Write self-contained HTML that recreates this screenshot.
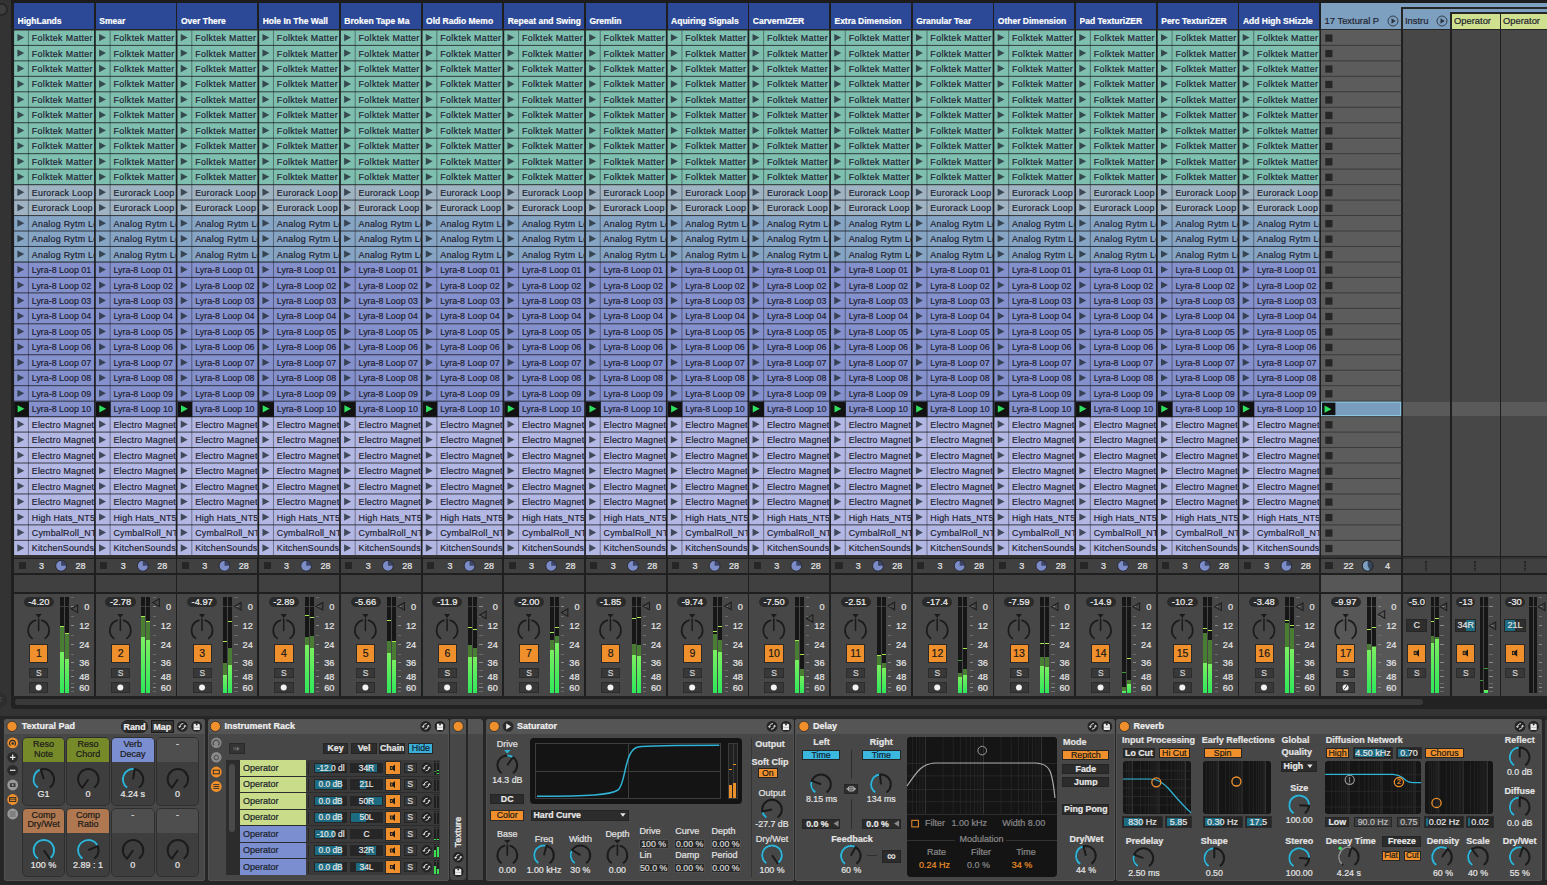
<!DOCTYPE html>
<html><head><meta charset="utf-8"><style>
html,body{margin:0;padding:0;}
body{width:1547px;height:885px;overflow:hidden;position:relative;background:#2f2f2f;font-family:"Liberation Sans", sans-serif;}
.a{position:absolute;}
.t{white-space:nowrap;-webkit-text-stroke:0.2px currentColor;}
.clip{overflow:hidden;}
svg{position:absolute;left:0;top:0;}
</style></head><body>
<div class="a" style="left:0px;top:0px;width:11px;height:709px;background:#333333;"></div>
<div class="a" style="left:11px;top:0px;width:1536px;height:709px;background:#1f1f1f;border-bottom-left-radius:7px;"></div>
<div class="a" style="left:11px;top:0px;width:1536px;height:3.3px;background:#1c1c1c;"></div>
<div class="a" style="left:14.1px;top:3.3px;width:79.95px;height:25.3px;background:#2b4997;"></div>
<div class="a" style="left:95.79px;top:3.3px;width:79.95px;height:25.3px;background:#2b4997;"></div>
<div class="a" style="left:177.47px;top:3.3px;width:79.95px;height:25.3px;background:#2b4997;"></div>
<div class="a" style="left:259.16px;top:3.3px;width:79.95px;height:25.3px;background:#2b4997;"></div>
<div class="a" style="left:340.85px;top:3.3px;width:79.95px;height:25.3px;background:#2b4997;"></div>
<div class="a" style="left:422.54px;top:3.3px;width:79.95px;height:25.3px;background:#2b4997;"></div>
<div class="a" style="left:504.22px;top:3.3px;width:79.95px;height:25.3px;background:#2b4997;"></div>
<div class="a" style="left:585.91px;top:3.3px;width:79.95px;height:25.3px;background:#2b4997;"></div>
<div class="a" style="left:667.6px;top:3.3px;width:79.95px;height:25.3px;background:#2b4997;"></div>
<div class="a" style="left:749.28px;top:3.3px;width:79.95px;height:25.3px;background:#2b4997;"></div>
<div class="a" style="left:830.97px;top:3.3px;width:79.95px;height:25.3px;background:#2b4997;"></div>
<div class="a" style="left:912.66px;top:3.3px;width:79.95px;height:25.3px;background:#2b4997;"></div>
<div class="a" style="left:994.34px;top:3.3px;width:79.95px;height:25.3px;background:#2b4997;"></div>
<div class="a" style="left:1076.03px;top:3.3px;width:79.95px;height:25.3px;background:#2b4997;"></div>
<div class="a" style="left:1157.72px;top:3.3px;width:79.95px;height:25.3px;background:#2b4997;"></div>
<div class="a" style="left:1239.4px;top:3.3px;width:79.95px;height:25.3px;background:#2b4997;"></div>
<svg class="a" style="left:0;top:0" width="1547" height="885"><defs><path id="p" d="M0 0L6.9 3.65L0 7.3Z"/><clipPath id="k0"><rect x="29.1" y="29" width="64.95" height="530"/></clipPath><clipPath id="k1"><rect x="110.79" y="29" width="64.95" height="530"/></clipPath><clipPath id="k2"><rect x="192.47" y="29" width="64.95" height="530"/></clipPath><clipPath id="k3"><rect x="274.16" y="29" width="64.95" height="530"/></clipPath><clipPath id="k4"><rect x="355.85" y="29" width="64.95" height="530"/></clipPath><clipPath id="k5"><rect x="437.54" y="29" width="64.95" height="530"/></clipPath><clipPath id="k6"><rect x="519.22" y="29" width="64.95" height="530"/></clipPath><clipPath id="k7"><rect x="600.91" y="29" width="64.95" height="530"/></clipPath><clipPath id="k8"><rect x="682.6" y="29" width="64.95" height="530"/></clipPath><clipPath id="k9"><rect x="764.28" y="29" width="64.95" height="530"/></clipPath><clipPath id="k10"><rect x="845.97" y="29" width="64.95" height="530"/></clipPath><clipPath id="k11"><rect x="927.66" y="29" width="64.95" height="530"/></clipPath><clipPath id="k12"><rect x="1009.34" y="29" width="64.95" height="530"/></clipPath><clipPath id="k13"><rect x="1091.03" y="29" width="64.95" height="530"/></clipPath><clipPath id="k14"><rect x="1172.72" y="29" width="64.95" height="530"/></clipPath><clipPath id="k15"><rect x="1254.4" y="29" width="64.95" height="530"/></clipPath></defs><rect x="14.1" y="30.43" width="79.95" height="154.67" fill="#7fbfb0"/><rect x="14.1" y="185.1" width="79.95" height="30.93" fill="#9fb3c2"/><rect x="14.1" y="216.03" width="79.95" height="46.4" fill="#86a4c4"/><rect x="14.1" y="262.44" width="79.95" height="154.67" fill="#8591cd"/><rect x="14.1" y="417.11" width="79.95" height="139.2" fill="#b3b7e3"/><rect x="27.9" y="30.43" width="1.05" height="525.88" fill="rgba(0,0,0,0.36)"/><rect x="14.1" y="401.64" width="14.85" height="15.47" fill="#121212"/><rect x="95.79" y="30.43" width="79.95" height="154.67" fill="#7fbfb0"/><rect x="95.79" y="185.1" width="79.95" height="30.93" fill="#9fb3c2"/><rect x="95.79" y="216.03" width="79.95" height="46.4" fill="#86a4c4"/><rect x="95.79" y="262.44" width="79.95" height="154.67" fill="#8591cd"/><rect x="95.79" y="417.11" width="79.95" height="139.2" fill="#b3b7e3"/><rect x="109.59" y="30.43" width="1.05" height="525.88" fill="rgba(0,0,0,0.36)"/><rect x="95.79" y="401.64" width="14.85" height="15.47" fill="#121212"/><rect x="177.47" y="30.43" width="79.95" height="154.67" fill="#7fbfb0"/><rect x="177.47" y="185.1" width="79.95" height="30.93" fill="#9fb3c2"/><rect x="177.47" y="216.03" width="79.95" height="46.4" fill="#86a4c4"/><rect x="177.47" y="262.44" width="79.95" height="154.67" fill="#8591cd"/><rect x="177.47" y="417.11" width="79.95" height="139.2" fill="#b3b7e3"/><rect x="191.27" y="30.43" width="1.05" height="525.88" fill="rgba(0,0,0,0.36)"/><rect x="177.47" y="401.64" width="14.85" height="15.47" fill="#121212"/><rect x="259.16" y="30.43" width="79.95" height="154.67" fill="#7fbfb0"/><rect x="259.16" y="185.1" width="79.95" height="30.93" fill="#9fb3c2"/><rect x="259.16" y="216.03" width="79.95" height="46.4" fill="#86a4c4"/><rect x="259.16" y="262.44" width="79.95" height="154.67" fill="#8591cd"/><rect x="259.16" y="417.11" width="79.95" height="139.2" fill="#b3b7e3"/><rect x="272.96" y="30.43" width="1.05" height="525.88" fill="rgba(0,0,0,0.36)"/><rect x="259.16" y="401.64" width="14.85" height="15.47" fill="#121212"/><rect x="340.85" y="30.43" width="79.95" height="154.67" fill="#7fbfb0"/><rect x="340.85" y="185.1" width="79.95" height="30.93" fill="#9fb3c2"/><rect x="340.85" y="216.03" width="79.95" height="46.4" fill="#86a4c4"/><rect x="340.85" y="262.44" width="79.95" height="154.67" fill="#8591cd"/><rect x="340.85" y="417.11" width="79.95" height="139.2" fill="#b3b7e3"/><rect x="354.65" y="30.43" width="1.05" height="525.88" fill="rgba(0,0,0,0.36)"/><rect x="340.85" y="401.64" width="14.85" height="15.47" fill="#121212"/><rect x="422.54" y="30.43" width="79.95" height="154.67" fill="#7fbfb0"/><rect x="422.54" y="185.1" width="79.95" height="30.93" fill="#9fb3c2"/><rect x="422.54" y="216.03" width="79.95" height="46.4" fill="#86a4c4"/><rect x="422.54" y="262.44" width="79.95" height="154.67" fill="#8591cd"/><rect x="422.54" y="417.11" width="79.95" height="139.2" fill="#b3b7e3"/><rect x="436.34" y="30.43" width="1.05" height="525.88" fill="rgba(0,0,0,0.36)"/><rect x="422.54" y="401.64" width="14.85" height="15.47" fill="#121212"/><rect x="504.22" y="30.43" width="79.95" height="154.67" fill="#7fbfb0"/><rect x="504.22" y="185.1" width="79.95" height="30.93" fill="#9fb3c2"/><rect x="504.22" y="216.03" width="79.95" height="46.4" fill="#86a4c4"/><rect x="504.22" y="262.44" width="79.95" height="154.67" fill="#8591cd"/><rect x="504.22" y="417.11" width="79.95" height="139.2" fill="#b3b7e3"/><rect x="518.02" y="30.43" width="1.05" height="525.88" fill="rgba(0,0,0,0.36)"/><rect x="504.22" y="401.64" width="14.85" height="15.47" fill="#121212"/><rect x="585.91" y="30.43" width="79.95" height="154.67" fill="#7fbfb0"/><rect x="585.91" y="185.1" width="79.95" height="30.93" fill="#9fb3c2"/><rect x="585.91" y="216.03" width="79.95" height="46.4" fill="#86a4c4"/><rect x="585.91" y="262.44" width="79.95" height="154.67" fill="#8591cd"/><rect x="585.91" y="417.11" width="79.95" height="139.2" fill="#b3b7e3"/><rect x="599.71" y="30.43" width="1.05" height="525.88" fill="rgba(0,0,0,0.36)"/><rect x="585.91" y="401.64" width="14.85" height="15.47" fill="#121212"/><rect x="667.6" y="30.43" width="79.95" height="154.67" fill="#7fbfb0"/><rect x="667.6" y="185.1" width="79.95" height="30.93" fill="#9fb3c2"/><rect x="667.6" y="216.03" width="79.95" height="46.4" fill="#86a4c4"/><rect x="667.6" y="262.44" width="79.95" height="154.67" fill="#8591cd"/><rect x="667.6" y="417.11" width="79.95" height="139.2" fill="#b3b7e3"/><rect x="681.4" y="30.43" width="1.05" height="525.88" fill="rgba(0,0,0,0.36)"/><rect x="667.6" y="401.64" width="14.85" height="15.47" fill="#121212"/><rect x="749.28" y="30.43" width="79.95" height="154.67" fill="#7fbfb0"/><rect x="749.28" y="185.1" width="79.95" height="30.93" fill="#9fb3c2"/><rect x="749.28" y="216.03" width="79.95" height="46.4" fill="#86a4c4"/><rect x="749.28" y="262.44" width="79.95" height="154.67" fill="#8591cd"/><rect x="749.28" y="417.11" width="79.95" height="139.2" fill="#b3b7e3"/><rect x="763.08" y="30.43" width="1.05" height="525.88" fill="rgba(0,0,0,0.36)"/><rect x="749.28" y="401.64" width="14.85" height="15.47" fill="#121212"/><rect x="830.97" y="30.43" width="79.95" height="154.67" fill="#7fbfb0"/><rect x="830.97" y="185.1" width="79.95" height="30.93" fill="#9fb3c2"/><rect x="830.97" y="216.03" width="79.95" height="46.4" fill="#86a4c4"/><rect x="830.97" y="262.44" width="79.95" height="154.67" fill="#8591cd"/><rect x="830.97" y="417.11" width="79.95" height="139.2" fill="#b3b7e3"/><rect x="844.77" y="30.43" width="1.05" height="525.88" fill="rgba(0,0,0,0.36)"/><rect x="830.97" y="401.64" width="14.85" height="15.47" fill="#121212"/><rect x="912.66" y="30.43" width="79.95" height="154.67" fill="#7fbfb0"/><rect x="912.66" y="185.1" width="79.95" height="30.93" fill="#9fb3c2"/><rect x="912.66" y="216.03" width="79.95" height="46.4" fill="#86a4c4"/><rect x="912.66" y="262.44" width="79.95" height="154.67" fill="#8591cd"/><rect x="912.66" y="417.11" width="79.95" height="139.2" fill="#b3b7e3"/><rect x="926.46" y="30.43" width="1.05" height="525.88" fill="rgba(0,0,0,0.36)"/><rect x="912.66" y="401.64" width="14.85" height="15.47" fill="#121212"/><rect x="994.34" y="30.43" width="79.95" height="154.67" fill="#7fbfb0"/><rect x="994.34" y="185.1" width="79.95" height="30.93" fill="#9fb3c2"/><rect x="994.34" y="216.03" width="79.95" height="46.4" fill="#86a4c4"/><rect x="994.34" y="262.44" width="79.95" height="154.67" fill="#8591cd"/><rect x="994.34" y="417.11" width="79.95" height="139.2" fill="#b3b7e3"/><rect x="1008.14" y="30.43" width="1.05" height="525.88" fill="rgba(0,0,0,0.36)"/><rect x="994.34" y="401.64" width="14.85" height="15.47" fill="#121212"/><rect x="1076.03" y="30.43" width="79.95" height="154.67" fill="#7fbfb0"/><rect x="1076.03" y="185.1" width="79.95" height="30.93" fill="#9fb3c2"/><rect x="1076.03" y="216.03" width="79.95" height="46.4" fill="#86a4c4"/><rect x="1076.03" y="262.44" width="79.95" height="154.67" fill="#8591cd"/><rect x="1076.03" y="417.11" width="79.95" height="139.2" fill="#b3b7e3"/><rect x="1089.83" y="30.43" width="1.05" height="525.88" fill="rgba(0,0,0,0.36)"/><rect x="1076.03" y="401.64" width="14.85" height="15.47" fill="#121212"/><rect x="1157.72" y="30.43" width="79.95" height="154.67" fill="#7fbfb0"/><rect x="1157.72" y="185.1" width="79.95" height="30.93" fill="#9fb3c2"/><rect x="1157.72" y="216.03" width="79.95" height="46.4" fill="#86a4c4"/><rect x="1157.72" y="262.44" width="79.95" height="154.67" fill="#8591cd"/><rect x="1157.72" y="417.11" width="79.95" height="139.2" fill="#b3b7e3"/><rect x="1171.52" y="30.43" width="1.05" height="525.88" fill="rgba(0,0,0,0.36)"/><rect x="1157.72" y="401.64" width="14.85" height="15.47" fill="#121212"/><rect x="1239.4" y="30.43" width="79.95" height="154.67" fill="#7fbfb0"/><rect x="1239.4" y="185.1" width="79.95" height="30.93" fill="#9fb3c2"/><rect x="1239.4" y="216.03" width="79.95" height="46.4" fill="#86a4c4"/><rect x="1239.4" y="262.44" width="79.95" height="154.67" fill="#8591cd"/><rect x="1239.4" y="417.11" width="79.95" height="139.2" fill="#b3b7e3"/><rect x="1253.2" y="30.43" width="1.05" height="525.88" fill="rgba(0,0,0,0.36)"/><rect x="1239.4" y="401.64" width="14.85" height="15.47" fill="#121212"/><rect x="14" y="44.9" width="1306.7" height="1" fill="rgba(25,25,30,0.78)"/><rect x="14" y="60.36" width="1306.7" height="1" fill="rgba(25,25,30,0.78)"/><rect x="14" y="75.83" width="1306.7" height="1" fill="rgba(25,25,30,0.78)"/><rect x="14" y="91.3" width="1306.7" height="1" fill="rgba(25,25,30,0.78)"/><rect x="14" y="106.77" width="1306.7" height="1" fill="rgba(25,25,30,0.78)"/><rect x="14" y="122.23" width="1306.7" height="1" fill="rgba(25,25,30,0.78)"/><rect x="14" y="137.7" width="1306.7" height="1" fill="rgba(25,25,30,0.78)"/><rect x="14" y="153.17" width="1306.7" height="1" fill="rgba(25,25,30,0.78)"/><rect x="14" y="168.63" width="1306.7" height="1" fill="rgba(25,25,30,0.78)"/><rect x="14" y="184.1" width="1306.7" height="1" fill="rgba(25,25,30,0.78)"/><rect x="14" y="199.57" width="1306.7" height="1" fill="rgba(25,25,30,0.78)"/><rect x="14" y="215.03" width="1306.7" height="1" fill="rgba(25,25,30,0.78)"/><rect x="14" y="230.5" width="1306.7" height="1" fill="rgba(25,25,30,0.78)"/><rect x="14" y="245.97" width="1306.7" height="1" fill="rgba(25,25,30,0.78)"/><rect x="14" y="261.44" width="1306.7" height="1" fill="rgba(25,25,30,0.78)"/><rect x="14" y="276.9" width="1306.7" height="1" fill="rgba(25,25,30,0.78)"/><rect x="14" y="292.37" width="1306.7" height="1" fill="rgba(25,25,30,0.78)"/><rect x="14" y="307.84" width="1306.7" height="1" fill="rgba(25,25,30,0.78)"/><rect x="14" y="323.3" width="1306.7" height="1" fill="rgba(25,25,30,0.78)"/><rect x="14" y="338.77" width="1306.7" height="1" fill="rgba(25,25,30,0.78)"/><rect x="14" y="354.24" width="1306.7" height="1" fill="rgba(25,25,30,0.78)"/><rect x="14" y="369.7" width="1306.7" height="1" fill="rgba(25,25,30,0.78)"/><rect x="14" y="385.17" width="1306.7" height="1" fill="rgba(25,25,30,0.78)"/><rect x="14" y="400.64" width="1306.7" height="1" fill="rgba(25,25,30,0.78)"/><rect x="14" y="416.11" width="1306.7" height="1" fill="rgba(25,25,30,0.78)"/><rect x="14" y="431.57" width="1306.7" height="1" fill="rgba(25,25,30,0.78)"/><rect x="14" y="447.04" width="1306.7" height="1" fill="rgba(25,25,30,0.78)"/><rect x="14" y="462.51" width="1306.7" height="1" fill="rgba(25,25,30,0.78)"/><rect x="14" y="477.97" width="1306.7" height="1" fill="rgba(25,25,30,0.78)"/><rect x="14" y="493.44" width="1306.7" height="1" fill="rgba(25,25,30,0.78)"/><rect x="14" y="508.91" width="1306.7" height="1" fill="rgba(25,25,30,0.78)"/><rect x="14" y="524.37" width="1306.7" height="1" fill="rgba(25,25,30,0.78)"/><rect x="14" y="539.84" width="1306.7" height="1" fill="rgba(25,25,30,0.78)"/><rect x="14" y="555.31" width="1306.7" height="1" fill="rgba(25,25,30,0.78)"/><g fill="rgba(35,45,55,0.8)"><use href="#p" x="17.4" y="33.93"/><use href="#p" x="17.4" y="49.4"/><use href="#p" x="17.4" y="64.86"/><use href="#p" x="17.4" y="80.33"/><use href="#p" x="17.4" y="95.8"/><use href="#p" x="17.4" y="111.27"/><use href="#p" x="17.4" y="126.73"/><use href="#p" x="17.4" y="142.2"/><use href="#p" x="17.4" y="157.67"/><use href="#p" x="17.4" y="173.13"/><use href="#p" x="17.4" y="188.6"/><use href="#p" x="17.4" y="204.07"/><use href="#p" x="17.4" y="219.53"/><use href="#p" x="17.4" y="235"/><use href="#p" x="17.4" y="250.47"/><use href="#p" x="17.4" y="265.94"/><use href="#p" x="17.4" y="281.4"/><use href="#p" x="17.4" y="296.87"/><use href="#p" x="17.4" y="312.34"/><use href="#p" x="17.4" y="327.8"/><use href="#p" x="17.4" y="343.27"/><use href="#p" x="17.4" y="358.74"/><use href="#p" x="17.4" y="374.2"/><use href="#p" x="17.4" y="389.67"/><use href="#p" x="17.4" y="420.61"/><use href="#p" x="17.4" y="436.07"/><use href="#p" x="17.4" y="451.54"/><use href="#p" x="17.4" y="467.01"/><use href="#p" x="17.4" y="482.47"/><use href="#p" x="17.4" y="497.94"/><use href="#p" x="17.4" y="513.41"/><use href="#p" x="17.4" y="528.87"/><use href="#p" x="17.4" y="544.34"/><use href="#p" x="99.09" y="33.93"/><use href="#p" x="99.09" y="49.4"/><use href="#p" x="99.09" y="64.86"/><use href="#p" x="99.09" y="80.33"/><use href="#p" x="99.09" y="95.8"/><use href="#p" x="99.09" y="111.27"/><use href="#p" x="99.09" y="126.73"/><use href="#p" x="99.09" y="142.2"/><use href="#p" x="99.09" y="157.67"/><use href="#p" x="99.09" y="173.13"/><use href="#p" x="99.09" y="188.6"/><use href="#p" x="99.09" y="204.07"/><use href="#p" x="99.09" y="219.53"/><use href="#p" x="99.09" y="235"/><use href="#p" x="99.09" y="250.47"/><use href="#p" x="99.09" y="265.94"/><use href="#p" x="99.09" y="281.4"/><use href="#p" x="99.09" y="296.87"/><use href="#p" x="99.09" y="312.34"/><use href="#p" x="99.09" y="327.8"/><use href="#p" x="99.09" y="343.27"/><use href="#p" x="99.09" y="358.74"/><use href="#p" x="99.09" y="374.2"/><use href="#p" x="99.09" y="389.67"/><use href="#p" x="99.09" y="420.61"/><use href="#p" x="99.09" y="436.07"/><use href="#p" x="99.09" y="451.54"/><use href="#p" x="99.09" y="467.01"/><use href="#p" x="99.09" y="482.47"/><use href="#p" x="99.09" y="497.94"/><use href="#p" x="99.09" y="513.41"/><use href="#p" x="99.09" y="528.87"/><use href="#p" x="99.09" y="544.34"/><use href="#p" x="180.77" y="33.93"/><use href="#p" x="180.77" y="49.4"/><use href="#p" x="180.77" y="64.86"/><use href="#p" x="180.77" y="80.33"/><use href="#p" x="180.77" y="95.8"/><use href="#p" x="180.77" y="111.27"/><use href="#p" x="180.77" y="126.73"/><use href="#p" x="180.77" y="142.2"/><use href="#p" x="180.77" y="157.67"/><use href="#p" x="180.77" y="173.13"/><use href="#p" x="180.77" y="188.6"/><use href="#p" x="180.77" y="204.07"/><use href="#p" x="180.77" y="219.53"/><use href="#p" x="180.77" y="235"/><use href="#p" x="180.77" y="250.47"/><use href="#p" x="180.77" y="265.94"/><use href="#p" x="180.77" y="281.4"/><use href="#p" x="180.77" y="296.87"/><use href="#p" x="180.77" y="312.34"/><use href="#p" x="180.77" y="327.8"/><use href="#p" x="180.77" y="343.27"/><use href="#p" x="180.77" y="358.74"/><use href="#p" x="180.77" y="374.2"/><use href="#p" x="180.77" y="389.67"/><use href="#p" x="180.77" y="420.61"/><use href="#p" x="180.77" y="436.07"/><use href="#p" x="180.77" y="451.54"/><use href="#p" x="180.77" y="467.01"/><use href="#p" x="180.77" y="482.47"/><use href="#p" x="180.77" y="497.94"/><use href="#p" x="180.77" y="513.41"/><use href="#p" x="180.77" y="528.87"/><use href="#p" x="180.77" y="544.34"/><use href="#p" x="262.46" y="33.93"/><use href="#p" x="262.46" y="49.4"/><use href="#p" x="262.46" y="64.86"/><use href="#p" x="262.46" y="80.33"/><use href="#p" x="262.46" y="95.8"/><use href="#p" x="262.46" y="111.27"/><use href="#p" x="262.46" y="126.73"/><use href="#p" x="262.46" y="142.2"/><use href="#p" x="262.46" y="157.67"/><use href="#p" x="262.46" y="173.13"/><use href="#p" x="262.46" y="188.6"/><use href="#p" x="262.46" y="204.07"/><use href="#p" x="262.46" y="219.53"/><use href="#p" x="262.46" y="235"/><use href="#p" x="262.46" y="250.47"/><use href="#p" x="262.46" y="265.94"/><use href="#p" x="262.46" y="281.4"/><use href="#p" x="262.46" y="296.87"/><use href="#p" x="262.46" y="312.34"/><use href="#p" x="262.46" y="327.8"/><use href="#p" x="262.46" y="343.27"/><use href="#p" x="262.46" y="358.74"/><use href="#p" x="262.46" y="374.2"/><use href="#p" x="262.46" y="389.67"/><use href="#p" x="262.46" y="420.61"/><use href="#p" x="262.46" y="436.07"/><use href="#p" x="262.46" y="451.54"/><use href="#p" x="262.46" y="467.01"/><use href="#p" x="262.46" y="482.47"/><use href="#p" x="262.46" y="497.94"/><use href="#p" x="262.46" y="513.41"/><use href="#p" x="262.46" y="528.87"/><use href="#p" x="262.46" y="544.34"/><use href="#p" x="344.15" y="33.93"/><use href="#p" x="344.15" y="49.4"/><use href="#p" x="344.15" y="64.86"/><use href="#p" x="344.15" y="80.33"/><use href="#p" x="344.15" y="95.8"/><use href="#p" x="344.15" y="111.27"/><use href="#p" x="344.15" y="126.73"/><use href="#p" x="344.15" y="142.2"/><use href="#p" x="344.15" y="157.67"/><use href="#p" x="344.15" y="173.13"/><use href="#p" x="344.15" y="188.6"/><use href="#p" x="344.15" y="204.07"/><use href="#p" x="344.15" y="219.53"/><use href="#p" x="344.15" y="235"/><use href="#p" x="344.15" y="250.47"/><use href="#p" x="344.15" y="265.94"/><use href="#p" x="344.15" y="281.4"/><use href="#p" x="344.15" y="296.87"/><use href="#p" x="344.15" y="312.34"/><use href="#p" x="344.15" y="327.8"/><use href="#p" x="344.15" y="343.27"/><use href="#p" x="344.15" y="358.74"/><use href="#p" x="344.15" y="374.2"/><use href="#p" x="344.15" y="389.67"/><use href="#p" x="344.15" y="420.61"/><use href="#p" x="344.15" y="436.07"/><use href="#p" x="344.15" y="451.54"/><use href="#p" x="344.15" y="467.01"/><use href="#p" x="344.15" y="482.47"/><use href="#p" x="344.15" y="497.94"/><use href="#p" x="344.15" y="513.41"/><use href="#p" x="344.15" y="528.87"/><use href="#p" x="344.15" y="544.34"/><use href="#p" x="425.84" y="33.93"/><use href="#p" x="425.84" y="49.4"/><use href="#p" x="425.84" y="64.86"/><use href="#p" x="425.84" y="80.33"/><use href="#p" x="425.84" y="95.8"/><use href="#p" x="425.84" y="111.27"/><use href="#p" x="425.84" y="126.73"/><use href="#p" x="425.84" y="142.2"/><use href="#p" x="425.84" y="157.67"/><use href="#p" x="425.84" y="173.13"/><use href="#p" x="425.84" y="188.6"/><use href="#p" x="425.84" y="204.07"/><use href="#p" x="425.84" y="219.53"/><use href="#p" x="425.84" y="235"/><use href="#p" x="425.84" y="250.47"/><use href="#p" x="425.84" y="265.94"/><use href="#p" x="425.84" y="281.4"/><use href="#p" x="425.84" y="296.87"/><use href="#p" x="425.84" y="312.34"/><use href="#p" x="425.84" y="327.8"/><use href="#p" x="425.84" y="343.27"/><use href="#p" x="425.84" y="358.74"/><use href="#p" x="425.84" y="374.2"/><use href="#p" x="425.84" y="389.67"/><use href="#p" x="425.84" y="420.61"/><use href="#p" x="425.84" y="436.07"/><use href="#p" x="425.84" y="451.54"/><use href="#p" x="425.84" y="467.01"/><use href="#p" x="425.84" y="482.47"/><use href="#p" x="425.84" y="497.94"/><use href="#p" x="425.84" y="513.41"/><use href="#p" x="425.84" y="528.87"/><use href="#p" x="425.84" y="544.34"/><use href="#p" x="507.52" y="33.93"/><use href="#p" x="507.52" y="49.4"/><use href="#p" x="507.52" y="64.86"/><use href="#p" x="507.52" y="80.33"/><use href="#p" x="507.52" y="95.8"/><use href="#p" x="507.52" y="111.27"/><use href="#p" x="507.52" y="126.73"/><use href="#p" x="507.52" y="142.2"/><use href="#p" x="507.52" y="157.67"/><use href="#p" x="507.52" y="173.13"/><use href="#p" x="507.52" y="188.6"/><use href="#p" x="507.52" y="204.07"/><use href="#p" x="507.52" y="219.53"/><use href="#p" x="507.52" y="235"/><use href="#p" x="507.52" y="250.47"/><use href="#p" x="507.52" y="265.94"/><use href="#p" x="507.52" y="281.4"/><use href="#p" x="507.52" y="296.87"/><use href="#p" x="507.52" y="312.34"/><use href="#p" x="507.52" y="327.8"/><use href="#p" x="507.52" y="343.27"/><use href="#p" x="507.52" y="358.74"/><use href="#p" x="507.52" y="374.2"/><use href="#p" x="507.52" y="389.67"/><use href="#p" x="507.52" y="420.61"/><use href="#p" x="507.52" y="436.07"/><use href="#p" x="507.52" y="451.54"/><use href="#p" x="507.52" y="467.01"/><use href="#p" x="507.52" y="482.47"/><use href="#p" x="507.52" y="497.94"/><use href="#p" x="507.52" y="513.41"/><use href="#p" x="507.52" y="528.87"/><use href="#p" x="507.52" y="544.34"/><use href="#p" x="589.21" y="33.93"/><use href="#p" x="589.21" y="49.4"/><use href="#p" x="589.21" y="64.86"/><use href="#p" x="589.21" y="80.33"/><use href="#p" x="589.21" y="95.8"/><use href="#p" x="589.21" y="111.27"/><use href="#p" x="589.21" y="126.73"/><use href="#p" x="589.21" y="142.2"/><use href="#p" x="589.21" y="157.67"/><use href="#p" x="589.21" y="173.13"/><use href="#p" x="589.21" y="188.6"/><use href="#p" x="589.21" y="204.07"/><use href="#p" x="589.21" y="219.53"/><use href="#p" x="589.21" y="235"/><use href="#p" x="589.21" y="250.47"/><use href="#p" x="589.21" y="265.94"/><use href="#p" x="589.21" y="281.4"/><use href="#p" x="589.21" y="296.87"/><use href="#p" x="589.21" y="312.34"/><use href="#p" x="589.21" y="327.8"/><use href="#p" x="589.21" y="343.27"/><use href="#p" x="589.21" y="358.74"/><use href="#p" x="589.21" y="374.2"/><use href="#p" x="589.21" y="389.67"/><use href="#p" x="589.21" y="420.61"/><use href="#p" x="589.21" y="436.07"/><use href="#p" x="589.21" y="451.54"/><use href="#p" x="589.21" y="467.01"/><use href="#p" x="589.21" y="482.47"/><use href="#p" x="589.21" y="497.94"/><use href="#p" x="589.21" y="513.41"/><use href="#p" x="589.21" y="528.87"/><use href="#p" x="589.21" y="544.34"/><use href="#p" x="670.9" y="33.93"/><use href="#p" x="670.9" y="49.4"/><use href="#p" x="670.9" y="64.86"/><use href="#p" x="670.9" y="80.33"/><use href="#p" x="670.9" y="95.8"/><use href="#p" x="670.9" y="111.27"/><use href="#p" x="670.9" y="126.73"/><use href="#p" x="670.9" y="142.2"/><use href="#p" x="670.9" y="157.67"/><use href="#p" x="670.9" y="173.13"/><use href="#p" x="670.9" y="188.6"/><use href="#p" x="670.9" y="204.07"/><use href="#p" x="670.9" y="219.53"/><use href="#p" x="670.9" y="235"/><use href="#p" x="670.9" y="250.47"/><use href="#p" x="670.9" y="265.94"/><use href="#p" x="670.9" y="281.4"/><use href="#p" x="670.9" y="296.87"/><use href="#p" x="670.9" y="312.34"/><use href="#p" x="670.9" y="327.8"/><use href="#p" x="670.9" y="343.27"/><use href="#p" x="670.9" y="358.74"/><use href="#p" x="670.9" y="374.2"/><use href="#p" x="670.9" y="389.67"/><use href="#p" x="670.9" y="420.61"/><use href="#p" x="670.9" y="436.07"/><use href="#p" x="670.9" y="451.54"/><use href="#p" x="670.9" y="467.01"/><use href="#p" x="670.9" y="482.47"/><use href="#p" x="670.9" y="497.94"/><use href="#p" x="670.9" y="513.41"/><use href="#p" x="670.9" y="528.87"/><use href="#p" x="670.9" y="544.34"/><use href="#p" x="752.58" y="33.93"/><use href="#p" x="752.58" y="49.4"/><use href="#p" x="752.58" y="64.86"/><use href="#p" x="752.58" y="80.33"/><use href="#p" x="752.58" y="95.8"/><use href="#p" x="752.58" y="111.27"/><use href="#p" x="752.58" y="126.73"/><use href="#p" x="752.58" y="142.2"/><use href="#p" x="752.58" y="157.67"/><use href="#p" x="752.58" y="173.13"/><use href="#p" x="752.58" y="188.6"/><use href="#p" x="752.58" y="204.07"/><use href="#p" x="752.58" y="219.53"/><use href="#p" x="752.58" y="235"/><use href="#p" x="752.58" y="250.47"/><use href="#p" x="752.58" y="265.94"/><use href="#p" x="752.58" y="281.4"/><use href="#p" x="752.58" y="296.87"/><use href="#p" x="752.58" y="312.34"/><use href="#p" x="752.58" y="327.8"/><use href="#p" x="752.58" y="343.27"/><use href="#p" x="752.58" y="358.74"/><use href="#p" x="752.58" y="374.2"/><use href="#p" x="752.58" y="389.67"/><use href="#p" x="752.58" y="420.61"/><use href="#p" x="752.58" y="436.07"/><use href="#p" x="752.58" y="451.54"/><use href="#p" x="752.58" y="467.01"/><use href="#p" x="752.58" y="482.47"/><use href="#p" x="752.58" y="497.94"/><use href="#p" x="752.58" y="513.41"/><use href="#p" x="752.58" y="528.87"/><use href="#p" x="752.58" y="544.34"/><use href="#p" x="834.27" y="33.93"/><use href="#p" x="834.27" y="49.4"/><use href="#p" x="834.27" y="64.86"/><use href="#p" x="834.27" y="80.33"/><use href="#p" x="834.27" y="95.8"/><use href="#p" x="834.27" y="111.27"/><use href="#p" x="834.27" y="126.73"/><use href="#p" x="834.27" y="142.2"/><use href="#p" x="834.27" y="157.67"/><use href="#p" x="834.27" y="173.13"/><use href="#p" x="834.27" y="188.6"/><use href="#p" x="834.27" y="204.07"/><use href="#p" x="834.27" y="219.53"/><use href="#p" x="834.27" y="235"/><use href="#p" x="834.27" y="250.47"/><use href="#p" x="834.27" y="265.94"/><use href="#p" x="834.27" y="281.4"/><use href="#p" x="834.27" y="296.87"/><use href="#p" x="834.27" y="312.34"/><use href="#p" x="834.27" y="327.8"/><use href="#p" x="834.27" y="343.27"/><use href="#p" x="834.27" y="358.74"/><use href="#p" x="834.27" y="374.2"/><use href="#p" x="834.27" y="389.67"/><use href="#p" x="834.27" y="420.61"/><use href="#p" x="834.27" y="436.07"/><use href="#p" x="834.27" y="451.54"/><use href="#p" x="834.27" y="467.01"/><use href="#p" x="834.27" y="482.47"/><use href="#p" x="834.27" y="497.94"/><use href="#p" x="834.27" y="513.41"/><use href="#p" x="834.27" y="528.87"/><use href="#p" x="834.27" y="544.34"/><use href="#p" x="915.96" y="33.93"/><use href="#p" x="915.96" y="49.4"/><use href="#p" x="915.96" y="64.86"/><use href="#p" x="915.96" y="80.33"/><use href="#p" x="915.96" y="95.8"/><use href="#p" x="915.96" y="111.27"/><use href="#p" x="915.96" y="126.73"/><use href="#p" x="915.96" y="142.2"/><use href="#p" x="915.96" y="157.67"/><use href="#p" x="915.96" y="173.13"/><use href="#p" x="915.96" y="188.6"/><use href="#p" x="915.96" y="204.07"/><use href="#p" x="915.96" y="219.53"/><use href="#p" x="915.96" y="235"/><use href="#p" x="915.96" y="250.47"/><use href="#p" x="915.96" y="265.94"/><use href="#p" x="915.96" y="281.4"/><use href="#p" x="915.96" y="296.87"/><use href="#p" x="915.96" y="312.34"/><use href="#p" x="915.96" y="327.8"/><use href="#p" x="915.96" y="343.27"/><use href="#p" x="915.96" y="358.74"/><use href="#p" x="915.96" y="374.2"/><use href="#p" x="915.96" y="389.67"/><use href="#p" x="915.96" y="420.61"/><use href="#p" x="915.96" y="436.07"/><use href="#p" x="915.96" y="451.54"/><use href="#p" x="915.96" y="467.01"/><use href="#p" x="915.96" y="482.47"/><use href="#p" x="915.96" y="497.94"/><use href="#p" x="915.96" y="513.41"/><use href="#p" x="915.96" y="528.87"/><use href="#p" x="915.96" y="544.34"/><use href="#p" x="997.64" y="33.93"/><use href="#p" x="997.64" y="49.4"/><use href="#p" x="997.64" y="64.86"/><use href="#p" x="997.64" y="80.33"/><use href="#p" x="997.64" y="95.8"/><use href="#p" x="997.64" y="111.27"/><use href="#p" x="997.64" y="126.73"/><use href="#p" x="997.64" y="142.2"/><use href="#p" x="997.64" y="157.67"/><use href="#p" x="997.64" y="173.13"/><use href="#p" x="997.64" y="188.6"/><use href="#p" x="997.64" y="204.07"/><use href="#p" x="997.64" y="219.53"/><use href="#p" x="997.64" y="235"/><use href="#p" x="997.64" y="250.47"/><use href="#p" x="997.64" y="265.94"/><use href="#p" x="997.64" y="281.4"/><use href="#p" x="997.64" y="296.87"/><use href="#p" x="997.64" y="312.34"/><use href="#p" x="997.64" y="327.8"/><use href="#p" x="997.64" y="343.27"/><use href="#p" x="997.64" y="358.74"/><use href="#p" x="997.64" y="374.2"/><use href="#p" x="997.64" y="389.67"/><use href="#p" x="997.64" y="420.61"/><use href="#p" x="997.64" y="436.07"/><use href="#p" x="997.64" y="451.54"/><use href="#p" x="997.64" y="467.01"/><use href="#p" x="997.64" y="482.47"/><use href="#p" x="997.64" y="497.94"/><use href="#p" x="997.64" y="513.41"/><use href="#p" x="997.64" y="528.87"/><use href="#p" x="997.64" y="544.34"/><use href="#p" x="1079.33" y="33.93"/><use href="#p" x="1079.33" y="49.4"/><use href="#p" x="1079.33" y="64.86"/><use href="#p" x="1079.33" y="80.33"/><use href="#p" x="1079.33" y="95.8"/><use href="#p" x="1079.33" y="111.27"/><use href="#p" x="1079.33" y="126.73"/><use href="#p" x="1079.33" y="142.2"/><use href="#p" x="1079.33" y="157.67"/><use href="#p" x="1079.33" y="173.13"/><use href="#p" x="1079.33" y="188.6"/><use href="#p" x="1079.33" y="204.07"/><use href="#p" x="1079.33" y="219.53"/><use href="#p" x="1079.33" y="235"/><use href="#p" x="1079.33" y="250.47"/><use href="#p" x="1079.33" y="265.94"/><use href="#p" x="1079.33" y="281.4"/><use href="#p" x="1079.33" y="296.87"/><use href="#p" x="1079.33" y="312.34"/><use href="#p" x="1079.33" y="327.8"/><use href="#p" x="1079.33" y="343.27"/><use href="#p" x="1079.33" y="358.74"/><use href="#p" x="1079.33" y="374.2"/><use href="#p" x="1079.33" y="389.67"/><use href="#p" x="1079.33" y="420.61"/><use href="#p" x="1079.33" y="436.07"/><use href="#p" x="1079.33" y="451.54"/><use href="#p" x="1079.33" y="467.01"/><use href="#p" x="1079.33" y="482.47"/><use href="#p" x="1079.33" y="497.94"/><use href="#p" x="1079.33" y="513.41"/><use href="#p" x="1079.33" y="528.87"/><use href="#p" x="1079.33" y="544.34"/><use href="#p" x="1161.02" y="33.93"/><use href="#p" x="1161.02" y="49.4"/><use href="#p" x="1161.02" y="64.86"/><use href="#p" x="1161.02" y="80.33"/><use href="#p" x="1161.02" y="95.8"/><use href="#p" x="1161.02" y="111.27"/><use href="#p" x="1161.02" y="126.73"/><use href="#p" x="1161.02" y="142.2"/><use href="#p" x="1161.02" y="157.67"/><use href="#p" x="1161.02" y="173.13"/><use href="#p" x="1161.02" y="188.6"/><use href="#p" x="1161.02" y="204.07"/><use href="#p" x="1161.02" y="219.53"/><use href="#p" x="1161.02" y="235"/><use href="#p" x="1161.02" y="250.47"/><use href="#p" x="1161.02" y="265.94"/><use href="#p" x="1161.02" y="281.4"/><use href="#p" x="1161.02" y="296.87"/><use href="#p" x="1161.02" y="312.34"/><use href="#p" x="1161.02" y="327.8"/><use href="#p" x="1161.02" y="343.27"/><use href="#p" x="1161.02" y="358.74"/><use href="#p" x="1161.02" y="374.2"/><use href="#p" x="1161.02" y="389.67"/><use href="#p" x="1161.02" y="420.61"/><use href="#p" x="1161.02" y="436.07"/><use href="#p" x="1161.02" y="451.54"/><use href="#p" x="1161.02" y="467.01"/><use href="#p" x="1161.02" y="482.47"/><use href="#p" x="1161.02" y="497.94"/><use href="#p" x="1161.02" y="513.41"/><use href="#p" x="1161.02" y="528.87"/><use href="#p" x="1161.02" y="544.34"/><use href="#p" x="1242.7" y="33.93"/><use href="#p" x="1242.7" y="49.4"/><use href="#p" x="1242.7" y="64.86"/><use href="#p" x="1242.7" y="80.33"/><use href="#p" x="1242.7" y="95.8"/><use href="#p" x="1242.7" y="111.27"/><use href="#p" x="1242.7" y="126.73"/><use href="#p" x="1242.7" y="142.2"/><use href="#p" x="1242.7" y="157.67"/><use href="#p" x="1242.7" y="173.13"/><use href="#p" x="1242.7" y="188.6"/><use href="#p" x="1242.7" y="204.07"/><use href="#p" x="1242.7" y="219.53"/><use href="#p" x="1242.7" y="235"/><use href="#p" x="1242.7" y="250.47"/><use href="#p" x="1242.7" y="265.94"/><use href="#p" x="1242.7" y="281.4"/><use href="#p" x="1242.7" y="296.87"/><use href="#p" x="1242.7" y="312.34"/><use href="#p" x="1242.7" y="327.8"/><use href="#p" x="1242.7" y="343.27"/><use href="#p" x="1242.7" y="358.74"/><use href="#p" x="1242.7" y="374.2"/><use href="#p" x="1242.7" y="389.67"/><use href="#p" x="1242.7" y="420.61"/><use href="#p" x="1242.7" y="436.07"/><use href="#p" x="1242.7" y="451.54"/><use href="#p" x="1242.7" y="467.01"/><use href="#p" x="1242.7" y="482.47"/><use href="#p" x="1242.7" y="497.94"/><use href="#p" x="1242.7" y="513.41"/><use href="#p" x="1242.7" y="528.87"/><use href="#p" x="1242.7" y="544.34"/></g><g fill="#30e060"><use href="#p" x="17.6" y="405.14"/><use href="#p" x="99.29" y="405.14"/><use href="#p" x="180.97" y="405.14"/><use href="#p" x="262.66" y="405.14"/><use href="#p" x="344.35" y="405.14"/><use href="#p" x="426.04" y="405.14"/><use href="#p" x="507.72" y="405.14"/><use href="#p" x="589.41" y="405.14"/><use href="#p" x="671.1" y="405.14"/><use href="#p" x="752.78" y="405.14"/><use href="#p" x="834.47" y="405.14"/><use href="#p" x="916.16" y="405.14"/><use href="#p" x="997.84" y="405.14"/><use href="#p" x="1079.53" y="405.14"/><use href="#p" x="1161.22" y="405.14"/><use href="#p" x="1242.9" y="405.14"/></g><g font-family="Liberation Sans, sans-serif" font-size="8.9" fill="#1d1d30" stroke="#1d1d30" stroke-width="0.18"><g clip-path="url(#k0)"><text x="31.8" y="41.03" letter-spacing="0.35">Folktek Matter</text><text x="31.8" y="56.5" letter-spacing="0.35">Folktek Matter</text><text x="31.8" y="71.96" letter-spacing="0.35">Folktek Matter</text><text x="31.8" y="87.43" letter-spacing="0.35">Folktek Matter</text><text x="31.8" y="102.9" letter-spacing="0.35">Folktek Matter</text><text x="31.8" y="118.37" letter-spacing="0.35">Folktek Matter</text><text x="31.8" y="133.83" letter-spacing="0.35">Folktek Matter</text><text x="31.8" y="149.3" letter-spacing="0.35">Folktek Matter</text><text x="31.8" y="164.77" letter-spacing="0.35">Folktek Matter</text><text x="31.8" y="180.23" letter-spacing="0.35">Folktek Matter</text><text x="31.8" y="195.7" letter-spacing="0.25">Eurorack Loop 01</text><text x="31.8" y="211.17" letter-spacing="0.25">Eurorack Loop 01</text><text x="31.8" y="226.63" letter-spacing="0.25">Analog Rytm Loop</text><text x="31.8" y="242.1" letter-spacing="0.25">Analog Rytm Loop</text><text x="31.8" y="257.57" letter-spacing="0.25">Analog Rytm Loop</text><text x="31.8" y="273.04">Lyra-8 Loop 01</text><text x="31.8" y="288.5">Lyra-8 Loop 02</text><text x="31.8" y="303.97">Lyra-8 Loop 03</text><text x="31.8" y="319.44">Lyra-8 Loop 04</text><text x="31.8" y="334.9">Lyra-8 Loop 05</text><text x="31.8" y="350.37">Lyra-8 Loop 06</text><text x="31.8" y="365.84">Lyra-8 Loop 07</text><text x="31.8" y="381.3">Lyra-8 Loop 08</text><text x="31.8" y="396.77">Lyra-8 Loop 09</text><text x="31.8" y="412.24">Lyra-8 Loop 10</text><text x="31.8" y="427.71" letter-spacing="0.2">Electro Magnet</text><text x="31.8" y="443.17" letter-spacing="0.2">Electro Magnet</text><text x="31.8" y="458.64" letter-spacing="0.2">Electro Magnet</text><text x="31.8" y="474.11" letter-spacing="0.2">Electro Magnet</text><text x="31.8" y="489.57" letter-spacing="0.2">Electro Magnet</text><text x="31.8" y="505.04" letter-spacing="0.2">Electro Magnet</text><text x="31.8" y="520.51" letter-spacing="0.2">High Hats_NT5</text><text x="31.8" y="535.97" letter-spacing="0.2">CymbalRoll_NT5</text><text x="31.8" y="551.44" letter-spacing="0.2">KitchenSounds</text></g><g clip-path="url(#k1)"><text x="113.49" y="41.03" letter-spacing="0.35">Folktek Matter</text><text x="113.49" y="56.5" letter-spacing="0.35">Folktek Matter</text><text x="113.49" y="71.96" letter-spacing="0.35">Folktek Matter</text><text x="113.49" y="87.43" letter-spacing="0.35">Folktek Matter</text><text x="113.49" y="102.9" letter-spacing="0.35">Folktek Matter</text><text x="113.49" y="118.37" letter-spacing="0.35">Folktek Matter</text><text x="113.49" y="133.83" letter-spacing="0.35">Folktek Matter</text><text x="113.49" y="149.3" letter-spacing="0.35">Folktek Matter</text><text x="113.49" y="164.77" letter-spacing="0.35">Folktek Matter</text><text x="113.49" y="180.23" letter-spacing="0.35">Folktek Matter</text><text x="113.49" y="195.7" letter-spacing="0.25">Eurorack Loop 01</text><text x="113.49" y="211.17" letter-spacing="0.25">Eurorack Loop 01</text><text x="113.49" y="226.63" letter-spacing="0.25">Analog Rytm Loop</text><text x="113.49" y="242.1" letter-spacing="0.25">Analog Rytm Loop</text><text x="113.49" y="257.57" letter-spacing="0.25">Analog Rytm Loop</text><text x="113.49" y="273.04">Lyra-8 Loop 01</text><text x="113.49" y="288.5">Lyra-8 Loop 02</text><text x="113.49" y="303.97">Lyra-8 Loop 03</text><text x="113.49" y="319.44">Lyra-8 Loop 04</text><text x="113.49" y="334.9">Lyra-8 Loop 05</text><text x="113.49" y="350.37">Lyra-8 Loop 06</text><text x="113.49" y="365.84">Lyra-8 Loop 07</text><text x="113.49" y="381.3">Lyra-8 Loop 08</text><text x="113.49" y="396.77">Lyra-8 Loop 09</text><text x="113.49" y="412.24">Lyra-8 Loop 10</text><text x="113.49" y="427.71" letter-spacing="0.2">Electro Magnet</text><text x="113.49" y="443.17" letter-spacing="0.2">Electro Magnet</text><text x="113.49" y="458.64" letter-spacing="0.2">Electro Magnet</text><text x="113.49" y="474.11" letter-spacing="0.2">Electro Magnet</text><text x="113.49" y="489.57" letter-spacing="0.2">Electro Magnet</text><text x="113.49" y="505.04" letter-spacing="0.2">Electro Magnet</text><text x="113.49" y="520.51" letter-spacing="0.2">High Hats_NT5</text><text x="113.49" y="535.97" letter-spacing="0.2">CymbalRoll_NT5</text><text x="113.49" y="551.44" letter-spacing="0.2">KitchenSounds</text></g><g clip-path="url(#k2)"><text x="195.17" y="41.03" letter-spacing="0.35">Folktek Matter</text><text x="195.17" y="56.5" letter-spacing="0.35">Folktek Matter</text><text x="195.17" y="71.96" letter-spacing="0.35">Folktek Matter</text><text x="195.17" y="87.43" letter-spacing="0.35">Folktek Matter</text><text x="195.17" y="102.9" letter-spacing="0.35">Folktek Matter</text><text x="195.17" y="118.37" letter-spacing="0.35">Folktek Matter</text><text x="195.17" y="133.83" letter-spacing="0.35">Folktek Matter</text><text x="195.17" y="149.3" letter-spacing="0.35">Folktek Matter</text><text x="195.17" y="164.77" letter-spacing="0.35">Folktek Matter</text><text x="195.17" y="180.23" letter-spacing="0.35">Folktek Matter</text><text x="195.17" y="195.7" letter-spacing="0.25">Eurorack Loop 01</text><text x="195.17" y="211.17" letter-spacing="0.25">Eurorack Loop 01</text><text x="195.17" y="226.63" letter-spacing="0.25">Analog Rytm Loop</text><text x="195.17" y="242.1" letter-spacing="0.25">Analog Rytm Loop</text><text x="195.17" y="257.57" letter-spacing="0.25">Analog Rytm Loop</text><text x="195.17" y="273.04">Lyra-8 Loop 01</text><text x="195.17" y="288.5">Lyra-8 Loop 02</text><text x="195.17" y="303.97">Lyra-8 Loop 03</text><text x="195.17" y="319.44">Lyra-8 Loop 04</text><text x="195.17" y="334.9">Lyra-8 Loop 05</text><text x="195.17" y="350.37">Lyra-8 Loop 06</text><text x="195.17" y="365.84">Lyra-8 Loop 07</text><text x="195.17" y="381.3">Lyra-8 Loop 08</text><text x="195.17" y="396.77">Lyra-8 Loop 09</text><text x="195.17" y="412.24">Lyra-8 Loop 10</text><text x="195.17" y="427.71" letter-spacing="0.2">Electro Magnet</text><text x="195.17" y="443.17" letter-spacing="0.2">Electro Magnet</text><text x="195.17" y="458.64" letter-spacing="0.2">Electro Magnet</text><text x="195.17" y="474.11" letter-spacing="0.2">Electro Magnet</text><text x="195.17" y="489.57" letter-spacing="0.2">Electro Magnet</text><text x="195.17" y="505.04" letter-spacing="0.2">Electro Magnet</text><text x="195.17" y="520.51" letter-spacing="0.2">High Hats_NT5</text><text x="195.17" y="535.97" letter-spacing="0.2">CymbalRoll_NT5</text><text x="195.17" y="551.44" letter-spacing="0.2">KitchenSounds</text></g><g clip-path="url(#k3)"><text x="276.86" y="41.03" letter-spacing="0.35">Folktek Matter</text><text x="276.86" y="56.5" letter-spacing="0.35">Folktek Matter</text><text x="276.86" y="71.96" letter-spacing="0.35">Folktek Matter</text><text x="276.86" y="87.43" letter-spacing="0.35">Folktek Matter</text><text x="276.86" y="102.9" letter-spacing="0.35">Folktek Matter</text><text x="276.86" y="118.37" letter-spacing="0.35">Folktek Matter</text><text x="276.86" y="133.83" letter-spacing="0.35">Folktek Matter</text><text x="276.86" y="149.3" letter-spacing="0.35">Folktek Matter</text><text x="276.86" y="164.77" letter-spacing="0.35">Folktek Matter</text><text x="276.86" y="180.23" letter-spacing="0.35">Folktek Matter</text><text x="276.86" y="195.7" letter-spacing="0.25">Eurorack Loop 01</text><text x="276.86" y="211.17" letter-spacing="0.25">Eurorack Loop 01</text><text x="276.86" y="226.63" letter-spacing="0.25">Analog Rytm Loop</text><text x="276.86" y="242.1" letter-spacing="0.25">Analog Rytm Loop</text><text x="276.86" y="257.57" letter-spacing="0.25">Analog Rytm Loop</text><text x="276.86" y="273.04">Lyra-8 Loop 01</text><text x="276.86" y="288.5">Lyra-8 Loop 02</text><text x="276.86" y="303.97">Lyra-8 Loop 03</text><text x="276.86" y="319.44">Lyra-8 Loop 04</text><text x="276.86" y="334.9">Lyra-8 Loop 05</text><text x="276.86" y="350.37">Lyra-8 Loop 06</text><text x="276.86" y="365.84">Lyra-8 Loop 07</text><text x="276.86" y="381.3">Lyra-8 Loop 08</text><text x="276.86" y="396.77">Lyra-8 Loop 09</text><text x="276.86" y="412.24">Lyra-8 Loop 10</text><text x="276.86" y="427.71" letter-spacing="0.2">Electro Magnet</text><text x="276.86" y="443.17" letter-spacing="0.2">Electro Magnet</text><text x="276.86" y="458.64" letter-spacing="0.2">Electro Magnet</text><text x="276.86" y="474.11" letter-spacing="0.2">Electro Magnet</text><text x="276.86" y="489.57" letter-spacing="0.2">Electro Magnet</text><text x="276.86" y="505.04" letter-spacing="0.2">Electro Magnet</text><text x="276.86" y="520.51" letter-spacing="0.2">High Hats_NT5</text><text x="276.86" y="535.97" letter-spacing="0.2">CymbalRoll_NT5</text><text x="276.86" y="551.44" letter-spacing="0.2">KitchenSounds</text></g><g clip-path="url(#k4)"><text x="358.55" y="41.03" letter-spacing="0.35">Folktek Matter</text><text x="358.55" y="56.5" letter-spacing="0.35">Folktek Matter</text><text x="358.55" y="71.96" letter-spacing="0.35">Folktek Matter</text><text x="358.55" y="87.43" letter-spacing="0.35">Folktek Matter</text><text x="358.55" y="102.9" letter-spacing="0.35">Folktek Matter</text><text x="358.55" y="118.37" letter-spacing="0.35">Folktek Matter</text><text x="358.55" y="133.83" letter-spacing="0.35">Folktek Matter</text><text x="358.55" y="149.3" letter-spacing="0.35">Folktek Matter</text><text x="358.55" y="164.77" letter-spacing="0.35">Folktek Matter</text><text x="358.55" y="180.23" letter-spacing="0.35">Folktek Matter</text><text x="358.55" y="195.7" letter-spacing="0.25">Eurorack Loop 01</text><text x="358.55" y="211.17" letter-spacing="0.25">Eurorack Loop 01</text><text x="358.55" y="226.63" letter-spacing="0.25">Analog Rytm Loop</text><text x="358.55" y="242.1" letter-spacing="0.25">Analog Rytm Loop</text><text x="358.55" y="257.57" letter-spacing="0.25">Analog Rytm Loop</text><text x="358.55" y="273.04">Lyra-8 Loop 01</text><text x="358.55" y="288.5">Lyra-8 Loop 02</text><text x="358.55" y="303.97">Lyra-8 Loop 03</text><text x="358.55" y="319.44">Lyra-8 Loop 04</text><text x="358.55" y="334.9">Lyra-8 Loop 05</text><text x="358.55" y="350.37">Lyra-8 Loop 06</text><text x="358.55" y="365.84">Lyra-8 Loop 07</text><text x="358.55" y="381.3">Lyra-8 Loop 08</text><text x="358.55" y="396.77">Lyra-8 Loop 09</text><text x="358.55" y="412.24">Lyra-8 Loop 10</text><text x="358.55" y="427.71" letter-spacing="0.2">Electro Magnet</text><text x="358.55" y="443.17" letter-spacing="0.2">Electro Magnet</text><text x="358.55" y="458.64" letter-spacing="0.2">Electro Magnet</text><text x="358.55" y="474.11" letter-spacing="0.2">Electro Magnet</text><text x="358.55" y="489.57" letter-spacing="0.2">Electro Magnet</text><text x="358.55" y="505.04" letter-spacing="0.2">Electro Magnet</text><text x="358.55" y="520.51" letter-spacing="0.2">High Hats_NT5</text><text x="358.55" y="535.97" letter-spacing="0.2">CymbalRoll_NT5</text><text x="358.55" y="551.44" letter-spacing="0.2">KitchenSounds</text></g><g clip-path="url(#k5)"><text x="440.24" y="41.03" letter-spacing="0.35">Folktek Matter</text><text x="440.24" y="56.5" letter-spacing="0.35">Folktek Matter</text><text x="440.24" y="71.96" letter-spacing="0.35">Folktek Matter</text><text x="440.24" y="87.43" letter-spacing="0.35">Folktek Matter</text><text x="440.24" y="102.9" letter-spacing="0.35">Folktek Matter</text><text x="440.24" y="118.37" letter-spacing="0.35">Folktek Matter</text><text x="440.24" y="133.83" letter-spacing="0.35">Folktek Matter</text><text x="440.24" y="149.3" letter-spacing="0.35">Folktek Matter</text><text x="440.24" y="164.77" letter-spacing="0.35">Folktek Matter</text><text x="440.24" y="180.23" letter-spacing="0.35">Folktek Matter</text><text x="440.24" y="195.7" letter-spacing="0.25">Eurorack Loop 01</text><text x="440.24" y="211.17" letter-spacing="0.25">Eurorack Loop 01</text><text x="440.24" y="226.63" letter-spacing="0.25">Analog Rytm Loop</text><text x="440.24" y="242.1" letter-spacing="0.25">Analog Rytm Loop</text><text x="440.24" y="257.57" letter-spacing="0.25">Analog Rytm Loop</text><text x="440.24" y="273.04">Lyra-8 Loop 01</text><text x="440.24" y="288.5">Lyra-8 Loop 02</text><text x="440.24" y="303.97">Lyra-8 Loop 03</text><text x="440.24" y="319.44">Lyra-8 Loop 04</text><text x="440.24" y="334.9">Lyra-8 Loop 05</text><text x="440.24" y="350.37">Lyra-8 Loop 06</text><text x="440.24" y="365.84">Lyra-8 Loop 07</text><text x="440.24" y="381.3">Lyra-8 Loop 08</text><text x="440.24" y="396.77">Lyra-8 Loop 09</text><text x="440.24" y="412.24">Lyra-8 Loop 10</text><text x="440.24" y="427.71" letter-spacing="0.2">Electro Magnet</text><text x="440.24" y="443.17" letter-spacing="0.2">Electro Magnet</text><text x="440.24" y="458.64" letter-spacing="0.2">Electro Magnet</text><text x="440.24" y="474.11" letter-spacing="0.2">Electro Magnet</text><text x="440.24" y="489.57" letter-spacing="0.2">Electro Magnet</text><text x="440.24" y="505.04" letter-spacing="0.2">Electro Magnet</text><text x="440.24" y="520.51" letter-spacing="0.2">High Hats_NT5</text><text x="440.24" y="535.97" letter-spacing="0.2">CymbalRoll_NT5</text><text x="440.24" y="551.44" letter-spacing="0.2">KitchenSounds</text></g><g clip-path="url(#k6)"><text x="521.92" y="41.03" letter-spacing="0.35">Folktek Matter</text><text x="521.92" y="56.5" letter-spacing="0.35">Folktek Matter</text><text x="521.92" y="71.96" letter-spacing="0.35">Folktek Matter</text><text x="521.92" y="87.43" letter-spacing="0.35">Folktek Matter</text><text x="521.92" y="102.9" letter-spacing="0.35">Folktek Matter</text><text x="521.92" y="118.37" letter-spacing="0.35">Folktek Matter</text><text x="521.92" y="133.83" letter-spacing="0.35">Folktek Matter</text><text x="521.92" y="149.3" letter-spacing="0.35">Folktek Matter</text><text x="521.92" y="164.77" letter-spacing="0.35">Folktek Matter</text><text x="521.92" y="180.23" letter-spacing="0.35">Folktek Matter</text><text x="521.92" y="195.7" letter-spacing="0.25">Eurorack Loop 01</text><text x="521.92" y="211.17" letter-spacing="0.25">Eurorack Loop 01</text><text x="521.92" y="226.63" letter-spacing="0.25">Analog Rytm Loop</text><text x="521.92" y="242.1" letter-spacing="0.25">Analog Rytm Loop</text><text x="521.92" y="257.57" letter-spacing="0.25">Analog Rytm Loop</text><text x="521.92" y="273.04">Lyra-8 Loop 01</text><text x="521.92" y="288.5">Lyra-8 Loop 02</text><text x="521.92" y="303.97">Lyra-8 Loop 03</text><text x="521.92" y="319.44">Lyra-8 Loop 04</text><text x="521.92" y="334.9">Lyra-8 Loop 05</text><text x="521.92" y="350.37">Lyra-8 Loop 06</text><text x="521.92" y="365.84">Lyra-8 Loop 07</text><text x="521.92" y="381.3">Lyra-8 Loop 08</text><text x="521.92" y="396.77">Lyra-8 Loop 09</text><text x="521.92" y="412.24">Lyra-8 Loop 10</text><text x="521.92" y="427.71" letter-spacing="0.2">Electro Magnet</text><text x="521.92" y="443.17" letter-spacing="0.2">Electro Magnet</text><text x="521.92" y="458.64" letter-spacing="0.2">Electro Magnet</text><text x="521.92" y="474.11" letter-spacing="0.2">Electro Magnet</text><text x="521.92" y="489.57" letter-spacing="0.2">Electro Magnet</text><text x="521.92" y="505.04" letter-spacing="0.2">Electro Magnet</text><text x="521.92" y="520.51" letter-spacing="0.2">High Hats_NT5</text><text x="521.92" y="535.97" letter-spacing="0.2">CymbalRoll_NT5</text><text x="521.92" y="551.44" letter-spacing="0.2">KitchenSounds</text></g><g clip-path="url(#k7)"><text x="603.61" y="41.03" letter-spacing="0.35">Folktek Matter</text><text x="603.61" y="56.5" letter-spacing="0.35">Folktek Matter</text><text x="603.61" y="71.96" letter-spacing="0.35">Folktek Matter</text><text x="603.61" y="87.43" letter-spacing="0.35">Folktek Matter</text><text x="603.61" y="102.9" letter-spacing="0.35">Folktek Matter</text><text x="603.61" y="118.37" letter-spacing="0.35">Folktek Matter</text><text x="603.61" y="133.83" letter-spacing="0.35">Folktek Matter</text><text x="603.61" y="149.3" letter-spacing="0.35">Folktek Matter</text><text x="603.61" y="164.77" letter-spacing="0.35">Folktek Matter</text><text x="603.61" y="180.23" letter-spacing="0.35">Folktek Matter</text><text x="603.61" y="195.7" letter-spacing="0.25">Eurorack Loop 01</text><text x="603.61" y="211.17" letter-spacing="0.25">Eurorack Loop 01</text><text x="603.61" y="226.63" letter-spacing="0.25">Analog Rytm Loop</text><text x="603.61" y="242.1" letter-spacing="0.25">Analog Rytm Loop</text><text x="603.61" y="257.57" letter-spacing="0.25">Analog Rytm Loop</text><text x="603.61" y="273.04">Lyra-8 Loop 01</text><text x="603.61" y="288.5">Lyra-8 Loop 02</text><text x="603.61" y="303.97">Lyra-8 Loop 03</text><text x="603.61" y="319.44">Lyra-8 Loop 04</text><text x="603.61" y="334.9">Lyra-8 Loop 05</text><text x="603.61" y="350.37">Lyra-8 Loop 06</text><text x="603.61" y="365.84">Lyra-8 Loop 07</text><text x="603.61" y="381.3">Lyra-8 Loop 08</text><text x="603.61" y="396.77">Lyra-8 Loop 09</text><text x="603.61" y="412.24">Lyra-8 Loop 10</text><text x="603.61" y="427.71" letter-spacing="0.2">Electro Magnet</text><text x="603.61" y="443.17" letter-spacing="0.2">Electro Magnet</text><text x="603.61" y="458.64" letter-spacing="0.2">Electro Magnet</text><text x="603.61" y="474.11" letter-spacing="0.2">Electro Magnet</text><text x="603.61" y="489.57" letter-spacing="0.2">Electro Magnet</text><text x="603.61" y="505.04" letter-spacing="0.2">Electro Magnet</text><text x="603.61" y="520.51" letter-spacing="0.2">High Hats_NT5</text><text x="603.61" y="535.97" letter-spacing="0.2">CymbalRoll_NT5</text><text x="603.61" y="551.44" letter-spacing="0.2">KitchenSounds</text></g><g clip-path="url(#k8)"><text x="685.3" y="41.03" letter-spacing="0.35">Folktek Matter</text><text x="685.3" y="56.5" letter-spacing="0.35">Folktek Matter</text><text x="685.3" y="71.96" letter-spacing="0.35">Folktek Matter</text><text x="685.3" y="87.43" letter-spacing="0.35">Folktek Matter</text><text x="685.3" y="102.9" letter-spacing="0.35">Folktek Matter</text><text x="685.3" y="118.37" letter-spacing="0.35">Folktek Matter</text><text x="685.3" y="133.83" letter-spacing="0.35">Folktek Matter</text><text x="685.3" y="149.3" letter-spacing="0.35">Folktek Matter</text><text x="685.3" y="164.77" letter-spacing="0.35">Folktek Matter</text><text x="685.3" y="180.23" letter-spacing="0.35">Folktek Matter</text><text x="685.3" y="195.7" letter-spacing="0.25">Eurorack Loop 01</text><text x="685.3" y="211.17" letter-spacing="0.25">Eurorack Loop 01</text><text x="685.3" y="226.63" letter-spacing="0.25">Analog Rytm Loop</text><text x="685.3" y="242.1" letter-spacing="0.25">Analog Rytm Loop</text><text x="685.3" y="257.57" letter-spacing="0.25">Analog Rytm Loop</text><text x="685.3" y="273.04">Lyra-8 Loop 01</text><text x="685.3" y="288.5">Lyra-8 Loop 02</text><text x="685.3" y="303.97">Lyra-8 Loop 03</text><text x="685.3" y="319.44">Lyra-8 Loop 04</text><text x="685.3" y="334.9">Lyra-8 Loop 05</text><text x="685.3" y="350.37">Lyra-8 Loop 06</text><text x="685.3" y="365.84">Lyra-8 Loop 07</text><text x="685.3" y="381.3">Lyra-8 Loop 08</text><text x="685.3" y="396.77">Lyra-8 Loop 09</text><text x="685.3" y="412.24">Lyra-8 Loop 10</text><text x="685.3" y="427.71" letter-spacing="0.2">Electro Magnet</text><text x="685.3" y="443.17" letter-spacing="0.2">Electro Magnet</text><text x="685.3" y="458.64" letter-spacing="0.2">Electro Magnet</text><text x="685.3" y="474.11" letter-spacing="0.2">Electro Magnet</text><text x="685.3" y="489.57" letter-spacing="0.2">Electro Magnet</text><text x="685.3" y="505.04" letter-spacing="0.2">Electro Magnet</text><text x="685.3" y="520.51" letter-spacing="0.2">High Hats_NT5</text><text x="685.3" y="535.97" letter-spacing="0.2">CymbalRoll_NT5</text><text x="685.3" y="551.44" letter-spacing="0.2">KitchenSounds</text></g><g clip-path="url(#k9)"><text x="766.98" y="41.03" letter-spacing="0.35">Folktek Matter</text><text x="766.98" y="56.5" letter-spacing="0.35">Folktek Matter</text><text x="766.98" y="71.96" letter-spacing="0.35">Folktek Matter</text><text x="766.98" y="87.43" letter-spacing="0.35">Folktek Matter</text><text x="766.98" y="102.9" letter-spacing="0.35">Folktek Matter</text><text x="766.98" y="118.37" letter-spacing="0.35">Folktek Matter</text><text x="766.98" y="133.83" letter-spacing="0.35">Folktek Matter</text><text x="766.98" y="149.3" letter-spacing="0.35">Folktek Matter</text><text x="766.98" y="164.77" letter-spacing="0.35">Folktek Matter</text><text x="766.98" y="180.23" letter-spacing="0.35">Folktek Matter</text><text x="766.98" y="195.7" letter-spacing="0.25">Eurorack Loop 01</text><text x="766.98" y="211.17" letter-spacing="0.25">Eurorack Loop 01</text><text x="766.98" y="226.63" letter-spacing="0.25">Analog Rytm Loop</text><text x="766.98" y="242.1" letter-spacing="0.25">Analog Rytm Loop</text><text x="766.98" y="257.57" letter-spacing="0.25">Analog Rytm Loop</text><text x="766.98" y="273.04">Lyra-8 Loop 01</text><text x="766.98" y="288.5">Lyra-8 Loop 02</text><text x="766.98" y="303.97">Lyra-8 Loop 03</text><text x="766.98" y="319.44">Lyra-8 Loop 04</text><text x="766.98" y="334.9">Lyra-8 Loop 05</text><text x="766.98" y="350.37">Lyra-8 Loop 06</text><text x="766.98" y="365.84">Lyra-8 Loop 07</text><text x="766.98" y="381.3">Lyra-8 Loop 08</text><text x="766.98" y="396.77">Lyra-8 Loop 09</text><text x="766.98" y="412.24">Lyra-8 Loop 10</text><text x="766.98" y="427.71" letter-spacing="0.2">Electro Magnet</text><text x="766.98" y="443.17" letter-spacing="0.2">Electro Magnet</text><text x="766.98" y="458.64" letter-spacing="0.2">Electro Magnet</text><text x="766.98" y="474.11" letter-spacing="0.2">Electro Magnet</text><text x="766.98" y="489.57" letter-spacing="0.2">Electro Magnet</text><text x="766.98" y="505.04" letter-spacing="0.2">Electro Magnet</text><text x="766.98" y="520.51" letter-spacing="0.2">High Hats_NT5</text><text x="766.98" y="535.97" letter-spacing="0.2">CymbalRoll_NT5</text><text x="766.98" y="551.44" letter-spacing="0.2">KitchenSounds</text></g><g clip-path="url(#k10)"><text x="848.67" y="41.03" letter-spacing="0.35">Folktek Matter</text><text x="848.67" y="56.5" letter-spacing="0.35">Folktek Matter</text><text x="848.67" y="71.96" letter-spacing="0.35">Folktek Matter</text><text x="848.67" y="87.43" letter-spacing="0.35">Folktek Matter</text><text x="848.67" y="102.9" letter-spacing="0.35">Folktek Matter</text><text x="848.67" y="118.37" letter-spacing="0.35">Folktek Matter</text><text x="848.67" y="133.83" letter-spacing="0.35">Folktek Matter</text><text x="848.67" y="149.3" letter-spacing="0.35">Folktek Matter</text><text x="848.67" y="164.77" letter-spacing="0.35">Folktek Matter</text><text x="848.67" y="180.23" letter-spacing="0.35">Folktek Matter</text><text x="848.67" y="195.7" letter-spacing="0.25">Eurorack Loop 01</text><text x="848.67" y="211.17" letter-spacing="0.25">Eurorack Loop 01</text><text x="848.67" y="226.63" letter-spacing="0.25">Analog Rytm Loop</text><text x="848.67" y="242.1" letter-spacing="0.25">Analog Rytm Loop</text><text x="848.67" y="257.57" letter-spacing="0.25">Analog Rytm Loop</text><text x="848.67" y="273.04">Lyra-8 Loop 01</text><text x="848.67" y="288.5">Lyra-8 Loop 02</text><text x="848.67" y="303.97">Lyra-8 Loop 03</text><text x="848.67" y="319.44">Lyra-8 Loop 04</text><text x="848.67" y="334.9">Lyra-8 Loop 05</text><text x="848.67" y="350.37">Lyra-8 Loop 06</text><text x="848.67" y="365.84">Lyra-8 Loop 07</text><text x="848.67" y="381.3">Lyra-8 Loop 08</text><text x="848.67" y="396.77">Lyra-8 Loop 09</text><text x="848.67" y="412.24">Lyra-8 Loop 10</text><text x="848.67" y="427.71" letter-spacing="0.2">Electro Magnet</text><text x="848.67" y="443.17" letter-spacing="0.2">Electro Magnet</text><text x="848.67" y="458.64" letter-spacing="0.2">Electro Magnet</text><text x="848.67" y="474.11" letter-spacing="0.2">Electro Magnet</text><text x="848.67" y="489.57" letter-spacing="0.2">Electro Magnet</text><text x="848.67" y="505.04" letter-spacing="0.2">Electro Magnet</text><text x="848.67" y="520.51" letter-spacing="0.2">High Hats_NT5</text><text x="848.67" y="535.97" letter-spacing="0.2">CymbalRoll_NT5</text><text x="848.67" y="551.44" letter-spacing="0.2">KitchenSounds</text></g><g clip-path="url(#k11)"><text x="930.36" y="41.03" letter-spacing="0.35">Folktek Matter</text><text x="930.36" y="56.5" letter-spacing="0.35">Folktek Matter</text><text x="930.36" y="71.96" letter-spacing="0.35">Folktek Matter</text><text x="930.36" y="87.43" letter-spacing="0.35">Folktek Matter</text><text x="930.36" y="102.9" letter-spacing="0.35">Folktek Matter</text><text x="930.36" y="118.37" letter-spacing="0.35">Folktek Matter</text><text x="930.36" y="133.83" letter-spacing="0.35">Folktek Matter</text><text x="930.36" y="149.3" letter-spacing="0.35">Folktek Matter</text><text x="930.36" y="164.77" letter-spacing="0.35">Folktek Matter</text><text x="930.36" y="180.23" letter-spacing="0.35">Folktek Matter</text><text x="930.36" y="195.7" letter-spacing="0.25">Eurorack Loop 01</text><text x="930.36" y="211.17" letter-spacing="0.25">Eurorack Loop 01</text><text x="930.36" y="226.63" letter-spacing="0.25">Analog Rytm Loop</text><text x="930.36" y="242.1" letter-spacing="0.25">Analog Rytm Loop</text><text x="930.36" y="257.57" letter-spacing="0.25">Analog Rytm Loop</text><text x="930.36" y="273.04">Lyra-8 Loop 01</text><text x="930.36" y="288.5">Lyra-8 Loop 02</text><text x="930.36" y="303.97">Lyra-8 Loop 03</text><text x="930.36" y="319.44">Lyra-8 Loop 04</text><text x="930.36" y="334.9">Lyra-8 Loop 05</text><text x="930.36" y="350.37">Lyra-8 Loop 06</text><text x="930.36" y="365.84">Lyra-8 Loop 07</text><text x="930.36" y="381.3">Lyra-8 Loop 08</text><text x="930.36" y="396.77">Lyra-8 Loop 09</text><text x="930.36" y="412.24">Lyra-8 Loop 10</text><text x="930.36" y="427.71" letter-spacing="0.2">Electro Magnet</text><text x="930.36" y="443.17" letter-spacing="0.2">Electro Magnet</text><text x="930.36" y="458.64" letter-spacing="0.2">Electro Magnet</text><text x="930.36" y="474.11" letter-spacing="0.2">Electro Magnet</text><text x="930.36" y="489.57" letter-spacing="0.2">Electro Magnet</text><text x="930.36" y="505.04" letter-spacing="0.2">Electro Magnet</text><text x="930.36" y="520.51" letter-spacing="0.2">High Hats_NT5</text><text x="930.36" y="535.97" letter-spacing="0.2">CymbalRoll_NT5</text><text x="930.36" y="551.44" letter-spacing="0.2">KitchenSounds</text></g><g clip-path="url(#k12)"><text x="1012.04" y="41.03" letter-spacing="0.35">Folktek Matter</text><text x="1012.04" y="56.5" letter-spacing="0.35">Folktek Matter</text><text x="1012.04" y="71.96" letter-spacing="0.35">Folktek Matter</text><text x="1012.04" y="87.43" letter-spacing="0.35">Folktek Matter</text><text x="1012.04" y="102.9" letter-spacing="0.35">Folktek Matter</text><text x="1012.04" y="118.37" letter-spacing="0.35">Folktek Matter</text><text x="1012.04" y="133.83" letter-spacing="0.35">Folktek Matter</text><text x="1012.04" y="149.3" letter-spacing="0.35">Folktek Matter</text><text x="1012.04" y="164.77" letter-spacing="0.35">Folktek Matter</text><text x="1012.04" y="180.23" letter-spacing="0.35">Folktek Matter</text><text x="1012.04" y="195.7" letter-spacing="0.25">Eurorack Loop 01</text><text x="1012.04" y="211.17" letter-spacing="0.25">Eurorack Loop 01</text><text x="1012.04" y="226.63" letter-spacing="0.25">Analog Rytm Loop</text><text x="1012.04" y="242.1" letter-spacing="0.25">Analog Rytm Loop</text><text x="1012.04" y="257.57" letter-spacing="0.25">Analog Rytm Loop</text><text x="1012.04" y="273.04">Lyra-8 Loop 01</text><text x="1012.04" y="288.5">Lyra-8 Loop 02</text><text x="1012.04" y="303.97">Lyra-8 Loop 03</text><text x="1012.04" y="319.44">Lyra-8 Loop 04</text><text x="1012.04" y="334.9">Lyra-8 Loop 05</text><text x="1012.04" y="350.37">Lyra-8 Loop 06</text><text x="1012.04" y="365.84">Lyra-8 Loop 07</text><text x="1012.04" y="381.3">Lyra-8 Loop 08</text><text x="1012.04" y="396.77">Lyra-8 Loop 09</text><text x="1012.04" y="412.24">Lyra-8 Loop 10</text><text x="1012.04" y="427.71" letter-spacing="0.2">Electro Magnet</text><text x="1012.04" y="443.17" letter-spacing="0.2">Electro Magnet</text><text x="1012.04" y="458.64" letter-spacing="0.2">Electro Magnet</text><text x="1012.04" y="474.11" letter-spacing="0.2">Electro Magnet</text><text x="1012.04" y="489.57" letter-spacing="0.2">Electro Magnet</text><text x="1012.04" y="505.04" letter-spacing="0.2">Electro Magnet</text><text x="1012.04" y="520.51" letter-spacing="0.2">High Hats_NT5</text><text x="1012.04" y="535.97" letter-spacing="0.2">CymbalRoll_NT5</text><text x="1012.04" y="551.44" letter-spacing="0.2">KitchenSounds</text></g><g clip-path="url(#k13)"><text x="1093.73" y="41.03" letter-spacing="0.35">Folktek Matter</text><text x="1093.73" y="56.5" letter-spacing="0.35">Folktek Matter</text><text x="1093.73" y="71.96" letter-spacing="0.35">Folktek Matter</text><text x="1093.73" y="87.43" letter-spacing="0.35">Folktek Matter</text><text x="1093.73" y="102.9" letter-spacing="0.35">Folktek Matter</text><text x="1093.73" y="118.37" letter-spacing="0.35">Folktek Matter</text><text x="1093.73" y="133.83" letter-spacing="0.35">Folktek Matter</text><text x="1093.73" y="149.3" letter-spacing="0.35">Folktek Matter</text><text x="1093.73" y="164.77" letter-spacing="0.35">Folktek Matter</text><text x="1093.73" y="180.23" letter-spacing="0.35">Folktek Matter</text><text x="1093.73" y="195.7" letter-spacing="0.25">Eurorack Loop 01</text><text x="1093.73" y="211.17" letter-spacing="0.25">Eurorack Loop 01</text><text x="1093.73" y="226.63" letter-spacing="0.25">Analog Rytm Loop</text><text x="1093.73" y="242.1" letter-spacing="0.25">Analog Rytm Loop</text><text x="1093.73" y="257.57" letter-spacing="0.25">Analog Rytm Loop</text><text x="1093.73" y="273.04">Lyra-8 Loop 01</text><text x="1093.73" y="288.5">Lyra-8 Loop 02</text><text x="1093.73" y="303.97">Lyra-8 Loop 03</text><text x="1093.73" y="319.44">Lyra-8 Loop 04</text><text x="1093.73" y="334.9">Lyra-8 Loop 05</text><text x="1093.73" y="350.37">Lyra-8 Loop 06</text><text x="1093.73" y="365.84">Lyra-8 Loop 07</text><text x="1093.73" y="381.3">Lyra-8 Loop 08</text><text x="1093.73" y="396.77">Lyra-8 Loop 09</text><text x="1093.73" y="412.24">Lyra-8 Loop 10</text><text x="1093.73" y="427.71" letter-spacing="0.2">Electro Magnet</text><text x="1093.73" y="443.17" letter-spacing="0.2">Electro Magnet</text><text x="1093.73" y="458.64" letter-spacing="0.2">Electro Magnet</text><text x="1093.73" y="474.11" letter-spacing="0.2">Electro Magnet</text><text x="1093.73" y="489.57" letter-spacing="0.2">Electro Magnet</text><text x="1093.73" y="505.04" letter-spacing="0.2">Electro Magnet</text><text x="1093.73" y="520.51" letter-spacing="0.2">High Hats_NT5</text><text x="1093.73" y="535.97" letter-spacing="0.2">CymbalRoll_NT5</text><text x="1093.73" y="551.44" letter-spacing="0.2">KitchenSounds</text></g><g clip-path="url(#k14)"><text x="1175.42" y="41.03" letter-spacing="0.35">Folktek Matter</text><text x="1175.42" y="56.5" letter-spacing="0.35">Folktek Matter</text><text x="1175.42" y="71.96" letter-spacing="0.35">Folktek Matter</text><text x="1175.42" y="87.43" letter-spacing="0.35">Folktek Matter</text><text x="1175.42" y="102.9" letter-spacing="0.35">Folktek Matter</text><text x="1175.42" y="118.37" letter-spacing="0.35">Folktek Matter</text><text x="1175.42" y="133.83" letter-spacing="0.35">Folktek Matter</text><text x="1175.42" y="149.3" letter-spacing="0.35">Folktek Matter</text><text x="1175.42" y="164.77" letter-spacing="0.35">Folktek Matter</text><text x="1175.42" y="180.23" letter-spacing="0.35">Folktek Matter</text><text x="1175.42" y="195.7" letter-spacing="0.25">Eurorack Loop 01</text><text x="1175.42" y="211.17" letter-spacing="0.25">Eurorack Loop 01</text><text x="1175.42" y="226.63" letter-spacing="0.25">Analog Rytm Loop</text><text x="1175.42" y="242.1" letter-spacing="0.25">Analog Rytm Loop</text><text x="1175.42" y="257.57" letter-spacing="0.25">Analog Rytm Loop</text><text x="1175.42" y="273.04">Lyra-8 Loop 01</text><text x="1175.42" y="288.5">Lyra-8 Loop 02</text><text x="1175.42" y="303.97">Lyra-8 Loop 03</text><text x="1175.42" y="319.44">Lyra-8 Loop 04</text><text x="1175.42" y="334.9">Lyra-8 Loop 05</text><text x="1175.42" y="350.37">Lyra-8 Loop 06</text><text x="1175.42" y="365.84">Lyra-8 Loop 07</text><text x="1175.42" y="381.3">Lyra-8 Loop 08</text><text x="1175.42" y="396.77">Lyra-8 Loop 09</text><text x="1175.42" y="412.24">Lyra-8 Loop 10</text><text x="1175.42" y="427.71" letter-spacing="0.2">Electro Magnet</text><text x="1175.42" y="443.17" letter-spacing="0.2">Electro Magnet</text><text x="1175.42" y="458.64" letter-spacing="0.2">Electro Magnet</text><text x="1175.42" y="474.11" letter-spacing="0.2">Electro Magnet</text><text x="1175.42" y="489.57" letter-spacing="0.2">Electro Magnet</text><text x="1175.42" y="505.04" letter-spacing="0.2">Electro Magnet</text><text x="1175.42" y="520.51" letter-spacing="0.2">High Hats_NT5</text><text x="1175.42" y="535.97" letter-spacing="0.2">CymbalRoll_NT5</text><text x="1175.42" y="551.44" letter-spacing="0.2">KitchenSounds</text></g><g clip-path="url(#k15)"><text x="1257.11" y="41.03" letter-spacing="0.35">Folktek Matter</text><text x="1257.11" y="56.5" letter-spacing="0.35">Folktek Matter</text><text x="1257.11" y="71.96" letter-spacing="0.35">Folktek Matter</text><text x="1257.11" y="87.43" letter-spacing="0.35">Folktek Matter</text><text x="1257.11" y="102.9" letter-spacing="0.35">Folktek Matter</text><text x="1257.11" y="118.37" letter-spacing="0.35">Folktek Matter</text><text x="1257.11" y="133.83" letter-spacing="0.35">Folktek Matter</text><text x="1257.11" y="149.3" letter-spacing="0.35">Folktek Matter</text><text x="1257.11" y="164.77" letter-spacing="0.35">Folktek Matter</text><text x="1257.11" y="180.23" letter-spacing="0.35">Folktek Matter</text><text x="1257.11" y="195.7" letter-spacing="0.25">Eurorack Loop 01</text><text x="1257.11" y="211.17" letter-spacing="0.25">Eurorack Loop 01</text><text x="1257.11" y="226.63" letter-spacing="0.25">Analog Rytm Loop</text><text x="1257.11" y="242.1" letter-spacing="0.25">Analog Rytm Loop</text><text x="1257.11" y="257.57" letter-spacing="0.25">Analog Rytm Loop</text><text x="1257.11" y="273.04">Lyra-8 Loop 01</text><text x="1257.11" y="288.5">Lyra-8 Loop 02</text><text x="1257.11" y="303.97">Lyra-8 Loop 03</text><text x="1257.11" y="319.44">Lyra-8 Loop 04</text><text x="1257.11" y="334.9">Lyra-8 Loop 05</text><text x="1257.11" y="350.37">Lyra-8 Loop 06</text><text x="1257.11" y="365.84">Lyra-8 Loop 07</text><text x="1257.11" y="381.3">Lyra-8 Loop 08</text><text x="1257.11" y="396.77">Lyra-8 Loop 09</text><text x="1257.11" y="412.24">Lyra-8 Loop 10</text><text x="1257.11" y="427.71" letter-spacing="0.2">Electro Magnet</text><text x="1257.11" y="443.17" letter-spacing="0.2">Electro Magnet</text><text x="1257.11" y="458.64" letter-spacing="0.2">Electro Magnet</text><text x="1257.11" y="474.11" letter-spacing="0.2">Electro Magnet</text><text x="1257.11" y="489.57" letter-spacing="0.2">Electro Magnet</text><text x="1257.11" y="505.04" letter-spacing="0.2">Electro Magnet</text><text x="1257.11" y="520.51" letter-spacing="0.2">High Hats_NT5</text><text x="1257.11" y="535.97" letter-spacing="0.2">CymbalRoll_NT5</text><text x="1257.11" y="551.44" letter-spacing="0.2">KitchenSounds</text></g></g></svg>
<div class="a t clip" style="left:17.6px;top:15.4px;width:74.95px;height:12px;font-size:8.5px;line-height:12px;color:#fff;font-weight:bold;">HighLands</div>
<div class="a t clip" style="left:99.29px;top:15.4px;width:74.95px;height:12px;font-size:8.5px;line-height:12px;color:#fff;font-weight:bold;">Smear</div>
<div class="a t clip" style="left:180.97px;top:15.4px;width:74.95px;height:12px;font-size:8.5px;line-height:12px;color:#fff;font-weight:bold;">Over There</div>
<div class="a t clip" style="left:262.66px;top:15.4px;width:74.95px;height:12px;font-size:8.5px;line-height:12px;color:#fff;font-weight:bold;">Hole In The Wall</div>
<div class="a t clip" style="left:344.35px;top:15.4px;width:74.95px;height:12px;font-size:8.5px;line-height:12px;color:#fff;font-weight:bold;">Broken Tape Ma</div>
<div class="a t clip" style="left:426.04px;top:15.4px;width:74.95px;height:12px;font-size:8.5px;line-height:12px;color:#fff;font-weight:bold;">Old Radio Memo</div>
<div class="a t clip" style="left:507.72px;top:15.4px;width:74.95px;height:12px;font-size:8.5px;line-height:12px;color:#fff;font-weight:bold;">Repeat and Swing</div>
<div class="a t clip" style="left:589.41px;top:15.4px;width:74.95px;height:12px;font-size:8.5px;line-height:12px;color:#fff;font-weight:bold;">Gremlin</div>
<div class="a t clip" style="left:671.1px;top:15.4px;width:74.95px;height:12px;font-size:8.5px;line-height:12px;color:#fff;font-weight:bold;">Aquiring Signals</div>
<div class="a t clip" style="left:752.78px;top:15.4px;width:74.95px;height:12px;font-size:8.5px;line-height:12px;color:#fff;font-weight:bold;">CarvernIZER</div>
<div class="a t clip" style="left:834.47px;top:15.4px;width:74.95px;height:12px;font-size:8.5px;line-height:12px;color:#fff;font-weight:bold;">Extra Dimension</div>
<div class="a t clip" style="left:916.16px;top:15.4px;width:74.95px;height:12px;font-size:8.5px;line-height:12px;color:#fff;font-weight:bold;">Granular Tear</div>
<div class="a t clip" style="left:997.84px;top:15.4px;width:74.95px;height:12px;font-size:8.5px;line-height:12px;color:#fff;font-weight:bold;">Other Dimension</div>
<div class="a t clip" style="left:1079.53px;top:15.4px;width:74.95px;height:12px;font-size:8.5px;line-height:12px;color:#fff;font-weight:bold;">Pad TexturiZER</div>
<div class="a t clip" style="left:1161.22px;top:15.4px;width:74.95px;height:12px;font-size:8.5px;line-height:12px;color:#fff;font-weight:bold;">Perc TexturiZER</div>
<div class="a t clip" style="left:1242.9px;top:15.4px;width:74.95px;height:12px;font-size:8.5px;line-height:12px;color:#fff;font-weight:bold;">Add High SHizzle</div>
<div class="a" style="left:1321.09px;top:3.3px;width:80.11px;height:25.3px;background:#7ea0c0;"></div>
<div class="a t" style="left:1324.59px;top:15.26px;font-size:9.4px;line-height:11.28px;color:#1e2430;">17 Textural P</div>
<div class="a" style="left:1321.09px;top:30.43px;width:80.11px;height:525.88px;background:#5c5c5c;"></div>
<div class="a" style="left:1403px;top:3.3px;width:47.3px;height:553.01px;background:#474747;"></div>
<div class="a" style="left:1403px;top:401.64px;width:47.3px;height:14.67px;background:#5a5a5a;"></div>
<div class="a" style="left:1452px;top:3.3px;width:47.6px;height:553.01px;background:#474747;"></div>
<div class="a" style="left:1452px;top:401.64px;width:47.6px;height:14.67px;background:#5a5a5a;"></div>
<div class="a" style="left:1501.2px;top:3.3px;width:45.8px;height:553.01px;background:#474747;"></div>
<div class="a" style="left:1501.2px;top:401.64px;width:45.8px;height:14.67px;background:#5a5a5a;"></div>
<div class="a" style="left:1401.2px;top:3.3px;width:145.8px;height:25.3px;background:#7ea0c0;"></div>
<div class="a" style="left:1401.2px;top:7px;width:145.8px;height:1.8px;background:#262626;"></div>
<div class="a" style="left:1401.2px;top:7px;width:1.8px;height:21.6px;background:#262626;"></div>
<div class="a t" style="left:1405px;top:15.26px;font-size:9.4px;line-height:11.28px;color:#1e2430;">Instru</div>
<div class="a" style="left:1450.3px;top:12.3px;width:96.7px;height:1.9px;background:#262626;"></div>
<div class="a" style="left:1450.3px;top:12.3px;width:1.7px;height:16.3px;background:#262626;"></div>
<div class="a" style="left:1452px;top:14.2px;width:47.6px;height:14.4px;background:#cfe08e;"></div>
<div class="a" style="left:1499.6px;top:12.3px;width:1.6px;height:16.3px;background:#262626;"></div>
<div class="a" style="left:1501.2px;top:14.2px;width:45.8px;height:14.4px;background:#cfe08e;"></div>
<div class="a t" style="left:1454px;top:15.26px;font-size:9.4px;line-height:11.28px;color:#1e2430;">Operator</div>
<div class="a t" style="left:1503px;top:15.26px;font-size:9.4px;line-height:11.28px;color:#1e2430;">Operator</div>
<div class="a" style="left:11px;top:28.6px;width:1536px;height:1.3px;background:#262626;"></div>
<div class="a" style="left:14.1px;top:555.3px;width:79.95px;height:3.2px;background:#333333;"></div>
<div class="a" style="left:14.1px;top:558.5px;width:79.95px;height:14.5px;background:#404040;"></div>
<div class="a" style="left:18.5px;top:562px;width:7.2px;height:7.4px;background:#262626;"></div>
<div class="a t" style="left:31.5px;width:20px;text-align:center;top:560.8px;font-size:9px;line-height:10.8px;color:#e8e8e8;">3</div>
<div class="a t" style="left:70.5px;width:20px;text-align:center;top:560.8px;font-size:9px;line-height:10.8px;color:#e8e8e8;">28</div>
<div class="a" style="left:14.1px;top:575.2px;width:79.95px;height:16.8px;background:#404040;"></div>
<div class="a" style="left:14.1px;top:593.6px;width:79.95px;height:102px;background:#474747;"></div>
<div class="a t" style="left:23.8px;top:597.2px;width:30.1px;height:10.2px;border-radius:5.1px;background:#2a2a2a;color:#f0f0f0;font-size:9.3px;line-height:11.2px;text-align:center;">-4.20</div>
<div class="a t" style="left:29.3px;top:644.3px;width:17.2px;height:17px;border:1px solid #2a2a2a;background:#f0902c;color:#1a1a1a;font-size:10.5px;line-height:17.6px;text-align:center;">1</div>
<div class="a t" style="left:29.3px;top:667.6px;width:17.2px;height:8.8px;border:1px solid #2c2c2c;background:#383838;color:#d0d0d0;font-size:8.5px;line-height:9.6px;text-align:center;">S</div>
<div class="a" style="left:29.3px;top:682.2px;width:17.2px;height:8.7px;border:1px solid #2c2c2c;background:#383838;"></div>
<div class="a" style="left:60px;top:597.1px;width:4.2px;height:96px;background:#161616;"></div>
<div class="a" style="left:60px;top:626px;width:4.2px;height:26px;background:#4a7d34;"></div>
<div class="a" style="left:60px;top:652px;width:4.2px;height:41.1px;background:linear-gradient(#7af060,#2ee85a);"></div>
<div class="a" style="left:60px;top:625.5px;width:4.2px;height:1.1px;background:#a8ea50;"></div>
<div class="a" style="left:60px;top:606.3px;width:4.2px;height:1px;background:rgba(70,70,70,0.8);"></div>
<div class="a" style="left:65.2px;top:597.1px;width:4.2px;height:96px;background:#161616;"></div>
<div class="a" style="left:65.2px;top:633.4px;width:4.2px;height:25.6px;background:#4a7d34;"></div>
<div class="a" style="left:65.2px;top:659px;width:4.2px;height:34.1px;background:linear-gradient(#7af060,#2ee85a);"></div>
<div class="a" style="left:65.2px;top:632.9px;width:4.2px;height:1.1px;background:#a8ea50;"></div>
<div class="a" style="left:65.2px;top:606.3px;width:4.2px;height:1px;background:rgba(70,70,70,0.8);"></div>
<div class="a" style="left:71px;top:597.1px;width:3.3px;height:1px;background:#6a6a6a;"></div>
<div class="a" style="left:71px;top:606.3px;width:3.3px;height:1px;background:#8a8a8a;"></div>
<div class="a" style="left:71px;top:616.1px;width:3.3px;height:1px;background:#6a6a6a;"></div>
<div class="a" style="left:71px;top:625.3px;width:3.3px;height:1px;background:#8a8a8a;"></div>
<div class="a" style="left:71px;top:635.1px;width:3.3px;height:1px;background:#6a6a6a;"></div>
<div class="a" style="left:71px;top:644.1px;width:3.3px;height:1px;background:#8a8a8a;"></div>
<div class="a" style="left:71px;top:654.2px;width:3.3px;height:1px;background:#6a6a6a;"></div>
<div class="a" style="left:71px;top:662.3px;width:3.3px;height:1px;background:#8a8a8a;"></div>
<div class="a" style="left:71px;top:670.1px;width:3.3px;height:1px;background:#6a6a6a;"></div>
<div class="a" style="left:71px;top:676.3px;width:3.3px;height:1px;background:#8a8a8a;"></div>
<div class="a" style="left:71px;top:682.5px;width:3.3px;height:1px;background:#6a6a6a;"></div>
<div class="a" style="left:71px;top:687.1px;width:3.3px;height:1px;background:#8a8a8a;"></div>
<div class="a" style="left:71px;top:691.3px;width:3.3px;height:1px;background:#6a6a6a;"></div>
<div class="a t" style="left:69.4px;width:20px;text-align:right;top:602.08px;font-size:9.2px;line-height:11.04px;color:#e6e6e6;">0</div>
<div class="a t" style="left:69.4px;width:20px;text-align:right;top:621.28px;font-size:9.2px;line-height:11.04px;color:#e6e6e6;">12</div>
<div class="a t" style="left:69.4px;width:20px;text-align:right;top:639.98px;font-size:9.2px;line-height:11.04px;color:#e6e6e6;">24</div>
<div class="a t" style="left:69.4px;width:20px;text-align:right;top:657.98px;font-size:9.2px;line-height:11.04px;color:#e6e6e6;">36</div>
<div class="a t" style="left:69.4px;width:20px;text-align:right;top:672.28px;font-size:9.2px;line-height:11.04px;color:#e6e6e6;">48</div>
<div class="a t" style="left:69.4px;width:20px;text-align:right;top:683.08px;font-size:9.2px;line-height:11.04px;color:#e6e6e6;">60</div>
<div class="a" style="left:95.79px;top:555.3px;width:79.95px;height:3.2px;background:#333333;"></div>
<div class="a" style="left:95.79px;top:558.5px;width:79.95px;height:14.5px;background:#404040;"></div>
<div class="a" style="left:100.19px;top:562px;width:7.2px;height:7.4px;background:#262626;"></div>
<div class="a t" style="left:113.19px;width:20px;text-align:center;top:560.8px;font-size:9px;line-height:10.8px;color:#e8e8e8;">3</div>
<div class="a t" style="left:152.19px;width:20px;text-align:center;top:560.8px;font-size:9px;line-height:10.8px;color:#e8e8e8;">28</div>
<div class="a" style="left:95.79px;top:575.2px;width:79.95px;height:16.8px;background:#404040;"></div>
<div class="a" style="left:95.79px;top:593.6px;width:79.95px;height:102px;background:#474747;"></div>
<div class="a t" style="left:105.49px;top:597.2px;width:30.1px;height:10.2px;border-radius:5.1px;background:#2a2a2a;color:#f0f0f0;font-size:9.3px;line-height:11.2px;text-align:center;">-2.78</div>
<div class="a t" style="left:110.99px;top:644.3px;width:17.2px;height:17px;border:1px solid #2a2a2a;background:#f0902c;color:#1a1a1a;font-size:10.5px;line-height:17.6px;text-align:center;">2</div>
<div class="a t" style="left:110.99px;top:667.6px;width:17.2px;height:8.8px;border:1px solid #2c2c2c;background:#383838;color:#d0d0d0;font-size:8.5px;line-height:9.6px;text-align:center;">S</div>
<div class="a" style="left:110.99px;top:682.2px;width:17.2px;height:8.7px;border:1px solid #2c2c2c;background:#383838;"></div>
<div class="a" style="left:141px;top:597.1px;width:4.2px;height:96px;background:#161616;"></div>
<div class="a" style="left:141px;top:616px;width:4.2px;height:20.5px;background:#4a7d34;"></div>
<div class="a" style="left:141px;top:636.5px;width:4.2px;height:56.6px;background:linear-gradient(#7af060,#2ee85a);"></div>
<div class="a" style="left:141px;top:615.5px;width:4.2px;height:1.1px;background:#a8ea50;"></div>
<div class="a" style="left:141px;top:606.3px;width:4.2px;height:1px;background:rgba(70,70,70,0.8);"></div>
<div class="a" style="left:146.2px;top:597.1px;width:4.2px;height:96px;background:#161616;"></div>
<div class="a" style="left:146.2px;top:621.4px;width:4.2px;height:18.9px;background:#4a7d34;"></div>
<div class="a" style="left:146.2px;top:640.3px;width:4.2px;height:52.8px;background:linear-gradient(#7af060,#2ee85a);"></div>
<div class="a" style="left:146.2px;top:620.9px;width:4.2px;height:1.1px;background:#a8ea50;"></div>
<div class="a" style="left:146.2px;top:606.3px;width:4.2px;height:1px;background:rgba(70,70,70,0.8);"></div>
<div class="a" style="left:152.69px;top:597.1px;width:3.3px;height:1px;background:#6a6a6a;"></div>
<div class="a" style="left:152.69px;top:606.3px;width:3.3px;height:1px;background:#8a8a8a;"></div>
<div class="a" style="left:152.69px;top:616.1px;width:3.3px;height:1px;background:#6a6a6a;"></div>
<div class="a" style="left:152.69px;top:625.3px;width:3.3px;height:1px;background:#8a8a8a;"></div>
<div class="a" style="left:152.69px;top:635.1px;width:3.3px;height:1px;background:#6a6a6a;"></div>
<div class="a" style="left:152.69px;top:644.1px;width:3.3px;height:1px;background:#8a8a8a;"></div>
<div class="a" style="left:152.69px;top:654.2px;width:3.3px;height:1px;background:#6a6a6a;"></div>
<div class="a" style="left:152.69px;top:662.3px;width:3.3px;height:1px;background:#8a8a8a;"></div>
<div class="a" style="left:152.69px;top:670.1px;width:3.3px;height:1px;background:#6a6a6a;"></div>
<div class="a" style="left:152.69px;top:676.3px;width:3.3px;height:1px;background:#8a8a8a;"></div>
<div class="a" style="left:152.69px;top:682.5px;width:3.3px;height:1px;background:#6a6a6a;"></div>
<div class="a" style="left:152.69px;top:687.1px;width:3.3px;height:1px;background:#8a8a8a;"></div>
<div class="a" style="left:152.69px;top:691.3px;width:3.3px;height:1px;background:#6a6a6a;"></div>
<div class="a t" style="left:151.09px;width:20px;text-align:right;top:602.08px;font-size:9.2px;line-height:11.04px;color:#e6e6e6;">0</div>
<div class="a t" style="left:151.09px;width:20px;text-align:right;top:621.28px;font-size:9.2px;line-height:11.04px;color:#e6e6e6;">12</div>
<div class="a t" style="left:151.09px;width:20px;text-align:right;top:639.98px;font-size:9.2px;line-height:11.04px;color:#e6e6e6;">24</div>
<div class="a t" style="left:151.09px;width:20px;text-align:right;top:657.98px;font-size:9.2px;line-height:11.04px;color:#e6e6e6;">36</div>
<div class="a t" style="left:151.09px;width:20px;text-align:right;top:672.28px;font-size:9.2px;line-height:11.04px;color:#e6e6e6;">48</div>
<div class="a t" style="left:151.09px;width:20px;text-align:right;top:683.08px;font-size:9.2px;line-height:11.04px;color:#e6e6e6;">60</div>
<div class="a" style="left:177.47px;top:555.3px;width:79.95px;height:3.2px;background:#333333;"></div>
<div class="a" style="left:177.47px;top:558.5px;width:79.95px;height:14.5px;background:#404040;"></div>
<div class="a" style="left:181.87px;top:562px;width:7.2px;height:7.4px;background:#262626;"></div>
<div class="a t" style="left:194.87px;width:20px;text-align:center;top:560.8px;font-size:9px;line-height:10.8px;color:#e8e8e8;">3</div>
<div class="a t" style="left:233.87px;width:20px;text-align:center;top:560.8px;font-size:9px;line-height:10.8px;color:#e8e8e8;">28</div>
<div class="a" style="left:177.47px;top:575.2px;width:79.95px;height:16.8px;background:#404040;"></div>
<div class="a" style="left:177.47px;top:593.6px;width:79.95px;height:102px;background:#474747;"></div>
<div class="a t" style="left:187.17px;top:597.2px;width:30.1px;height:10.2px;border-radius:5.1px;background:#2a2a2a;color:#f0f0f0;font-size:9.3px;line-height:11.2px;text-align:center;">-4.97</div>
<div class="a t" style="left:192.67px;top:644.3px;width:17.2px;height:17px;border:1px solid #2a2a2a;background:#f0902c;color:#1a1a1a;font-size:10.5px;line-height:17.6px;text-align:center;">3</div>
<div class="a t" style="left:192.67px;top:667.6px;width:17.2px;height:8.8px;border:1px solid #2c2c2c;background:#383838;color:#d0d0d0;font-size:8.5px;line-height:9.6px;text-align:center;">S</div>
<div class="a" style="left:192.67px;top:682.2px;width:17.2px;height:8.7px;border:1px solid #2c2c2c;background:#383838;"></div>
<div class="a" style="left:223px;top:597.1px;width:4.2px;height:96px;background:#161616;"></div>
<div class="a" style="left:223px;top:663px;width:4.2px;height:11.8px;background:#4a7d34;"></div>
<div class="a" style="left:223px;top:674.8px;width:4.2px;height:18.3px;background:linear-gradient(#7af060,#2ee85a);"></div>
<div class="a" style="left:223px;top:640.7px;width:4.2px;height:1.1px;background:#a8ea50;"></div>
<div class="a" style="left:223px;top:606.3px;width:4.2px;height:1px;background:rgba(70,70,70,0.8);"></div>
<div class="a" style="left:228.2px;top:597.1px;width:4.2px;height:96px;background:#161616;"></div>
<div class="a" style="left:228.2px;top:648px;width:4.2px;height:17px;background:#4a7d34;"></div>
<div class="a" style="left:228.2px;top:665px;width:4.2px;height:28.1px;background:linear-gradient(#7af060,#2ee85a);"></div>
<div class="a" style="left:228.2px;top:620.9px;width:4.2px;height:1.1px;background:#a8ea50;"></div>
<div class="a" style="left:228.2px;top:606.3px;width:4.2px;height:1px;background:rgba(70,70,70,0.8);"></div>
<div class="a" style="left:234.37px;top:597.1px;width:3.3px;height:1px;background:#6a6a6a;"></div>
<div class="a" style="left:234.37px;top:606.3px;width:3.3px;height:1px;background:#8a8a8a;"></div>
<div class="a" style="left:234.37px;top:616.1px;width:3.3px;height:1px;background:#6a6a6a;"></div>
<div class="a" style="left:234.37px;top:625.3px;width:3.3px;height:1px;background:#8a8a8a;"></div>
<div class="a" style="left:234.37px;top:635.1px;width:3.3px;height:1px;background:#6a6a6a;"></div>
<div class="a" style="left:234.37px;top:644.1px;width:3.3px;height:1px;background:#8a8a8a;"></div>
<div class="a" style="left:234.37px;top:654.2px;width:3.3px;height:1px;background:#6a6a6a;"></div>
<div class="a" style="left:234.37px;top:662.3px;width:3.3px;height:1px;background:#8a8a8a;"></div>
<div class="a" style="left:234.37px;top:670.1px;width:3.3px;height:1px;background:#6a6a6a;"></div>
<div class="a" style="left:234.37px;top:676.3px;width:3.3px;height:1px;background:#8a8a8a;"></div>
<div class="a" style="left:234.37px;top:682.5px;width:3.3px;height:1px;background:#6a6a6a;"></div>
<div class="a" style="left:234.37px;top:687.1px;width:3.3px;height:1px;background:#8a8a8a;"></div>
<div class="a" style="left:234.37px;top:691.3px;width:3.3px;height:1px;background:#6a6a6a;"></div>
<div class="a t" style="left:232.77px;width:20px;text-align:right;top:602.08px;font-size:9.2px;line-height:11.04px;color:#e6e6e6;">0</div>
<div class="a t" style="left:232.77px;width:20px;text-align:right;top:621.28px;font-size:9.2px;line-height:11.04px;color:#e6e6e6;">12</div>
<div class="a t" style="left:232.77px;width:20px;text-align:right;top:639.98px;font-size:9.2px;line-height:11.04px;color:#e6e6e6;">24</div>
<div class="a t" style="left:232.77px;width:20px;text-align:right;top:657.98px;font-size:9.2px;line-height:11.04px;color:#e6e6e6;">36</div>
<div class="a t" style="left:232.77px;width:20px;text-align:right;top:672.28px;font-size:9.2px;line-height:11.04px;color:#e6e6e6;">48</div>
<div class="a t" style="left:232.77px;width:20px;text-align:right;top:683.08px;font-size:9.2px;line-height:11.04px;color:#e6e6e6;">60</div>
<div class="a" style="left:259.16px;top:555.3px;width:79.95px;height:3.2px;background:#333333;"></div>
<div class="a" style="left:259.16px;top:558.5px;width:79.95px;height:14.5px;background:#404040;"></div>
<div class="a" style="left:263.56px;top:562px;width:7.2px;height:7.4px;background:#262626;"></div>
<div class="a t" style="left:276.56px;width:20px;text-align:center;top:560.8px;font-size:9px;line-height:10.8px;color:#e8e8e8;">3</div>
<div class="a t" style="left:315.56px;width:20px;text-align:center;top:560.8px;font-size:9px;line-height:10.8px;color:#e8e8e8;">28</div>
<div class="a" style="left:259.16px;top:575.2px;width:79.95px;height:16.8px;background:#404040;"></div>
<div class="a" style="left:259.16px;top:593.6px;width:79.95px;height:102px;background:#474747;"></div>
<div class="a t" style="left:268.86px;top:597.2px;width:30.1px;height:10.2px;border-radius:5.1px;background:#2a2a2a;color:#f0f0f0;font-size:9.3px;line-height:11.2px;text-align:center;">-2.89</div>
<div class="a t" style="left:274.36px;top:644.3px;width:17.2px;height:17px;border:1px solid #2a2a2a;background:#f0902c;color:#1a1a1a;font-size:10.5px;line-height:17.6px;text-align:center;">4</div>
<div class="a t" style="left:274.36px;top:667.6px;width:17.2px;height:8.8px;border:1px solid #2c2c2c;background:#383838;color:#d0d0d0;font-size:8.5px;line-height:9.6px;text-align:center;">S</div>
<div class="a" style="left:274.36px;top:682.2px;width:17.2px;height:8.7px;border:1px solid #2c2c2c;background:#383838;"></div>
<div class="a" style="left:305px;top:597.1px;width:4.2px;height:96px;background:#161616;"></div>
<div class="a" style="left:305px;top:636.5px;width:4.2px;height:8.5px;background:#4a7d34;"></div>
<div class="a" style="left:305px;top:645px;width:4.2px;height:48.1px;background:linear-gradient(#7af060,#2ee85a);"></div>
<div class="a" style="left:305px;top:614.5px;width:4.2px;height:1.1px;background:#a8ea50;"></div>
<div class="a" style="left:305px;top:606.3px;width:4.2px;height:1px;background:rgba(70,70,70,0.8);"></div>
<div class="a" style="left:310.2px;top:597.1px;width:4.2px;height:96px;background:#161616;"></div>
<div class="a" style="left:310.2px;top:636px;width:4.2px;height:11.5px;background:#4a7d34;"></div>
<div class="a" style="left:310.2px;top:647.5px;width:4.2px;height:45.6px;background:linear-gradient(#7af060,#2ee85a);"></div>
<div class="a" style="left:310.2px;top:617.1px;width:4.2px;height:1.1px;background:#a8ea50;"></div>
<div class="a" style="left:310.2px;top:606.3px;width:4.2px;height:1px;background:rgba(70,70,70,0.8);"></div>
<div class="a" style="left:316.06px;top:597.1px;width:3.3px;height:1px;background:#6a6a6a;"></div>
<div class="a" style="left:316.06px;top:606.3px;width:3.3px;height:1px;background:#8a8a8a;"></div>
<div class="a" style="left:316.06px;top:616.1px;width:3.3px;height:1px;background:#6a6a6a;"></div>
<div class="a" style="left:316.06px;top:625.3px;width:3.3px;height:1px;background:#8a8a8a;"></div>
<div class="a" style="left:316.06px;top:635.1px;width:3.3px;height:1px;background:#6a6a6a;"></div>
<div class="a" style="left:316.06px;top:644.1px;width:3.3px;height:1px;background:#8a8a8a;"></div>
<div class="a" style="left:316.06px;top:654.2px;width:3.3px;height:1px;background:#6a6a6a;"></div>
<div class="a" style="left:316.06px;top:662.3px;width:3.3px;height:1px;background:#8a8a8a;"></div>
<div class="a" style="left:316.06px;top:670.1px;width:3.3px;height:1px;background:#6a6a6a;"></div>
<div class="a" style="left:316.06px;top:676.3px;width:3.3px;height:1px;background:#8a8a8a;"></div>
<div class="a" style="left:316.06px;top:682.5px;width:3.3px;height:1px;background:#6a6a6a;"></div>
<div class="a" style="left:316.06px;top:687.1px;width:3.3px;height:1px;background:#8a8a8a;"></div>
<div class="a" style="left:316.06px;top:691.3px;width:3.3px;height:1px;background:#6a6a6a;"></div>
<div class="a t" style="left:314.46px;width:20px;text-align:right;top:602.08px;font-size:9.2px;line-height:11.04px;color:#e6e6e6;">0</div>
<div class="a t" style="left:314.46px;width:20px;text-align:right;top:621.28px;font-size:9.2px;line-height:11.04px;color:#e6e6e6;">12</div>
<div class="a t" style="left:314.46px;width:20px;text-align:right;top:639.98px;font-size:9.2px;line-height:11.04px;color:#e6e6e6;">24</div>
<div class="a t" style="left:314.46px;width:20px;text-align:right;top:657.98px;font-size:9.2px;line-height:11.04px;color:#e6e6e6;">36</div>
<div class="a t" style="left:314.46px;width:20px;text-align:right;top:672.28px;font-size:9.2px;line-height:11.04px;color:#e6e6e6;">48</div>
<div class="a t" style="left:314.46px;width:20px;text-align:right;top:683.08px;font-size:9.2px;line-height:11.04px;color:#e6e6e6;">60</div>
<div class="a" style="left:340.85px;top:555.3px;width:79.95px;height:3.2px;background:#333333;"></div>
<div class="a" style="left:340.85px;top:558.5px;width:79.95px;height:14.5px;background:#404040;"></div>
<div class="a" style="left:345.25px;top:562px;width:7.2px;height:7.4px;background:#262626;"></div>
<div class="a t" style="left:358.25px;width:20px;text-align:center;top:560.8px;font-size:9px;line-height:10.8px;color:#e8e8e8;">3</div>
<div class="a t" style="left:397.25px;width:20px;text-align:center;top:560.8px;font-size:9px;line-height:10.8px;color:#e8e8e8;">28</div>
<div class="a" style="left:340.85px;top:575.2px;width:79.95px;height:16.8px;background:#404040;"></div>
<div class="a" style="left:340.85px;top:593.6px;width:79.95px;height:102px;background:#474747;"></div>
<div class="a t" style="left:350.55px;top:597.2px;width:30.1px;height:10.2px;border-radius:5.1px;background:#2a2a2a;color:#f0f0f0;font-size:9.3px;line-height:11.2px;text-align:center;">-5.66</div>
<div class="a t" style="left:356.05px;top:644.3px;width:17.2px;height:17px;border:1px solid #2a2a2a;background:#f0902c;color:#1a1a1a;font-size:10.5px;line-height:17.6px;text-align:center;">5</div>
<div class="a t" style="left:356.05px;top:667.6px;width:17.2px;height:8.8px;border:1px solid #2c2c2c;background:#383838;color:#d0d0d0;font-size:8.5px;line-height:9.6px;text-align:center;">S</div>
<div class="a" style="left:356.05px;top:682.2px;width:17.2px;height:8.7px;border:1px solid #2c2c2c;background:#383838;"></div>
<div class="a" style="left:387px;top:597.1px;width:4.2px;height:96px;background:#161616;"></div>
<div class="a" style="left:387px;top:641px;width:4.2px;height:11.8px;background:#4a7d34;"></div>
<div class="a" style="left:387px;top:652.8px;width:4.2px;height:40.3px;background:linear-gradient(#7af060,#2ee85a);"></div>
<div class="a" style="left:387px;top:620px;width:4.2px;height:1.1px;background:#a8ea50;"></div>
<div class="a" style="left:387px;top:606.3px;width:4.2px;height:1px;background:rgba(70,70,70,0.8);"></div>
<div class="a" style="left:392.2px;top:597.1px;width:4.2px;height:96px;background:#161616;"></div>
<div class="a" style="left:392.2px;top:641.8px;width:4.2px;height:17.9px;background:#4a7d34;"></div>
<div class="a" style="left:392.2px;top:659.7px;width:4.2px;height:33.4px;background:linear-gradient(#7af060,#2ee85a);"></div>
<div class="a" style="left:392.2px;top:641.3px;width:4.2px;height:1.1px;background:#a8ea50;"></div>
<div class="a" style="left:392.2px;top:606.3px;width:4.2px;height:1px;background:rgba(70,70,70,0.8);"></div>
<div class="a" style="left:397.75px;top:597.1px;width:3.3px;height:1px;background:#6a6a6a;"></div>
<div class="a" style="left:397.75px;top:606.3px;width:3.3px;height:1px;background:#8a8a8a;"></div>
<div class="a" style="left:397.75px;top:616.1px;width:3.3px;height:1px;background:#6a6a6a;"></div>
<div class="a" style="left:397.75px;top:625.3px;width:3.3px;height:1px;background:#8a8a8a;"></div>
<div class="a" style="left:397.75px;top:635.1px;width:3.3px;height:1px;background:#6a6a6a;"></div>
<div class="a" style="left:397.75px;top:644.1px;width:3.3px;height:1px;background:#8a8a8a;"></div>
<div class="a" style="left:397.75px;top:654.2px;width:3.3px;height:1px;background:#6a6a6a;"></div>
<div class="a" style="left:397.75px;top:662.3px;width:3.3px;height:1px;background:#8a8a8a;"></div>
<div class="a" style="left:397.75px;top:670.1px;width:3.3px;height:1px;background:#6a6a6a;"></div>
<div class="a" style="left:397.75px;top:676.3px;width:3.3px;height:1px;background:#8a8a8a;"></div>
<div class="a" style="left:397.75px;top:682.5px;width:3.3px;height:1px;background:#6a6a6a;"></div>
<div class="a" style="left:397.75px;top:687.1px;width:3.3px;height:1px;background:#8a8a8a;"></div>
<div class="a" style="left:397.75px;top:691.3px;width:3.3px;height:1px;background:#6a6a6a;"></div>
<div class="a t" style="left:396.15px;width:20px;text-align:right;top:602.08px;font-size:9.2px;line-height:11.04px;color:#e6e6e6;">0</div>
<div class="a t" style="left:396.15px;width:20px;text-align:right;top:621.28px;font-size:9.2px;line-height:11.04px;color:#e6e6e6;">12</div>
<div class="a t" style="left:396.15px;width:20px;text-align:right;top:639.98px;font-size:9.2px;line-height:11.04px;color:#e6e6e6;">24</div>
<div class="a t" style="left:396.15px;width:20px;text-align:right;top:657.98px;font-size:9.2px;line-height:11.04px;color:#e6e6e6;">36</div>
<div class="a t" style="left:396.15px;width:20px;text-align:right;top:672.28px;font-size:9.2px;line-height:11.04px;color:#e6e6e6;">48</div>
<div class="a t" style="left:396.15px;width:20px;text-align:right;top:683.08px;font-size:9.2px;line-height:11.04px;color:#e6e6e6;">60</div>
<div class="a" style="left:422.54px;top:555.3px;width:79.95px;height:3.2px;background:#333333;"></div>
<div class="a" style="left:422.54px;top:558.5px;width:79.95px;height:14.5px;background:#404040;"></div>
<div class="a" style="left:426.94px;top:562px;width:7.2px;height:7.4px;background:#262626;"></div>
<div class="a t" style="left:439.94px;width:20px;text-align:center;top:560.8px;font-size:9px;line-height:10.8px;color:#e8e8e8;">3</div>
<div class="a t" style="left:478.94px;width:20px;text-align:center;top:560.8px;font-size:9px;line-height:10.8px;color:#e8e8e8;">28</div>
<div class="a" style="left:422.54px;top:575.2px;width:79.95px;height:16.8px;background:#404040;"></div>
<div class="a" style="left:422.54px;top:593.6px;width:79.95px;height:102px;background:#474747;"></div>
<div class="a t" style="left:432.24px;top:597.2px;width:30.1px;height:10.2px;border-radius:5.1px;background:#2a2a2a;color:#f0f0f0;font-size:9.3px;line-height:11.2px;text-align:center;">-11.9</div>
<div class="a t" style="left:437.74px;top:644.3px;width:17.2px;height:17px;border:1px solid #2a2a2a;background:#f0902c;color:#1a1a1a;font-size:10.5px;line-height:17.6px;text-align:center;">6</div>
<div class="a t" style="left:437.74px;top:667.6px;width:17.2px;height:8.8px;border:1px solid #2c2c2c;background:#383838;color:#d0d0d0;font-size:8.5px;line-height:9.6px;text-align:center;">S</div>
<div class="a" style="left:437.74px;top:682.2px;width:17.2px;height:8.7px;border:1px solid #2c2c2c;background:#383838;"></div>
<div class="a" style="left:468px;top:597.1px;width:4.2px;height:96px;background:#161616;"></div>
<div class="a" style="left:468px;top:645.3px;width:4.2px;height:11.3px;background:#4a7d34;"></div>
<div class="a" style="left:468px;top:656.6px;width:4.2px;height:36.5px;background:linear-gradient(#7af060,#2ee85a);"></div>
<div class="a" style="left:468px;top:626.5px;width:4.2px;height:1.1px;background:#a8ea50;"></div>
<div class="a" style="left:468px;top:606.3px;width:4.2px;height:1px;background:rgba(70,70,70,0.8);"></div>
<div class="a" style="left:473.2px;top:597.1px;width:4.2px;height:96px;background:#161616;"></div>
<div class="a" style="left:473.2px;top:648.4px;width:4.2px;height:8.6px;background:#4a7d34;"></div>
<div class="a" style="left:473.2px;top:657px;width:4.2px;height:36.1px;background:linear-gradient(#7af060,#2ee85a);"></div>
<div class="a" style="left:473.2px;top:628.8px;width:4.2px;height:1.1px;background:#a8ea50;"></div>
<div class="a" style="left:473.2px;top:606.3px;width:4.2px;height:1px;background:rgba(70,70,70,0.8);"></div>
<div class="a" style="left:479.44px;top:597.1px;width:3.3px;height:1px;background:#6a6a6a;"></div>
<div class="a" style="left:479.44px;top:606.3px;width:3.3px;height:1px;background:#8a8a8a;"></div>
<div class="a" style="left:479.44px;top:616.1px;width:3.3px;height:1px;background:#6a6a6a;"></div>
<div class="a" style="left:479.44px;top:625.3px;width:3.3px;height:1px;background:#8a8a8a;"></div>
<div class="a" style="left:479.44px;top:635.1px;width:3.3px;height:1px;background:#6a6a6a;"></div>
<div class="a" style="left:479.44px;top:644.1px;width:3.3px;height:1px;background:#8a8a8a;"></div>
<div class="a" style="left:479.44px;top:654.2px;width:3.3px;height:1px;background:#6a6a6a;"></div>
<div class="a" style="left:479.44px;top:662.3px;width:3.3px;height:1px;background:#8a8a8a;"></div>
<div class="a" style="left:479.44px;top:670.1px;width:3.3px;height:1px;background:#6a6a6a;"></div>
<div class="a" style="left:479.44px;top:676.3px;width:3.3px;height:1px;background:#8a8a8a;"></div>
<div class="a" style="left:479.44px;top:682.5px;width:3.3px;height:1px;background:#6a6a6a;"></div>
<div class="a" style="left:479.44px;top:687.1px;width:3.3px;height:1px;background:#8a8a8a;"></div>
<div class="a" style="left:479.44px;top:691.3px;width:3.3px;height:1px;background:#6a6a6a;"></div>
<div class="a t" style="left:477.84px;width:20px;text-align:right;top:602.08px;font-size:9.2px;line-height:11.04px;color:#e6e6e6;">0</div>
<div class="a t" style="left:477.84px;width:20px;text-align:right;top:621.28px;font-size:9.2px;line-height:11.04px;color:#e6e6e6;">12</div>
<div class="a t" style="left:477.84px;width:20px;text-align:right;top:639.98px;font-size:9.2px;line-height:11.04px;color:#e6e6e6;">24</div>
<div class="a t" style="left:477.84px;width:20px;text-align:right;top:657.98px;font-size:9.2px;line-height:11.04px;color:#e6e6e6;">36</div>
<div class="a t" style="left:477.84px;width:20px;text-align:right;top:672.28px;font-size:9.2px;line-height:11.04px;color:#e6e6e6;">48</div>
<div class="a t" style="left:477.84px;width:20px;text-align:right;top:683.08px;font-size:9.2px;line-height:11.04px;color:#e6e6e6;">60</div>
<div class="a" style="left:504.22px;top:555.3px;width:79.95px;height:3.2px;background:#333333;"></div>
<div class="a" style="left:504.22px;top:558.5px;width:79.95px;height:14.5px;background:#404040;"></div>
<div class="a" style="left:508.62px;top:562px;width:7.2px;height:7.4px;background:#262626;"></div>
<div class="a t" style="left:521.62px;width:20px;text-align:center;top:560.8px;font-size:9px;line-height:10.8px;color:#e8e8e8;">3</div>
<div class="a t" style="left:560.62px;width:20px;text-align:center;top:560.8px;font-size:9px;line-height:10.8px;color:#e8e8e8;">28</div>
<div class="a" style="left:504.22px;top:575.2px;width:79.95px;height:16.8px;background:#404040;"></div>
<div class="a" style="left:504.22px;top:593.6px;width:79.95px;height:102px;background:#474747;"></div>
<div class="a t" style="left:513.92px;top:597.2px;width:30.1px;height:10.2px;border-radius:5.1px;background:#2a2a2a;color:#f0f0f0;font-size:9.3px;line-height:11.2px;text-align:center;">-2.00</div>
<div class="a t" style="left:519.42px;top:644.3px;width:17.2px;height:17px;border:1px solid #2a2a2a;background:#f0902c;color:#1a1a1a;font-size:10.5px;line-height:17.6px;text-align:center;">7</div>
<div class="a t" style="left:519.42px;top:667.6px;width:17.2px;height:8.8px;border:1px solid #2c2c2c;background:#383838;color:#d0d0d0;font-size:8.5px;line-height:9.6px;text-align:center;">S</div>
<div class="a" style="left:519.42px;top:682.2px;width:17.2px;height:8.7px;border:1px solid #2c2c2c;background:#383838;"></div>
<div class="a" style="left:550px;top:597.1px;width:4.2px;height:96px;background:#161616;"></div>
<div class="a" style="left:550px;top:640px;width:4.2px;height:9.8px;background:#4a7d34;"></div>
<div class="a" style="left:550px;top:649.8px;width:4.2px;height:43.3px;background:linear-gradient(#7af060,#2ee85a);"></div>
<div class="a" style="left:550px;top:631.5px;width:4.2px;height:1.1px;background:#a8ea50;"></div>
<div class="a" style="left:550px;top:606.3px;width:4.2px;height:1px;background:rgba(70,70,70,0.8);"></div>
<div class="a" style="left:555.2px;top:597.1px;width:4.2px;height:96px;background:#161616;"></div>
<div class="a" style="left:555.2px;top:636px;width:4.2px;height:7.3px;background:#4a7d34;"></div>
<div class="a" style="left:555.2px;top:643.3px;width:4.2px;height:49.8px;background:linear-gradient(#7af060,#2ee85a);"></div>
<div class="a" style="left:555.2px;top:626.5px;width:4.2px;height:1.1px;background:#a8ea50;"></div>
<div class="a" style="left:555.2px;top:606.3px;width:4.2px;height:1px;background:rgba(70,70,70,0.8);"></div>
<div class="a" style="left:561.12px;top:597.1px;width:3.3px;height:1px;background:#6a6a6a;"></div>
<div class="a" style="left:561.12px;top:606.3px;width:3.3px;height:1px;background:#8a8a8a;"></div>
<div class="a" style="left:561.12px;top:616.1px;width:3.3px;height:1px;background:#6a6a6a;"></div>
<div class="a" style="left:561.12px;top:625.3px;width:3.3px;height:1px;background:#8a8a8a;"></div>
<div class="a" style="left:561.12px;top:635.1px;width:3.3px;height:1px;background:#6a6a6a;"></div>
<div class="a" style="left:561.12px;top:644.1px;width:3.3px;height:1px;background:#8a8a8a;"></div>
<div class="a" style="left:561.12px;top:654.2px;width:3.3px;height:1px;background:#6a6a6a;"></div>
<div class="a" style="left:561.12px;top:662.3px;width:3.3px;height:1px;background:#8a8a8a;"></div>
<div class="a" style="left:561.12px;top:670.1px;width:3.3px;height:1px;background:#6a6a6a;"></div>
<div class="a" style="left:561.12px;top:676.3px;width:3.3px;height:1px;background:#8a8a8a;"></div>
<div class="a" style="left:561.12px;top:682.5px;width:3.3px;height:1px;background:#6a6a6a;"></div>
<div class="a" style="left:561.12px;top:687.1px;width:3.3px;height:1px;background:#8a8a8a;"></div>
<div class="a" style="left:561.12px;top:691.3px;width:3.3px;height:1px;background:#6a6a6a;"></div>
<div class="a t" style="left:559.52px;width:20px;text-align:right;top:602.08px;font-size:9.2px;line-height:11.04px;color:#e6e6e6;">0</div>
<div class="a t" style="left:559.52px;width:20px;text-align:right;top:621.28px;font-size:9.2px;line-height:11.04px;color:#e6e6e6;">12</div>
<div class="a t" style="left:559.52px;width:20px;text-align:right;top:639.98px;font-size:9.2px;line-height:11.04px;color:#e6e6e6;">24</div>
<div class="a t" style="left:559.52px;width:20px;text-align:right;top:657.98px;font-size:9.2px;line-height:11.04px;color:#e6e6e6;">36</div>
<div class="a t" style="left:559.52px;width:20px;text-align:right;top:672.28px;font-size:9.2px;line-height:11.04px;color:#e6e6e6;">48</div>
<div class="a t" style="left:559.52px;width:20px;text-align:right;top:683.08px;font-size:9.2px;line-height:11.04px;color:#e6e6e6;">60</div>
<div class="a" style="left:585.91px;top:555.3px;width:79.95px;height:3.2px;background:#333333;"></div>
<div class="a" style="left:585.91px;top:558.5px;width:79.95px;height:14.5px;background:#404040;"></div>
<div class="a" style="left:590.31px;top:562px;width:7.2px;height:7.4px;background:#262626;"></div>
<div class="a t" style="left:603.31px;width:20px;text-align:center;top:560.8px;font-size:9px;line-height:10.8px;color:#e8e8e8;">3</div>
<div class="a t" style="left:642.31px;width:20px;text-align:center;top:560.8px;font-size:9px;line-height:10.8px;color:#e8e8e8;">28</div>
<div class="a" style="left:585.91px;top:575.2px;width:79.95px;height:16.8px;background:#404040;"></div>
<div class="a" style="left:585.91px;top:593.6px;width:79.95px;height:102px;background:#474747;"></div>
<div class="a t" style="left:595.61px;top:597.2px;width:30.1px;height:10.2px;border-radius:5.1px;background:#2a2a2a;color:#f0f0f0;font-size:9.3px;line-height:11.2px;text-align:center;">-1.85</div>
<div class="a t" style="left:601.11px;top:644.3px;width:17.2px;height:17px;border:1px solid #2a2a2a;background:#f0902c;color:#1a1a1a;font-size:10.5px;line-height:17.6px;text-align:center;">8</div>
<div class="a t" style="left:601.11px;top:667.6px;width:17.2px;height:8.8px;border:1px solid #2c2c2c;background:#383838;color:#d0d0d0;font-size:8.5px;line-height:9.6px;text-align:center;">S</div>
<div class="a" style="left:601.11px;top:682.2px;width:17.2px;height:8.7px;border:1px solid #2c2c2c;background:#383838;"></div>
<div class="a" style="left:632px;top:597.1px;width:4.2px;height:96px;background:#161616;"></div>
<div class="a" style="left:632px;top:644.3px;width:4.2px;height:10.3px;background:#4a7d34;"></div>
<div class="a" style="left:632px;top:654.6px;width:4.2px;height:38.5px;background:linear-gradient(#7af060,#2ee85a);"></div>
<div class="a" style="left:632px;top:617.9px;width:4.2px;height:1.1px;background:#a8ea50;"></div>
<div class="a" style="left:632px;top:606.3px;width:4.2px;height:1px;background:rgba(70,70,70,0.8);"></div>
<div class="a" style="left:637.2px;top:597.1px;width:4.2px;height:96px;background:#161616;"></div>
<div class="a" style="left:637.2px;top:645px;width:4.2px;height:10.6px;background:#4a7d34;"></div>
<div class="a" style="left:637.2px;top:655.6px;width:4.2px;height:37.5px;background:linear-gradient(#7af060,#2ee85a);"></div>
<div class="a" style="left:637.2px;top:617px;width:4.2px;height:1.1px;background:#a8ea50;"></div>
<div class="a" style="left:637.2px;top:606.3px;width:4.2px;height:1px;background:rgba(70,70,70,0.8);"></div>
<div class="a" style="left:642.81px;top:597.1px;width:3.3px;height:1px;background:#6a6a6a;"></div>
<div class="a" style="left:642.81px;top:606.3px;width:3.3px;height:1px;background:#8a8a8a;"></div>
<div class="a" style="left:642.81px;top:616.1px;width:3.3px;height:1px;background:#6a6a6a;"></div>
<div class="a" style="left:642.81px;top:625.3px;width:3.3px;height:1px;background:#8a8a8a;"></div>
<div class="a" style="left:642.81px;top:635.1px;width:3.3px;height:1px;background:#6a6a6a;"></div>
<div class="a" style="left:642.81px;top:644.1px;width:3.3px;height:1px;background:#8a8a8a;"></div>
<div class="a" style="left:642.81px;top:654.2px;width:3.3px;height:1px;background:#6a6a6a;"></div>
<div class="a" style="left:642.81px;top:662.3px;width:3.3px;height:1px;background:#8a8a8a;"></div>
<div class="a" style="left:642.81px;top:670.1px;width:3.3px;height:1px;background:#6a6a6a;"></div>
<div class="a" style="left:642.81px;top:676.3px;width:3.3px;height:1px;background:#8a8a8a;"></div>
<div class="a" style="left:642.81px;top:682.5px;width:3.3px;height:1px;background:#6a6a6a;"></div>
<div class="a" style="left:642.81px;top:687.1px;width:3.3px;height:1px;background:#8a8a8a;"></div>
<div class="a" style="left:642.81px;top:691.3px;width:3.3px;height:1px;background:#6a6a6a;"></div>
<div class="a t" style="left:641.21px;width:20px;text-align:right;top:602.08px;font-size:9.2px;line-height:11.04px;color:#e6e6e6;">0</div>
<div class="a t" style="left:641.21px;width:20px;text-align:right;top:621.28px;font-size:9.2px;line-height:11.04px;color:#e6e6e6;">12</div>
<div class="a t" style="left:641.21px;width:20px;text-align:right;top:639.98px;font-size:9.2px;line-height:11.04px;color:#e6e6e6;">24</div>
<div class="a t" style="left:641.21px;width:20px;text-align:right;top:657.98px;font-size:9.2px;line-height:11.04px;color:#e6e6e6;">36</div>
<div class="a t" style="left:641.21px;width:20px;text-align:right;top:672.28px;font-size:9.2px;line-height:11.04px;color:#e6e6e6;">48</div>
<div class="a t" style="left:641.21px;width:20px;text-align:right;top:683.08px;font-size:9.2px;line-height:11.04px;color:#e6e6e6;">60</div>
<div class="a" style="left:667.6px;top:555.3px;width:79.95px;height:3.2px;background:#333333;"></div>
<div class="a" style="left:667.6px;top:558.5px;width:79.95px;height:14.5px;background:#404040;"></div>
<div class="a" style="left:672px;top:562px;width:7.2px;height:7.4px;background:#262626;"></div>
<div class="a t" style="left:685px;width:20px;text-align:center;top:560.8px;font-size:9px;line-height:10.8px;color:#e8e8e8;">3</div>
<div class="a t" style="left:724px;width:20px;text-align:center;top:560.8px;font-size:9px;line-height:10.8px;color:#e8e8e8;">28</div>
<div class="a" style="left:667.6px;top:575.2px;width:79.95px;height:16.8px;background:#404040;"></div>
<div class="a" style="left:667.6px;top:593.6px;width:79.95px;height:102px;background:#474747;"></div>
<div class="a t" style="left:677.3px;top:597.2px;width:30.1px;height:10.2px;border-radius:5.1px;background:#2a2a2a;color:#f0f0f0;font-size:9.3px;line-height:11.2px;text-align:center;">-9.74</div>
<div class="a t" style="left:682.8px;top:644.3px;width:17.2px;height:17px;border:1px solid #2a2a2a;background:#f0902c;color:#1a1a1a;font-size:10.5px;line-height:17.6px;text-align:center;">9</div>
<div class="a t" style="left:682.8px;top:667.6px;width:17.2px;height:8.8px;border:1px solid #2c2c2c;background:#383838;color:#d0d0d0;font-size:8.5px;line-height:9.6px;text-align:center;">S</div>
<div class="a" style="left:682.8px;top:682.2px;width:17.2px;height:8.7px;border:1px solid #2c2c2c;background:#383838;"></div>
<div class="a" style="left:713px;top:597.1px;width:4.2px;height:96px;background:#161616;"></div>
<div class="a" style="left:713px;top:633.6px;width:4.2px;height:16.2px;background:#4a7d34;"></div>
<div class="a" style="left:713px;top:649.8px;width:4.2px;height:43.3px;background:linear-gradient(#7af060,#2ee85a);"></div>
<div class="a" style="left:713px;top:630.9px;width:4.2px;height:1.1px;background:#a8ea50;"></div>
<div class="a" style="left:713px;top:606.3px;width:4.2px;height:1px;background:rgba(70,70,70,0.8);"></div>
<div class="a" style="left:718.2px;top:597.1px;width:4.2px;height:96px;background:#161616;"></div>
<div class="a" style="left:718.2px;top:640px;width:4.2px;height:12.4px;background:#4a7d34;"></div>
<div class="a" style="left:718.2px;top:652.4px;width:4.2px;height:40.7px;background:linear-gradient(#7af060,#2ee85a);"></div>
<div class="a" style="left:718.2px;top:625.5px;width:4.2px;height:1.1px;background:#a8ea50;"></div>
<div class="a" style="left:718.2px;top:606.3px;width:4.2px;height:1px;background:rgba(70,70,70,0.8);"></div>
<div class="a" style="left:724.5px;top:597.1px;width:3.3px;height:1px;background:#6a6a6a;"></div>
<div class="a" style="left:724.5px;top:606.3px;width:3.3px;height:1px;background:#8a8a8a;"></div>
<div class="a" style="left:724.5px;top:616.1px;width:3.3px;height:1px;background:#6a6a6a;"></div>
<div class="a" style="left:724.5px;top:625.3px;width:3.3px;height:1px;background:#8a8a8a;"></div>
<div class="a" style="left:724.5px;top:635.1px;width:3.3px;height:1px;background:#6a6a6a;"></div>
<div class="a" style="left:724.5px;top:644.1px;width:3.3px;height:1px;background:#8a8a8a;"></div>
<div class="a" style="left:724.5px;top:654.2px;width:3.3px;height:1px;background:#6a6a6a;"></div>
<div class="a" style="left:724.5px;top:662.3px;width:3.3px;height:1px;background:#8a8a8a;"></div>
<div class="a" style="left:724.5px;top:670.1px;width:3.3px;height:1px;background:#6a6a6a;"></div>
<div class="a" style="left:724.5px;top:676.3px;width:3.3px;height:1px;background:#8a8a8a;"></div>
<div class="a" style="left:724.5px;top:682.5px;width:3.3px;height:1px;background:#6a6a6a;"></div>
<div class="a" style="left:724.5px;top:687.1px;width:3.3px;height:1px;background:#8a8a8a;"></div>
<div class="a" style="left:724.5px;top:691.3px;width:3.3px;height:1px;background:#6a6a6a;"></div>
<div class="a t" style="left:722.9px;width:20px;text-align:right;top:602.08px;font-size:9.2px;line-height:11.04px;color:#e6e6e6;">0</div>
<div class="a t" style="left:722.9px;width:20px;text-align:right;top:621.28px;font-size:9.2px;line-height:11.04px;color:#e6e6e6;">12</div>
<div class="a t" style="left:722.9px;width:20px;text-align:right;top:639.98px;font-size:9.2px;line-height:11.04px;color:#e6e6e6;">24</div>
<div class="a t" style="left:722.9px;width:20px;text-align:right;top:657.98px;font-size:9.2px;line-height:11.04px;color:#e6e6e6;">36</div>
<div class="a t" style="left:722.9px;width:20px;text-align:right;top:672.28px;font-size:9.2px;line-height:11.04px;color:#e6e6e6;">48</div>
<div class="a t" style="left:722.9px;width:20px;text-align:right;top:683.08px;font-size:9.2px;line-height:11.04px;color:#e6e6e6;">60</div>
<div class="a" style="left:749.28px;top:555.3px;width:79.95px;height:3.2px;background:#333333;"></div>
<div class="a" style="left:749.28px;top:558.5px;width:79.95px;height:14.5px;background:#404040;"></div>
<div class="a" style="left:753.68px;top:562px;width:7.2px;height:7.4px;background:#262626;"></div>
<div class="a t" style="left:766.68px;width:20px;text-align:center;top:560.8px;font-size:9px;line-height:10.8px;color:#e8e8e8;">3</div>
<div class="a t" style="left:805.68px;width:20px;text-align:center;top:560.8px;font-size:9px;line-height:10.8px;color:#e8e8e8;">28</div>
<div class="a" style="left:749.28px;top:575.2px;width:79.95px;height:16.8px;background:#404040;"></div>
<div class="a" style="left:749.28px;top:593.6px;width:79.95px;height:102px;background:#474747;"></div>
<div class="a t" style="left:758.98px;top:597.2px;width:30.1px;height:10.2px;border-radius:5.1px;background:#2a2a2a;color:#f0f0f0;font-size:9.3px;line-height:11.2px;text-align:center;">-7.50</div>
<div class="a t" style="left:764.48px;top:644.3px;width:17.2px;height:17px;border:1px solid #2a2a2a;background:#f0902c;color:#1a1a1a;font-size:10.5px;line-height:17.6px;text-align:center;">10</div>
<div class="a t" style="left:764.48px;top:667.6px;width:17.2px;height:8.8px;border:1px solid #2c2c2c;background:#383838;color:#d0d0d0;font-size:8.5px;line-height:9.6px;text-align:center;">S</div>
<div class="a" style="left:764.48px;top:682.2px;width:17.2px;height:8.7px;border:1px solid #2c2c2c;background:#383838;"></div>
<div class="a" style="left:795px;top:597.1px;width:4.2px;height:96px;background:#161616;"></div>
<div class="a" style="left:795px;top:640px;width:4.2px;height:19.5px;background:#4a7d34;"></div>
<div class="a" style="left:795px;top:659.5px;width:4.2px;height:33.6px;background:linear-gradient(#7af060,#2ee85a);"></div>
<div class="a" style="left:795px;top:639.5px;width:4.2px;height:1.1px;background:#a8ea50;"></div>
<div class="a" style="left:795px;top:606.3px;width:4.2px;height:1px;background:rgba(70,70,70,0.8);"></div>
<div class="a" style="left:800.2px;top:597.1px;width:4.2px;height:96px;background:#161616;"></div>
<div class="a" style="left:800.2px;top:669px;width:4.2px;height:6.6px;background:#4a7d34;"></div>
<div class="a" style="left:800.2px;top:675.6px;width:4.2px;height:17.5px;background:linear-gradient(#7af060,#2ee85a);"></div>
<div class="a" style="left:800.2px;top:653.5px;width:4.2px;height:1.1px;background:#a8ea50;"></div>
<div class="a" style="left:800.2px;top:606.3px;width:4.2px;height:1px;background:rgba(70,70,70,0.8);"></div>
<div class="a" style="left:806.18px;top:597.1px;width:3.3px;height:1px;background:#6a6a6a;"></div>
<div class="a" style="left:806.18px;top:606.3px;width:3.3px;height:1px;background:#8a8a8a;"></div>
<div class="a" style="left:806.18px;top:616.1px;width:3.3px;height:1px;background:#6a6a6a;"></div>
<div class="a" style="left:806.18px;top:625.3px;width:3.3px;height:1px;background:#8a8a8a;"></div>
<div class="a" style="left:806.18px;top:635.1px;width:3.3px;height:1px;background:#6a6a6a;"></div>
<div class="a" style="left:806.18px;top:644.1px;width:3.3px;height:1px;background:#8a8a8a;"></div>
<div class="a" style="left:806.18px;top:654.2px;width:3.3px;height:1px;background:#6a6a6a;"></div>
<div class="a" style="left:806.18px;top:662.3px;width:3.3px;height:1px;background:#8a8a8a;"></div>
<div class="a" style="left:806.18px;top:670.1px;width:3.3px;height:1px;background:#6a6a6a;"></div>
<div class="a" style="left:806.18px;top:676.3px;width:3.3px;height:1px;background:#8a8a8a;"></div>
<div class="a" style="left:806.18px;top:682.5px;width:3.3px;height:1px;background:#6a6a6a;"></div>
<div class="a" style="left:806.18px;top:687.1px;width:3.3px;height:1px;background:#8a8a8a;"></div>
<div class="a" style="left:806.18px;top:691.3px;width:3.3px;height:1px;background:#6a6a6a;"></div>
<div class="a t" style="left:804.58px;width:20px;text-align:right;top:602.08px;font-size:9.2px;line-height:11.04px;color:#e6e6e6;">0</div>
<div class="a t" style="left:804.58px;width:20px;text-align:right;top:621.28px;font-size:9.2px;line-height:11.04px;color:#e6e6e6;">12</div>
<div class="a t" style="left:804.58px;width:20px;text-align:right;top:639.98px;font-size:9.2px;line-height:11.04px;color:#e6e6e6;">24</div>
<div class="a t" style="left:804.58px;width:20px;text-align:right;top:657.98px;font-size:9.2px;line-height:11.04px;color:#e6e6e6;">36</div>
<div class="a t" style="left:804.58px;width:20px;text-align:right;top:672.28px;font-size:9.2px;line-height:11.04px;color:#e6e6e6;">48</div>
<div class="a t" style="left:804.58px;width:20px;text-align:right;top:683.08px;font-size:9.2px;line-height:11.04px;color:#e6e6e6;">60</div>
<div class="a" style="left:830.97px;top:555.3px;width:79.95px;height:3.2px;background:#333333;"></div>
<div class="a" style="left:830.97px;top:558.5px;width:79.95px;height:14.5px;background:#404040;"></div>
<div class="a" style="left:835.37px;top:562px;width:7.2px;height:7.4px;background:#262626;"></div>
<div class="a t" style="left:848.37px;width:20px;text-align:center;top:560.8px;font-size:9px;line-height:10.8px;color:#e8e8e8;">3</div>
<div class="a t" style="left:887.37px;width:20px;text-align:center;top:560.8px;font-size:9px;line-height:10.8px;color:#e8e8e8;">28</div>
<div class="a" style="left:830.97px;top:575.2px;width:79.95px;height:16.8px;background:#404040;"></div>
<div class="a" style="left:830.97px;top:593.6px;width:79.95px;height:102px;background:#474747;"></div>
<div class="a t" style="left:840.67px;top:597.2px;width:30.1px;height:10.2px;border-radius:5.1px;background:#2a2a2a;color:#f0f0f0;font-size:9.3px;line-height:11.2px;text-align:center;">-2.51</div>
<div class="a t" style="left:846.17px;top:644.3px;width:17.2px;height:17px;border:1px solid #2a2a2a;background:#f0902c;color:#1a1a1a;font-size:10.5px;line-height:17.6px;text-align:center;">11</div>
<div class="a t" style="left:846.17px;top:667.6px;width:17.2px;height:8.8px;border:1px solid #2c2c2c;background:#383838;color:#d0d0d0;font-size:8.5px;line-height:9.6px;text-align:center;">S</div>
<div class="a" style="left:846.17px;top:682.2px;width:17.2px;height:8.7px;border:1px solid #2c2c2c;background:#383838;"></div>
<div class="a" style="left:877px;top:597.1px;width:4.2px;height:96px;background:#161616;"></div>
<div class="a" style="left:877px;top:655.3px;width:4.2px;height:10px;background:#4a7d34;"></div>
<div class="a" style="left:877px;top:665.3px;width:4.2px;height:27.8px;background:linear-gradient(#7af060,#2ee85a);"></div>
<div class="a" style="left:877px;top:654.8px;width:4.2px;height:1.1px;background:#a8ea50;"></div>
<div class="a" style="left:877px;top:606.3px;width:4.2px;height:1px;background:rgba(70,70,70,0.8);"></div>
<div class="a" style="left:882.2px;top:597.1px;width:4.2px;height:96px;background:#161616;"></div>
<div class="a" style="left:882.2px;top:662.7px;width:4.2px;height:4.9px;background:#4a7d34;"></div>
<div class="a" style="left:882.2px;top:667.6px;width:4.2px;height:25.5px;background:linear-gradient(#7af060,#2ee85a);"></div>
<div class="a" style="left:882.2px;top:653.5px;width:4.2px;height:1.1px;background:#a8ea50;"></div>
<div class="a" style="left:882.2px;top:606.3px;width:4.2px;height:1px;background:rgba(70,70,70,0.8);"></div>
<div class="a" style="left:887.87px;top:597.1px;width:3.3px;height:1px;background:#6a6a6a;"></div>
<div class="a" style="left:887.87px;top:606.3px;width:3.3px;height:1px;background:#8a8a8a;"></div>
<div class="a" style="left:887.87px;top:616.1px;width:3.3px;height:1px;background:#6a6a6a;"></div>
<div class="a" style="left:887.87px;top:625.3px;width:3.3px;height:1px;background:#8a8a8a;"></div>
<div class="a" style="left:887.87px;top:635.1px;width:3.3px;height:1px;background:#6a6a6a;"></div>
<div class="a" style="left:887.87px;top:644.1px;width:3.3px;height:1px;background:#8a8a8a;"></div>
<div class="a" style="left:887.87px;top:654.2px;width:3.3px;height:1px;background:#6a6a6a;"></div>
<div class="a" style="left:887.87px;top:662.3px;width:3.3px;height:1px;background:#8a8a8a;"></div>
<div class="a" style="left:887.87px;top:670.1px;width:3.3px;height:1px;background:#6a6a6a;"></div>
<div class="a" style="left:887.87px;top:676.3px;width:3.3px;height:1px;background:#8a8a8a;"></div>
<div class="a" style="left:887.87px;top:682.5px;width:3.3px;height:1px;background:#6a6a6a;"></div>
<div class="a" style="left:887.87px;top:687.1px;width:3.3px;height:1px;background:#8a8a8a;"></div>
<div class="a" style="left:887.87px;top:691.3px;width:3.3px;height:1px;background:#6a6a6a;"></div>
<div class="a t" style="left:886.27px;width:20px;text-align:right;top:602.08px;font-size:9.2px;line-height:11.04px;color:#e6e6e6;">0</div>
<div class="a t" style="left:886.27px;width:20px;text-align:right;top:621.28px;font-size:9.2px;line-height:11.04px;color:#e6e6e6;">12</div>
<div class="a t" style="left:886.27px;width:20px;text-align:right;top:639.98px;font-size:9.2px;line-height:11.04px;color:#e6e6e6;">24</div>
<div class="a t" style="left:886.27px;width:20px;text-align:right;top:657.98px;font-size:9.2px;line-height:11.04px;color:#e6e6e6;">36</div>
<div class="a t" style="left:886.27px;width:20px;text-align:right;top:672.28px;font-size:9.2px;line-height:11.04px;color:#e6e6e6;">48</div>
<div class="a t" style="left:886.27px;width:20px;text-align:right;top:683.08px;font-size:9.2px;line-height:11.04px;color:#e6e6e6;">60</div>
<div class="a" style="left:912.66px;top:555.3px;width:79.95px;height:3.2px;background:#333333;"></div>
<div class="a" style="left:912.66px;top:558.5px;width:79.95px;height:14.5px;background:#404040;"></div>
<div class="a" style="left:917.06px;top:562px;width:7.2px;height:7.4px;background:#262626;"></div>
<div class="a t" style="left:930.06px;width:20px;text-align:center;top:560.8px;font-size:9px;line-height:10.8px;color:#e8e8e8;">3</div>
<div class="a t" style="left:969.06px;width:20px;text-align:center;top:560.8px;font-size:9px;line-height:10.8px;color:#e8e8e8;">28</div>
<div class="a" style="left:912.66px;top:575.2px;width:79.95px;height:16.8px;background:#404040;"></div>
<div class="a" style="left:912.66px;top:593.6px;width:79.95px;height:102px;background:#474747;"></div>
<div class="a t" style="left:922.36px;top:597.2px;width:30.1px;height:10.2px;border-radius:5.1px;background:#2a2a2a;color:#f0f0f0;font-size:9.3px;line-height:11.2px;text-align:center;">-17.4</div>
<div class="a t" style="left:927.86px;top:644.3px;width:17.2px;height:17px;border:1px solid #2a2a2a;background:#f0902c;color:#1a1a1a;font-size:10.5px;line-height:17.6px;text-align:center;">12</div>
<div class="a t" style="left:927.86px;top:667.6px;width:17.2px;height:8.8px;border:1px solid #2c2c2c;background:#383838;color:#d0d0d0;font-size:8.5px;line-height:9.6px;text-align:center;">S</div>
<div class="a" style="left:927.86px;top:682.2px;width:17.2px;height:8.7px;border:1px solid #2c2c2c;background:#383838;"></div>
<div class="a" style="left:958px;top:597.1px;width:4.2px;height:96px;background:#161616;"></div>
<div class="a" style="left:958px;top:673px;width:4.2px;height:4.3px;background:#4a7d34;"></div>
<div class="a" style="left:958px;top:677.3px;width:4.2px;height:15.8px;background:linear-gradient(#7af060,#2ee85a);"></div>
<div class="a" style="left:958px;top:659.5px;width:4.2px;height:1.1px;background:#3a9a3a;"></div>
<div class="a" style="left:958px;top:606.3px;width:4.2px;height:1px;background:rgba(70,70,70,0.8);"></div>
<div class="a" style="left:963.2px;top:597.1px;width:4.2px;height:96px;background:#161616;"></div>
<div class="a" style="left:963.2px;top:668.5px;width:4.2px;height:6.2px;background:#4a7d34;"></div>
<div class="a" style="left:963.2px;top:674.7px;width:4.2px;height:18.4px;background:linear-gradient(#7af060,#2ee85a);"></div>
<div class="a" style="left:963.2px;top:648.3px;width:4.2px;height:1.1px;background:#a8ea50;"></div>
<div class="a" style="left:963.2px;top:606.3px;width:4.2px;height:1px;background:rgba(70,70,70,0.8);"></div>
<div class="a" style="left:969.56px;top:597.1px;width:3.3px;height:1px;background:#6a6a6a;"></div>
<div class="a" style="left:969.56px;top:606.3px;width:3.3px;height:1px;background:#8a8a8a;"></div>
<div class="a" style="left:969.56px;top:616.1px;width:3.3px;height:1px;background:#6a6a6a;"></div>
<div class="a" style="left:969.56px;top:625.3px;width:3.3px;height:1px;background:#8a8a8a;"></div>
<div class="a" style="left:969.56px;top:635.1px;width:3.3px;height:1px;background:#6a6a6a;"></div>
<div class="a" style="left:969.56px;top:644.1px;width:3.3px;height:1px;background:#8a8a8a;"></div>
<div class="a" style="left:969.56px;top:654.2px;width:3.3px;height:1px;background:#6a6a6a;"></div>
<div class="a" style="left:969.56px;top:662.3px;width:3.3px;height:1px;background:#8a8a8a;"></div>
<div class="a" style="left:969.56px;top:670.1px;width:3.3px;height:1px;background:#6a6a6a;"></div>
<div class="a" style="left:969.56px;top:676.3px;width:3.3px;height:1px;background:#8a8a8a;"></div>
<div class="a" style="left:969.56px;top:682.5px;width:3.3px;height:1px;background:#6a6a6a;"></div>
<div class="a" style="left:969.56px;top:687.1px;width:3.3px;height:1px;background:#8a8a8a;"></div>
<div class="a" style="left:969.56px;top:691.3px;width:3.3px;height:1px;background:#6a6a6a;"></div>
<div class="a t" style="left:967.96px;width:20px;text-align:right;top:602.08px;font-size:9.2px;line-height:11.04px;color:#e6e6e6;">0</div>
<div class="a t" style="left:967.96px;width:20px;text-align:right;top:621.28px;font-size:9.2px;line-height:11.04px;color:#e6e6e6;">12</div>
<div class="a t" style="left:967.96px;width:20px;text-align:right;top:639.98px;font-size:9.2px;line-height:11.04px;color:#e6e6e6;">24</div>
<div class="a t" style="left:967.96px;width:20px;text-align:right;top:657.98px;font-size:9.2px;line-height:11.04px;color:#e6e6e6;">36</div>
<div class="a t" style="left:967.96px;width:20px;text-align:right;top:672.28px;font-size:9.2px;line-height:11.04px;color:#e6e6e6;">48</div>
<div class="a t" style="left:967.96px;width:20px;text-align:right;top:683.08px;font-size:9.2px;line-height:11.04px;color:#e6e6e6;">60</div>
<div class="a" style="left:994.34px;top:555.3px;width:79.95px;height:3.2px;background:#333333;"></div>
<div class="a" style="left:994.34px;top:558.5px;width:79.95px;height:14.5px;background:#404040;"></div>
<div class="a" style="left:998.74px;top:562px;width:7.2px;height:7.4px;background:#262626;"></div>
<div class="a t" style="left:1011.74px;width:20px;text-align:center;top:560.8px;font-size:9px;line-height:10.8px;color:#e8e8e8;">3</div>
<div class="a t" style="left:1050.74px;width:20px;text-align:center;top:560.8px;font-size:9px;line-height:10.8px;color:#e8e8e8;">28</div>
<div class="a" style="left:994.34px;top:575.2px;width:79.95px;height:16.8px;background:#404040;"></div>
<div class="a" style="left:994.34px;top:593.6px;width:79.95px;height:102px;background:#474747;"></div>
<div class="a t" style="left:1004.04px;top:597.2px;width:30.1px;height:10.2px;border-radius:5.1px;background:#2a2a2a;color:#f0f0f0;font-size:9.3px;line-height:11.2px;text-align:center;">-7.59</div>
<div class="a t" style="left:1009.54px;top:644.3px;width:17.2px;height:17px;border:1px solid #2a2a2a;background:#f0902c;color:#1a1a1a;font-size:10.5px;line-height:17.6px;text-align:center;">13</div>
<div class="a t" style="left:1009.54px;top:667.6px;width:17.2px;height:8.8px;border:1px solid #2c2c2c;background:#383838;color:#d0d0d0;font-size:8.5px;line-height:9.6px;text-align:center;">S</div>
<div class="a" style="left:1009.54px;top:682.2px;width:17.2px;height:8.7px;border:1px solid #2c2c2c;background:#383838;"></div>
<div class="a" style="left:1040px;top:597.1px;width:4.2px;height:96px;background:#161616;"></div>
<div class="a" style="left:1040px;top:656.5px;width:4.2px;height:9.5px;background:#4a7d34;"></div>
<div class="a" style="left:1040px;top:666px;width:4.2px;height:27.1px;background:linear-gradient(#7af060,#2ee85a);"></div>
<div class="a" style="left:1040px;top:642.5px;width:4.2px;height:1.1px;background:#a8ea50;"></div>
<div class="a" style="left:1040px;top:606.3px;width:4.2px;height:1px;background:rgba(70,70,70,0.8);"></div>
<div class="a" style="left:1045.2px;top:597.1px;width:4.2px;height:96px;background:#161616;"></div>
<div class="a" style="left:1045.2px;top:657px;width:4.2px;height:9.6px;background:#4a7d34;"></div>
<div class="a" style="left:1045.2px;top:666.6px;width:4.2px;height:26.5px;background:linear-gradient(#7af060,#2ee85a);"></div>
<div class="a" style="left:1045.2px;top:643.3px;width:4.2px;height:1.1px;background:#a8ea50;"></div>
<div class="a" style="left:1045.2px;top:606.3px;width:4.2px;height:1px;background:rgba(70,70,70,0.8);"></div>
<div class="a" style="left:1051.24px;top:597.1px;width:3.3px;height:1px;background:#6a6a6a;"></div>
<div class="a" style="left:1051.24px;top:606.3px;width:3.3px;height:1px;background:#8a8a8a;"></div>
<div class="a" style="left:1051.24px;top:616.1px;width:3.3px;height:1px;background:#6a6a6a;"></div>
<div class="a" style="left:1051.24px;top:625.3px;width:3.3px;height:1px;background:#8a8a8a;"></div>
<div class="a" style="left:1051.24px;top:635.1px;width:3.3px;height:1px;background:#6a6a6a;"></div>
<div class="a" style="left:1051.24px;top:644.1px;width:3.3px;height:1px;background:#8a8a8a;"></div>
<div class="a" style="left:1051.24px;top:654.2px;width:3.3px;height:1px;background:#6a6a6a;"></div>
<div class="a" style="left:1051.24px;top:662.3px;width:3.3px;height:1px;background:#8a8a8a;"></div>
<div class="a" style="left:1051.24px;top:670.1px;width:3.3px;height:1px;background:#6a6a6a;"></div>
<div class="a" style="left:1051.24px;top:676.3px;width:3.3px;height:1px;background:#8a8a8a;"></div>
<div class="a" style="left:1051.24px;top:682.5px;width:3.3px;height:1px;background:#6a6a6a;"></div>
<div class="a" style="left:1051.24px;top:687.1px;width:3.3px;height:1px;background:#8a8a8a;"></div>
<div class="a" style="left:1051.24px;top:691.3px;width:3.3px;height:1px;background:#6a6a6a;"></div>
<div class="a t" style="left:1049.64px;width:20px;text-align:right;top:602.08px;font-size:9.2px;line-height:11.04px;color:#e6e6e6;">0</div>
<div class="a t" style="left:1049.64px;width:20px;text-align:right;top:621.28px;font-size:9.2px;line-height:11.04px;color:#e6e6e6;">12</div>
<div class="a t" style="left:1049.64px;width:20px;text-align:right;top:639.98px;font-size:9.2px;line-height:11.04px;color:#e6e6e6;">24</div>
<div class="a t" style="left:1049.64px;width:20px;text-align:right;top:657.98px;font-size:9.2px;line-height:11.04px;color:#e6e6e6;">36</div>
<div class="a t" style="left:1049.64px;width:20px;text-align:right;top:672.28px;font-size:9.2px;line-height:11.04px;color:#e6e6e6;">48</div>
<div class="a t" style="left:1049.64px;width:20px;text-align:right;top:683.08px;font-size:9.2px;line-height:11.04px;color:#e6e6e6;">60</div>
<div class="a" style="left:1076.03px;top:555.3px;width:79.95px;height:3.2px;background:#333333;"></div>
<div class="a" style="left:1076.03px;top:558.5px;width:79.95px;height:14.5px;background:#404040;"></div>
<div class="a" style="left:1080.43px;top:562px;width:7.2px;height:7.4px;background:#262626;"></div>
<div class="a t" style="left:1093.43px;width:20px;text-align:center;top:560.8px;font-size:9px;line-height:10.8px;color:#e8e8e8;">3</div>
<div class="a t" style="left:1132.43px;width:20px;text-align:center;top:560.8px;font-size:9px;line-height:10.8px;color:#e8e8e8;">28</div>
<div class="a" style="left:1076.03px;top:575.2px;width:79.95px;height:16.8px;background:#404040;"></div>
<div class="a" style="left:1076.03px;top:593.6px;width:79.95px;height:102px;background:#474747;"></div>
<div class="a t" style="left:1085.73px;top:597.2px;width:30.1px;height:10.2px;border-radius:5.1px;background:#2a2a2a;color:#f0f0f0;font-size:9.3px;line-height:11.2px;text-align:center;">-14.9</div>
<div class="a t" style="left:1091.23px;top:644.3px;width:17.2px;height:17px;border:1px solid #2a2a2a;background:#f0902c;color:#1a1a1a;font-size:10.5px;line-height:17.6px;text-align:center;">14</div>
<div class="a t" style="left:1091.23px;top:667.6px;width:17.2px;height:8.8px;border:1px solid #2c2c2c;background:#383838;color:#d0d0d0;font-size:8.5px;line-height:9.6px;text-align:center;">S</div>
<div class="a" style="left:1091.23px;top:682.2px;width:17.2px;height:8.7px;border:1px solid #2c2c2c;background:#383838;"></div>
<div class="a" style="left:1122px;top:597.1px;width:4.2px;height:96px;background:#161616;"></div>
<div class="a" style="left:1122px;top:687px;width:4.2px;height:4px;background:#4a7d34;"></div>
<div class="a" style="left:1122px;top:691px;width:4.2px;height:2.1px;background:linear-gradient(#7af060,#2ee85a);"></div>
<div class="a" style="left:1122px;top:671.5px;width:4.2px;height:1.1px;background:#3a9a3a;"></div>
<div class="a" style="left:1122px;top:606.3px;width:4.2px;height:1px;background:rgba(70,70,70,0.8);"></div>
<div class="a" style="left:1127.2px;top:597.1px;width:4.2px;height:96px;background:#161616;"></div>
<div class="a" style="left:1127.2px;top:680px;width:4.2px;height:3.7px;background:#4a7d34;"></div>
<div class="a" style="left:1127.2px;top:683.7px;width:4.2px;height:9.4px;background:linear-gradient(#7af060,#2ee85a);"></div>
<div class="a" style="left:1127.2px;top:657.9px;width:4.2px;height:1.1px;background:#a8ea50;"></div>
<div class="a" style="left:1127.2px;top:606.3px;width:4.2px;height:1px;background:rgba(70,70,70,0.8);"></div>
<div class="a" style="left:1132.93px;top:597.1px;width:3.3px;height:1px;background:#6a6a6a;"></div>
<div class="a" style="left:1132.93px;top:606.3px;width:3.3px;height:1px;background:#8a8a8a;"></div>
<div class="a" style="left:1132.93px;top:616.1px;width:3.3px;height:1px;background:#6a6a6a;"></div>
<div class="a" style="left:1132.93px;top:625.3px;width:3.3px;height:1px;background:#8a8a8a;"></div>
<div class="a" style="left:1132.93px;top:635.1px;width:3.3px;height:1px;background:#6a6a6a;"></div>
<div class="a" style="left:1132.93px;top:644.1px;width:3.3px;height:1px;background:#8a8a8a;"></div>
<div class="a" style="left:1132.93px;top:654.2px;width:3.3px;height:1px;background:#6a6a6a;"></div>
<div class="a" style="left:1132.93px;top:662.3px;width:3.3px;height:1px;background:#8a8a8a;"></div>
<div class="a" style="left:1132.93px;top:670.1px;width:3.3px;height:1px;background:#6a6a6a;"></div>
<div class="a" style="left:1132.93px;top:676.3px;width:3.3px;height:1px;background:#8a8a8a;"></div>
<div class="a" style="left:1132.93px;top:682.5px;width:3.3px;height:1px;background:#6a6a6a;"></div>
<div class="a" style="left:1132.93px;top:687.1px;width:3.3px;height:1px;background:#8a8a8a;"></div>
<div class="a" style="left:1132.93px;top:691.3px;width:3.3px;height:1px;background:#6a6a6a;"></div>
<div class="a t" style="left:1131.33px;width:20px;text-align:right;top:602.08px;font-size:9.2px;line-height:11.04px;color:#e6e6e6;">0</div>
<div class="a t" style="left:1131.33px;width:20px;text-align:right;top:621.28px;font-size:9.2px;line-height:11.04px;color:#e6e6e6;">12</div>
<div class="a t" style="left:1131.33px;width:20px;text-align:right;top:639.98px;font-size:9.2px;line-height:11.04px;color:#e6e6e6;">24</div>
<div class="a t" style="left:1131.33px;width:20px;text-align:right;top:657.98px;font-size:9.2px;line-height:11.04px;color:#e6e6e6;">36</div>
<div class="a t" style="left:1131.33px;width:20px;text-align:right;top:672.28px;font-size:9.2px;line-height:11.04px;color:#e6e6e6;">48</div>
<div class="a t" style="left:1131.33px;width:20px;text-align:right;top:683.08px;font-size:9.2px;line-height:11.04px;color:#e6e6e6;">60</div>
<div class="a" style="left:1157.72px;top:555.3px;width:79.95px;height:3.2px;background:#333333;"></div>
<div class="a" style="left:1157.72px;top:558.5px;width:79.95px;height:14.5px;background:#404040;"></div>
<div class="a" style="left:1162.12px;top:562px;width:7.2px;height:7.4px;background:#262626;"></div>
<div class="a t" style="left:1175.12px;width:20px;text-align:center;top:560.8px;font-size:9px;line-height:10.8px;color:#e8e8e8;">3</div>
<div class="a t" style="left:1214.12px;width:20px;text-align:center;top:560.8px;font-size:9px;line-height:10.8px;color:#e8e8e8;">28</div>
<div class="a" style="left:1157.72px;top:575.2px;width:79.95px;height:16.8px;background:#404040;"></div>
<div class="a" style="left:1157.72px;top:593.6px;width:79.95px;height:102px;background:#474747;"></div>
<div class="a t" style="left:1167.42px;top:597.2px;width:30.1px;height:10.2px;border-radius:5.1px;background:#2a2a2a;color:#f0f0f0;font-size:9.3px;line-height:11.2px;text-align:center;">-10.2</div>
<div class="a t" style="left:1172.92px;top:644.3px;width:17.2px;height:17px;border:1px solid #2a2a2a;background:#f0902c;color:#1a1a1a;font-size:10.5px;line-height:17.6px;text-align:center;">15</div>
<div class="a t" style="left:1172.92px;top:667.6px;width:17.2px;height:8.8px;border:1px solid #2c2c2c;background:#383838;color:#d0d0d0;font-size:8.5px;line-height:9.6px;text-align:center;">S</div>
<div class="a" style="left:1172.92px;top:682.2px;width:17.2px;height:8.7px;border:1px solid #2c2c2c;background:#383838;"></div>
<div class="a" style="left:1203px;top:597.1px;width:4.2px;height:96px;background:#161616;"></div>
<div class="a" style="left:1203px;top:633.4px;width:4.2px;height:29.4px;background:#4a7d34;"></div>
<div class="a" style="left:1203px;top:662.8px;width:4.2px;height:30.3px;background:linear-gradient(#7af060,#2ee85a);"></div>
<div class="a" style="left:1203px;top:628.1px;width:4.2px;height:1.1px;background:#a8ea50;"></div>
<div class="a" style="left:1203px;top:606.3px;width:4.2px;height:1px;background:rgba(70,70,70,0.8);"></div>
<div class="a" style="left:1208.2px;top:597.1px;width:4.2px;height:96px;background:#161616;"></div>
<div class="a" style="left:1208.2px;top:640.2px;width:4.2px;height:23.7px;background:#4a7d34;"></div>
<div class="a" style="left:1208.2px;top:663.9px;width:4.2px;height:29.2px;background:linear-gradient(#7af060,#2ee85a);"></div>
<div class="a" style="left:1208.2px;top:629.7px;width:4.2px;height:1.1px;background:#a8ea50;"></div>
<div class="a" style="left:1208.2px;top:606.3px;width:4.2px;height:1px;background:rgba(70,70,70,0.8);"></div>
<div class="a" style="left:1214.62px;top:597.1px;width:3.3px;height:1px;background:#6a6a6a;"></div>
<div class="a" style="left:1214.62px;top:606.3px;width:3.3px;height:1px;background:#8a8a8a;"></div>
<div class="a" style="left:1214.62px;top:616.1px;width:3.3px;height:1px;background:#6a6a6a;"></div>
<div class="a" style="left:1214.62px;top:625.3px;width:3.3px;height:1px;background:#8a8a8a;"></div>
<div class="a" style="left:1214.62px;top:635.1px;width:3.3px;height:1px;background:#6a6a6a;"></div>
<div class="a" style="left:1214.62px;top:644.1px;width:3.3px;height:1px;background:#8a8a8a;"></div>
<div class="a" style="left:1214.62px;top:654.2px;width:3.3px;height:1px;background:#6a6a6a;"></div>
<div class="a" style="left:1214.62px;top:662.3px;width:3.3px;height:1px;background:#8a8a8a;"></div>
<div class="a" style="left:1214.62px;top:670.1px;width:3.3px;height:1px;background:#6a6a6a;"></div>
<div class="a" style="left:1214.62px;top:676.3px;width:3.3px;height:1px;background:#8a8a8a;"></div>
<div class="a" style="left:1214.62px;top:682.5px;width:3.3px;height:1px;background:#6a6a6a;"></div>
<div class="a" style="left:1214.62px;top:687.1px;width:3.3px;height:1px;background:#8a8a8a;"></div>
<div class="a" style="left:1214.62px;top:691.3px;width:3.3px;height:1px;background:#6a6a6a;"></div>
<div class="a t" style="left:1213.02px;width:20px;text-align:right;top:602.08px;font-size:9.2px;line-height:11.04px;color:#e6e6e6;">0</div>
<div class="a t" style="left:1213.02px;width:20px;text-align:right;top:621.28px;font-size:9.2px;line-height:11.04px;color:#e6e6e6;">12</div>
<div class="a t" style="left:1213.02px;width:20px;text-align:right;top:639.98px;font-size:9.2px;line-height:11.04px;color:#e6e6e6;">24</div>
<div class="a t" style="left:1213.02px;width:20px;text-align:right;top:657.98px;font-size:9.2px;line-height:11.04px;color:#e6e6e6;">36</div>
<div class="a t" style="left:1213.02px;width:20px;text-align:right;top:672.28px;font-size:9.2px;line-height:11.04px;color:#e6e6e6;">48</div>
<div class="a t" style="left:1213.02px;width:20px;text-align:right;top:683.08px;font-size:9.2px;line-height:11.04px;color:#e6e6e6;">60</div>
<div class="a" style="left:1239.4px;top:555.3px;width:79.95px;height:3.2px;background:#333333;"></div>
<div class="a" style="left:1239.4px;top:558.5px;width:79.95px;height:14.5px;background:#404040;"></div>
<div class="a" style="left:1243.81px;top:562px;width:7.2px;height:7.4px;background:#262626;"></div>
<div class="a t" style="left:1256.81px;width:20px;text-align:center;top:560.8px;font-size:9px;line-height:10.8px;color:#e8e8e8;">3</div>
<div class="a t" style="left:1295.81px;width:20px;text-align:center;top:560.8px;font-size:9px;line-height:10.8px;color:#e8e8e8;">28</div>
<div class="a" style="left:1239.4px;top:575.2px;width:79.95px;height:16.8px;background:#404040;"></div>
<div class="a" style="left:1239.4px;top:593.6px;width:79.95px;height:102px;background:#474747;"></div>
<div class="a t" style="left:1249.11px;top:597.2px;width:30.1px;height:10.2px;border-radius:5.1px;background:#2a2a2a;color:#f0f0f0;font-size:9.3px;line-height:11.2px;text-align:center;">-3.48</div>
<div class="a t" style="left:1254.61px;top:644.3px;width:17.2px;height:17px;border:1px solid #2a2a2a;background:#f0902c;color:#1a1a1a;font-size:10.5px;line-height:17.6px;text-align:center;">16</div>
<div class="a t" style="left:1254.61px;top:667.6px;width:17.2px;height:8.8px;border:1px solid #2c2c2c;background:#383838;color:#d0d0d0;font-size:8.5px;line-height:9.6px;text-align:center;">S</div>
<div class="a" style="left:1254.61px;top:682.2px;width:17.2px;height:8.7px;border:1px solid #2c2c2c;background:#383838;"></div>
<div class="a" style="left:1285px;top:597.1px;width:4.2px;height:96px;background:#161616;"></div>
<div class="a" style="left:1285px;top:622.6px;width:4.2px;height:24.4px;background:#4a7d34;"></div>
<div class="a" style="left:1285px;top:647px;width:4.2px;height:46.1px;background:linear-gradient(#7af060,#2ee85a);"></div>
<div class="a" style="left:1285px;top:619.9px;width:4.2px;height:1.1px;background:#a8ea50;"></div>
<div class="a" style="left:1285px;top:606.3px;width:4.2px;height:1px;background:rgba(70,70,70,0.8);"></div>
<div class="a" style="left:1290.2px;top:597.1px;width:4.2px;height:96px;background:#161616;"></div>
<div class="a" style="left:1290.2px;top:628px;width:4.2px;height:21.2px;background:#4a7d34;"></div>
<div class="a" style="left:1290.2px;top:649.2px;width:4.2px;height:43.9px;background:linear-gradient(#7af060,#2ee85a);"></div>
<div class="a" style="left:1290.2px;top:624.8px;width:4.2px;height:1.1px;background:#a8ea50;"></div>
<div class="a" style="left:1290.2px;top:606.3px;width:4.2px;height:1px;background:rgba(70,70,70,0.8);"></div>
<div class="a" style="left:1296.31px;top:597.1px;width:3.3px;height:1px;background:#6a6a6a;"></div>
<div class="a" style="left:1296.31px;top:606.3px;width:3.3px;height:1px;background:#8a8a8a;"></div>
<div class="a" style="left:1296.31px;top:616.1px;width:3.3px;height:1px;background:#6a6a6a;"></div>
<div class="a" style="left:1296.31px;top:625.3px;width:3.3px;height:1px;background:#8a8a8a;"></div>
<div class="a" style="left:1296.31px;top:635.1px;width:3.3px;height:1px;background:#6a6a6a;"></div>
<div class="a" style="left:1296.31px;top:644.1px;width:3.3px;height:1px;background:#8a8a8a;"></div>
<div class="a" style="left:1296.31px;top:654.2px;width:3.3px;height:1px;background:#6a6a6a;"></div>
<div class="a" style="left:1296.31px;top:662.3px;width:3.3px;height:1px;background:#8a8a8a;"></div>
<div class="a" style="left:1296.31px;top:670.1px;width:3.3px;height:1px;background:#6a6a6a;"></div>
<div class="a" style="left:1296.31px;top:676.3px;width:3.3px;height:1px;background:#8a8a8a;"></div>
<div class="a" style="left:1296.31px;top:682.5px;width:3.3px;height:1px;background:#6a6a6a;"></div>
<div class="a" style="left:1296.31px;top:687.1px;width:3.3px;height:1px;background:#8a8a8a;"></div>
<div class="a" style="left:1296.31px;top:691.3px;width:3.3px;height:1px;background:#6a6a6a;"></div>
<div class="a t" style="left:1294.7px;width:20px;text-align:right;top:602.08px;font-size:9.2px;line-height:11.04px;color:#e6e6e6;">0</div>
<div class="a t" style="left:1294.7px;width:20px;text-align:right;top:621.28px;font-size:9.2px;line-height:11.04px;color:#e6e6e6;">12</div>
<div class="a t" style="left:1294.7px;width:20px;text-align:right;top:639.98px;font-size:9.2px;line-height:11.04px;color:#e6e6e6;">24</div>
<div class="a t" style="left:1294.7px;width:20px;text-align:right;top:657.98px;font-size:9.2px;line-height:11.04px;color:#e6e6e6;">36</div>
<div class="a t" style="left:1294.7px;width:20px;text-align:right;top:672.28px;font-size:9.2px;line-height:11.04px;color:#e6e6e6;">48</div>
<div class="a t" style="left:1294.7px;width:20px;text-align:right;top:683.08px;font-size:9.2px;line-height:11.04px;color:#e6e6e6;">60</div>
<div class="a" style="left:1321.09px;top:555.3px;width:80.11px;height:3.2px;background:#333333;"></div>
<div class="a" style="left:1321.09px;top:558.5px;width:80.11px;height:14.5px;background:#464646;"></div>
<div class="a" style="left:1325.49px;top:562px;width:7.2px;height:7.4px;background:#262626;"></div>
<div class="a t" style="left:1338.59px;width:20px;text-align:center;top:560.8px;font-size:9px;line-height:10.8px;color:#e8e8e8;">22</div>
<div class="a t" style="left:1377.49px;width:20px;text-align:center;top:560.8px;font-size:9px;line-height:10.8px;color:#e8e8e8;">4</div>
<div class="a" style="left:1321.09px;top:575.2px;width:80.11px;height:16.8px;background:#575757;"></div>
<div class="a" style="left:1321.09px;top:593.6px;width:80.11px;height:102px;background:#575757;"></div>
<div class="a t" style="left:1330.79px;top:597.2px;width:30.1px;height:10.2px;border-radius:5.1px;background:#2a2a2a;color:#f0f0f0;font-size:9.3px;line-height:11.2px;text-align:center;">-9.97</div>
<div class="a t" style="left:1336.29px;top:644.3px;width:17.2px;height:17px;border:1px solid #2a2a2a;background:#f0902c;color:#1a1a1a;font-size:10.5px;line-height:17.6px;text-align:center;">17</div>
<div class="a t" style="left:1336.29px;top:667.6px;width:17.2px;height:8.8px;border:1px solid #2c2c2c;background:#383838;color:#d0d0d0;font-size:8.5px;line-height:9.6px;text-align:center;">S</div>
<div class="a" style="left:1336.29px;top:682.2px;width:17.2px;height:8.7px;border:1px solid #2c2c2c;background:#383838;"></div>
<div class="a" style="left:1367px;top:597.1px;width:4.2px;height:96px;background:#161616;"></div>
<div class="a" style="left:1367px;top:644.3px;width:4.2px;height:6px;background:#4a7d34;"></div>
<div class="a" style="left:1367px;top:650.3px;width:4.2px;height:42.8px;background:linear-gradient(#7af060,#2ee85a);"></div>
<div class="a" style="left:1367px;top:628.9px;width:4.2px;height:1.1px;background:#a8ea50;"></div>
<div class="a" style="left:1367px;top:606.3px;width:4.2px;height:1px;background:rgba(70,70,70,0.8);"></div>
<div class="a" style="left:1372.2px;top:597.1px;width:4.2px;height:96px;background:#161616;"></div>
<div class="a" style="left:1372.2px;top:645.7px;width:4.2px;height:1.3px;background:#4a7d34;"></div>
<div class="a" style="left:1372.2px;top:647px;width:4.2px;height:46.1px;background:linear-gradient(#7af060,#2ee85a);"></div>
<div class="a" style="left:1372.2px;top:627px;width:4.2px;height:1.1px;background:#a8ea50;"></div>
<div class="a" style="left:1372.2px;top:606.3px;width:4.2px;height:1px;background:rgba(70,70,70,0.8);"></div>
<div class="a" style="left:1377.99px;top:597.1px;width:3.3px;height:1px;background:#6a6a6a;"></div>
<div class="a" style="left:1377.99px;top:606.3px;width:3.3px;height:1px;background:#8a8a8a;"></div>
<div class="a" style="left:1377.99px;top:616.1px;width:3.3px;height:1px;background:#6a6a6a;"></div>
<div class="a" style="left:1377.99px;top:625.3px;width:3.3px;height:1px;background:#8a8a8a;"></div>
<div class="a" style="left:1377.99px;top:635.1px;width:3.3px;height:1px;background:#6a6a6a;"></div>
<div class="a" style="left:1377.99px;top:644.1px;width:3.3px;height:1px;background:#8a8a8a;"></div>
<div class="a" style="left:1377.99px;top:654.2px;width:3.3px;height:1px;background:#6a6a6a;"></div>
<div class="a" style="left:1377.99px;top:662.3px;width:3.3px;height:1px;background:#8a8a8a;"></div>
<div class="a" style="left:1377.99px;top:670.1px;width:3.3px;height:1px;background:#6a6a6a;"></div>
<div class="a" style="left:1377.99px;top:676.3px;width:3.3px;height:1px;background:#8a8a8a;"></div>
<div class="a" style="left:1377.99px;top:682.5px;width:3.3px;height:1px;background:#6a6a6a;"></div>
<div class="a" style="left:1377.99px;top:687.1px;width:3.3px;height:1px;background:#8a8a8a;"></div>
<div class="a" style="left:1377.99px;top:691.3px;width:3.3px;height:1px;background:#6a6a6a;"></div>
<div class="a t" style="left:1376.39px;width:20px;text-align:right;top:602.08px;font-size:9.2px;line-height:11.04px;color:#e6e6e6;">0</div>
<div class="a t" style="left:1376.39px;width:20px;text-align:right;top:621.28px;font-size:9.2px;line-height:11.04px;color:#e6e6e6;">12</div>
<div class="a t" style="left:1376.39px;width:20px;text-align:right;top:639.98px;font-size:9.2px;line-height:11.04px;color:#e6e6e6;">24</div>
<div class="a t" style="left:1376.39px;width:20px;text-align:right;top:657.98px;font-size:9.2px;line-height:11.04px;color:#e6e6e6;">36</div>
<div class="a t" style="left:1376.39px;width:20px;text-align:right;top:672.28px;font-size:9.2px;line-height:11.04px;color:#e6e6e6;">48</div>
<div class="a t" style="left:1376.39px;width:20px;text-align:right;top:683.08px;font-size:9.2px;line-height:11.04px;color:#e6e6e6;">60</div>
<div class="a" style="left:1403px;top:557px;width:47.3px;height:1.5px;background:#333333;"></div>
<div class="a" style="left:1403px;top:558.5px;width:47.3px;height:14.5px;background:#404040;"></div>
<div class="a" style="left:1425.3px;top:561.4px;width:2px;height:9.2px;background:#232323;"></div>
<div class="a" style="left:1425.3px;top:563.1px;width:2px;height:0.5px;background:#3a3a3a;"></div>
<div class="a" style="left:1425.3px;top:564.95px;width:2px;height:0.5px;background:#3a3a3a;"></div>
<div class="a" style="left:1425.3px;top:566.8px;width:2px;height:0.5px;background:#3a3a3a;"></div>
<div class="a" style="left:1425.3px;top:568.65px;width:2px;height:0.5px;background:#3a3a3a;"></div>
<div class="a" style="left:1403px;top:575.2px;width:47.3px;height:16.8px;background:#404040;"></div>
<div class="a" style="left:1403px;top:593.6px;width:47.3px;height:102px;background:#474747;"></div>
<div class="a t" style="left:1407.2px;top:597.3px;width:19.3px;height:10.2px;border-radius:5.1px;background:#2a2a2a;color:#f0f0f0;font-size:9.3px;line-height:11.2px;text-align:center;">-5.0</div>
<div class="a t" style="left:1407.2px;top:620.2px;width:19.3px;height:10.8px;background:#2e2e2e;outline:1px solid #262626;color:#e0e0e0;font-size:9px;line-height:11.4px;text-align:center;"><span style="position:relative">C</span></div>
<div class="a" style="left:1407.2px;top:644.3px;width:17.3px;height:17.2px;border:1px solid #2a2a2a;background:#f0902c;"></div>
<div class="a t" style="left:1407.2px;top:667.6px;width:17.3px;height:8.8px;border:1px solid #2c2c2c;background:#383838;color:#d0d0d0;font-size:8.5px;line-height:9.6px;text-align:center;">S</div>
<div class="a" style="left:1430.8px;top:597.1px;width:3.6px;height:96px;background:#161616;"></div>
<div class="a" style="left:1430.8px;top:636.3px;width:3.6px;height:6.4px;background:#4a7d34;"></div>
<div class="a" style="left:1430.8px;top:642.7px;width:3.6px;height:50.4px;background:linear-gradient(#7af060,#2ee85a);"></div>
<div class="a" style="left:1430.8px;top:621px;width:3.6px;height:1.1px;background:#a8ea50;"></div>
<div class="a" style="left:1430.8px;top:606.3px;width:3.6px;height:1px;background:rgba(70,70,70,0.8);"></div>
<div class="a" style="left:1435.4px;top:597.1px;width:3.6px;height:96px;background:#161616;"></div>
<div class="a" style="left:1435.4px;top:637px;width:3.6px;height:1.5px;background:#4a7d34;"></div>
<div class="a" style="left:1435.4px;top:638.5px;width:3.6px;height:54.6px;background:linear-gradient(#7af060,#2ee85a);"></div>
<div class="a" style="left:1435.4px;top:618.3px;width:3.6px;height:1.1px;background:#a8ea50;"></div>
<div class="a" style="left:1435.4px;top:606.3px;width:3.6px;height:1px;background:rgba(70,70,70,0.8);"></div>
<div class="a" style="left:1440.4px;top:597.1px;width:3.3px;height:1px;background:#6a6a6a;"></div>
<div class="a" style="left:1440.4px;top:606.3px;width:3.3px;height:1px;background:#8a8a8a;"></div>
<div class="a" style="left:1440.4px;top:616.1px;width:3.3px;height:1px;background:#6a6a6a;"></div>
<div class="a" style="left:1440.4px;top:625.3px;width:3.3px;height:1px;background:#8a8a8a;"></div>
<div class="a" style="left:1440.4px;top:635.1px;width:3.3px;height:1px;background:#6a6a6a;"></div>
<div class="a" style="left:1440.4px;top:644.1px;width:3.3px;height:1px;background:#8a8a8a;"></div>
<div class="a" style="left:1440.4px;top:654.2px;width:3.3px;height:1px;background:#6a6a6a;"></div>
<div class="a" style="left:1440.4px;top:662.3px;width:3.3px;height:1px;background:#8a8a8a;"></div>
<div class="a" style="left:1440.4px;top:670.1px;width:3.3px;height:1px;background:#6a6a6a;"></div>
<div class="a" style="left:1440.4px;top:676.3px;width:3.3px;height:1px;background:#8a8a8a;"></div>
<div class="a" style="left:1440.4px;top:682.5px;width:3.3px;height:1px;background:#6a6a6a;"></div>
<div class="a" style="left:1440.4px;top:687.1px;width:3.3px;height:1px;background:#8a8a8a;"></div>
<div class="a" style="left:1440.4px;top:691.3px;width:3.3px;height:1px;background:#6a6a6a;"></div>
<div class="a" style="left:1452px;top:557px;width:47.6px;height:1.5px;background:#333333;"></div>
<div class="a" style="left:1452px;top:558.5px;width:47.6px;height:14.5px;background:#404040;"></div>
<div class="a" style="left:1474.3px;top:561.4px;width:2px;height:9.2px;background:#232323;"></div>
<div class="a" style="left:1474.3px;top:563.1px;width:2px;height:0.5px;background:#3a3a3a;"></div>
<div class="a" style="left:1474.3px;top:564.95px;width:2px;height:0.5px;background:#3a3a3a;"></div>
<div class="a" style="left:1474.3px;top:566.8px;width:2px;height:0.5px;background:#3a3a3a;"></div>
<div class="a" style="left:1474.3px;top:568.65px;width:2px;height:0.5px;background:#3a3a3a;"></div>
<div class="a" style="left:1452px;top:575.2px;width:47.6px;height:16.8px;background:#404040;"></div>
<div class="a" style="left:1452px;top:593.6px;width:47.6px;height:102px;background:#474747;"></div>
<div class="a t" style="left:1456.2px;top:597.3px;width:19.3px;height:10.2px;border-radius:5.1px;background:#2a2a2a;color:#f0f0f0;font-size:9.3px;line-height:11.2px;text-align:center;">-13</div>
<div class="a t" style="left:1456.2px;top:620.2px;width:19.3px;height:10.8px;background:#2e2e2e;outline:1px solid #262626;color:#e0e0e0;font-size:9px;line-height:11.4px;text-align:center;"><div class="a" style="left:9.5px;top:0;width:9.8px;height:10.8px;background:#1d6b80;"></div><span style="position:relative">34R</span></div>
<div class="a" style="left:1456.2px;top:644.3px;width:17.3px;height:17.2px;border:1px solid #2a2a2a;background:#f0902c;"></div>
<div class="a t" style="left:1456.2px;top:667.6px;width:17.3px;height:8.8px;border:1px solid #2c2c2c;background:#383838;color:#d0d0d0;font-size:8.5px;line-height:9.6px;text-align:center;">S</div>
<div class="a" style="left:1479.8px;top:597.1px;width:3.6px;height:96px;background:#161616;"></div>
<div class="a" style="left:1479.8px;top:693px;width:3.6px;height:0px;background:#4a7d34;"></div>
<div class="a" style="left:1479.8px;top:693px;width:3.6px;height:0.1px;background:linear-gradient(#7af060,#2ee85a);"></div>
<div class="a" style="left:1479.8px;top:679.5px;width:3.6px;height:1.1px;background:#3a9a3a;"></div>
<div class="a" style="left:1479.8px;top:606.3px;width:3.6px;height:1px;background:rgba(70,70,70,0.8);"></div>
<div class="a" style="left:1484.4px;top:597.1px;width:3.6px;height:96px;background:#161616;"></div>
<div class="a" style="left:1484.4px;top:690px;width:3.6px;height:0px;background:#4a7d34;"></div>
<div class="a" style="left:1484.4px;top:690px;width:3.6px;height:3.1px;background:linear-gradient(#7af060,#2ee85a);"></div>
<div class="a" style="left:1484.4px;top:667.5px;width:3.6px;height:1.1px;background:#3a9a3a;"></div>
<div class="a" style="left:1484.4px;top:606.3px;width:3.6px;height:1px;background:rgba(70,70,70,0.8);"></div>
<div class="a" style="left:1489.4px;top:597.1px;width:3.3px;height:1px;background:#6a6a6a;"></div>
<div class="a" style="left:1489.4px;top:606.3px;width:3.3px;height:1px;background:#8a8a8a;"></div>
<div class="a" style="left:1489.4px;top:616.1px;width:3.3px;height:1px;background:#6a6a6a;"></div>
<div class="a" style="left:1489.4px;top:625.3px;width:3.3px;height:1px;background:#8a8a8a;"></div>
<div class="a" style="left:1489.4px;top:635.1px;width:3.3px;height:1px;background:#6a6a6a;"></div>
<div class="a" style="left:1489.4px;top:644.1px;width:3.3px;height:1px;background:#8a8a8a;"></div>
<div class="a" style="left:1489.4px;top:654.2px;width:3.3px;height:1px;background:#6a6a6a;"></div>
<div class="a" style="left:1489.4px;top:662.3px;width:3.3px;height:1px;background:#8a8a8a;"></div>
<div class="a" style="left:1489.4px;top:670.1px;width:3.3px;height:1px;background:#6a6a6a;"></div>
<div class="a" style="left:1489.4px;top:676.3px;width:3.3px;height:1px;background:#8a8a8a;"></div>
<div class="a" style="left:1489.4px;top:682.5px;width:3.3px;height:1px;background:#6a6a6a;"></div>
<div class="a" style="left:1489.4px;top:687.1px;width:3.3px;height:1px;background:#8a8a8a;"></div>
<div class="a" style="left:1489.4px;top:691.3px;width:3.3px;height:1px;background:#6a6a6a;"></div>
<div class="a" style="left:1501.2px;top:557px;width:45.8px;height:1.5px;background:#333333;"></div>
<div class="a" style="left:1501.2px;top:558.5px;width:45.8px;height:14.5px;background:#404040;"></div>
<div class="a" style="left:1523.5px;top:561.4px;width:2px;height:9.2px;background:#232323;"></div>
<div class="a" style="left:1523.5px;top:563.1px;width:2px;height:0.5px;background:#3a3a3a;"></div>
<div class="a" style="left:1523.5px;top:564.95px;width:2px;height:0.5px;background:#3a3a3a;"></div>
<div class="a" style="left:1523.5px;top:566.8px;width:2px;height:0.5px;background:#3a3a3a;"></div>
<div class="a" style="left:1523.5px;top:568.65px;width:2px;height:0.5px;background:#3a3a3a;"></div>
<div class="a" style="left:1501.2px;top:575.2px;width:45.8px;height:16.8px;background:#404040;"></div>
<div class="a" style="left:1501.2px;top:593.6px;width:45.8px;height:102px;background:#474747;"></div>
<div class="a t" style="left:1505.4px;top:597.3px;width:19.3px;height:10.2px;border-radius:5.1px;background:#2a2a2a;color:#f0f0f0;font-size:9.3px;line-height:11.2px;text-align:center;">-30</div>
<div class="a t" style="left:1505.4px;top:620.2px;width:19.3px;height:10.8px;background:#2e2e2e;outline:1px solid #262626;color:#e0e0e0;font-size:9px;line-height:11.4px;text-align:center;"><div class="a" style="left:0;top:0;width:9.7px;height:10.8px;background:#1d6b80;"></div><span style="position:relative">21L</span></div>
<div class="a" style="left:1505.4px;top:644.3px;width:17.3px;height:17.2px;border:1px solid #2a2a2a;background:#f0902c;"></div>
<div class="a t" style="left:1505.4px;top:667.6px;width:17.3px;height:8.8px;border:1px solid #2c2c2c;background:#383838;color:#d0d0d0;font-size:8.5px;line-height:9.6px;text-align:center;">S</div>
<div class="a" style="left:1529px;top:597.1px;width:3.6px;height:96px;background:#161616;"></div>
<div class="a" style="left:1529px;top:606.3px;width:3.6px;height:1px;background:rgba(70,70,70,0.8);"></div>
<div class="a" style="left:1533.6px;top:597.1px;width:3.6px;height:96px;background:#161616;"></div>
<div class="a" style="left:1533.6px;top:606.3px;width:3.6px;height:1px;background:rgba(70,70,70,0.8);"></div>
<div class="a" style="left:1538.6px;top:597.1px;width:3.3px;height:1px;background:#6a6a6a;"></div>
<div class="a" style="left:1538.6px;top:606.3px;width:3.3px;height:1px;background:#8a8a8a;"></div>
<div class="a" style="left:1538.6px;top:616.1px;width:3.3px;height:1px;background:#6a6a6a;"></div>
<div class="a" style="left:1538.6px;top:625.3px;width:3.3px;height:1px;background:#8a8a8a;"></div>
<div class="a" style="left:1538.6px;top:635.1px;width:3.3px;height:1px;background:#6a6a6a;"></div>
<div class="a" style="left:1538.6px;top:644.1px;width:3.3px;height:1px;background:#8a8a8a;"></div>
<div class="a" style="left:1538.6px;top:654.2px;width:3.3px;height:1px;background:#6a6a6a;"></div>
<div class="a" style="left:1538.6px;top:662.3px;width:3.3px;height:1px;background:#8a8a8a;"></div>
<div class="a" style="left:1538.6px;top:670.1px;width:3.3px;height:1px;background:#6a6a6a;"></div>
<div class="a" style="left:1538.6px;top:676.3px;width:3.3px;height:1px;background:#8a8a8a;"></div>
<div class="a" style="left:1538.6px;top:682.5px;width:3.3px;height:1px;background:#6a6a6a;"></div>
<div class="a" style="left:1538.6px;top:687.1px;width:3.3px;height:1px;background:#8a8a8a;"></div>
<div class="a" style="left:1538.6px;top:691.3px;width:3.3px;height:1px;background:#6a6a6a;"></div>
<div class="a" style="left:11px;top:695.6px;width:1536px;height:13.4px;background:#222222;border-bottom-left-radius:4px;"></div>
<div class="a" style="left:14.5px;top:699.3px;width:1408px;height:5.9px;border-radius:3px;background:#393939;"></div>
<div class="a" style="left:0px;top:709px;width:1547px;height:7.2px;background:#333333;"></div>
<div class="a" style="left:0px;top:716.2px;width:1547px;height:168.8px;background:#262626;"></div>
<div class="a" style="left:4px;top:719px;width:200.8px;height:161.8px;background:#474747;border-radius:2px;overflow:hidden;box-sizing:border-box;border:1px solid #525252;"><div style="position:absolute;left:0;top:0;right:0;height:14px;background:#555555;"></div></div>
<div class="a t" style="left:21.7px;top:721.2px;font-size:9px;line-height:10.8px;color:#f0f0f0;font-weight:bold;">Textural Pad</div>
<div class="a t" style="left:121.8px;top:721.3px;width:25.6px;height:10.4px;border-radius:5.2px;background:#2a2a2a;outline:1px solid #222;color:#f0f0f0;font-size:8.8px;line-height:12.4px;text-align:center;font-weight:bold;">Rand</div>
<div class="a t" style="left:152px;top:721.3px;width:20.7px;height:10.4px;background:#333;outline:1px solid #1a1a1a;color:#f0f0f0;font-size:8.8px;line-height:12.4px;text-align:center;font-weight:bold;">Map</div>
<div class="a" style="left:22.7px;top:737.7px;width:41.7px;height:67.6px;border-radius:4px;background:#3e3e3e;outline:1px solid #2e2e2e;overflow:hidden;"><div style="position:absolute;left:0;top:0;right:0;height:24.3px;background:#778a2a;"></div></div>
<div class="a t" style="left:13.55px;width:60px;text-align:center;top:739.3px;font-size:9px;line-height:10.8px;color:#1a1a1a;">Reso</div>
<div class="a t" style="left:13.55px;width:60px;text-align:center;top:749.1px;font-size:9px;line-height:10.8px;color:#1a1a1a;">Note</div>
<div class="a t" style="left:13.55px;width:60px;text-align:center;top:788.7px;font-size:9px;line-height:10.8px;color:#e8e8e8;">G1</div>
<div class="a" style="left:67.2px;top:737.7px;width:41.7px;height:67.6px;border-radius:4px;background:#3e3e3e;outline:1px solid #2e2e2e;overflow:hidden;"><div style="position:absolute;left:0;top:0;right:0;height:24.3px;background:#778a2a;"></div></div>
<div class="a t" style="left:58.05px;width:60px;text-align:center;top:739.3px;font-size:9px;line-height:10.8px;color:#1a1a1a;">Reso</div>
<div class="a t" style="left:58.05px;width:60px;text-align:center;top:749.1px;font-size:9px;line-height:10.8px;color:#1a1a1a;">Chord</div>
<div class="a t" style="left:58.05px;width:60px;text-align:center;top:788.7px;font-size:9px;line-height:10.8px;color:#e8e8e8;">0</div>
<div class="a" style="left:111.8px;top:737.7px;width:41.9px;height:67.6px;border-radius:4px;background:#3e3e3e;outline:1px solid #2e2e2e;overflow:hidden;"><div style="position:absolute;left:0;top:0;right:0;height:24.3px;background:#7b8fd0;"></div></div>
<div class="a t" style="left:102.75px;width:60px;text-align:center;top:739.3px;font-size:9px;line-height:10.8px;color:#1a1a1a;">Verb</div>
<div class="a t" style="left:102.75px;width:60px;text-align:center;top:749.1px;font-size:9px;line-height:10.8px;color:#1a1a1a;">Decay</div>
<div class="a t" style="left:102.75px;width:60px;text-align:center;top:788.7px;font-size:9px;line-height:10.8px;color:#e8e8e8;">4.24 s</div>
<div class="a" style="left:156.6px;top:737.7px;width:41.9px;height:67.6px;border-radius:4px;background:#3e3e3e;outline:1px solid #2e2e2e;overflow:hidden;"><div style="position:absolute;left:0;top:0;right:0;height:24.3px;background:#4e4e4e;"></div></div>
<div class="a t" style="left:147.55px;width:60px;text-align:center;top:739.1px;font-size:9px;line-height:10.8px;color:#dddddd;">-</div>
<div class="a t" style="left:147.55px;width:60px;text-align:center;top:788.7px;font-size:9px;line-height:10.8px;color:#e8e8e8;">0</div>
<div class="a" style="left:22.7px;top:808.6px;width:41.7px;height:67.4px;border-radius:4px;background:#3e3e3e;outline:1px solid #2e2e2e;overflow:hidden;"><div style="position:absolute;left:0;top:0;right:0;height:24.2px;background:#b07850;"></div></div>
<div class="a t" style="left:13.55px;width:60px;text-align:center;top:809.8px;font-size:9px;line-height:10.8px;color:#1a1a1a;">Comp</div>
<div class="a t" style="left:13.55px;width:60px;text-align:center;top:818.8px;font-size:9px;line-height:10.8px;color:#1a1a1a;">Dry/Wet</div>
<div class="a t" style="left:13.55px;width:60px;text-align:center;top:859.6px;font-size:9px;line-height:10.8px;color:#e8e8e8;">100 %</div>
<div class="a" style="left:67.2px;top:808.6px;width:41.7px;height:67.4px;border-radius:4px;background:#3e3e3e;outline:1px solid #2e2e2e;overflow:hidden;"><div style="position:absolute;left:0;top:0;right:0;height:24.2px;background:#b07850;"></div></div>
<div class="a t" style="left:58.05px;width:60px;text-align:center;top:809.8px;font-size:9px;line-height:10.8px;color:#1a1a1a;">Comp</div>
<div class="a t" style="left:58.05px;width:60px;text-align:center;top:818.8px;font-size:9px;line-height:10.8px;color:#1a1a1a;">Ratio</div>
<div class="a t" style="left:58.05px;width:60px;text-align:center;top:859.6px;font-size:9px;line-height:10.8px;color:#e8e8e8;">2.89 : 1</div>
<div class="a" style="left:111.8px;top:808.6px;width:41.9px;height:67.4px;border-radius:4px;background:#3e3e3e;outline:1px solid #2e2e2e;overflow:hidden;"><div style="position:absolute;left:0;top:0;right:0;height:24.2px;background:#4e4e4e;"></div></div>
<div class="a t" style="left:102.75px;width:60px;text-align:center;top:810px;font-size:9px;line-height:10.8px;color:#dddddd;">-</div>
<div class="a t" style="left:102.75px;width:60px;text-align:center;top:859.6px;font-size:9px;line-height:10.8px;color:#e8e8e8;">0</div>
<div class="a" style="left:156.6px;top:808.6px;width:41.9px;height:67.4px;border-radius:4px;background:#3e3e3e;outline:1px solid #2e2e2e;overflow:hidden;"><div style="position:absolute;left:0;top:0;right:0;height:24.2px;background:#4e4e4e;"></div></div>
<div class="a t" style="left:147.55px;width:60px;text-align:center;top:810px;font-size:9px;line-height:10.8px;color:#dddddd;">-</div>
<div class="a t" style="left:147.55px;width:60px;text-align:center;top:859.6px;font-size:9px;line-height:10.8px;color:#e8e8e8;">0</div>
<div class="a" style="left:208px;top:719px;width:240.5px;height:161.8px;background:#474747;border-radius:2px;overflow:hidden;box-sizing:border-box;border:1px solid #525252;"><div style="position:absolute;left:0;top:0;right:0;height:14px;background:#555555;"></div></div>
<div class="a t" style="left:224.6px;top:721.2px;font-size:9px;line-height:10.8px;color:#f0f0f0;font-weight:bold;">Instrument Rack</div>
<div class="a t" style="left:228.8px;top:743.4px;width:15.8px;height:11px;background:#343434;outline:1px solid #2a2a2a;outline-offset:-1px;color:#e8e8e8;font-size:8px;line-height:11px;text-align:center;padding-left:0px;box-sizing:border-box;"></div>
<div class="a t" style="left:322.9px;top:743.4px;width:25.4px;height:11px;background:#2e2e2e;outline:1px solid #252525;outline-offset:-1px;color:#e8e8e8;font-size:8.8px;line-height:11px;text-align:center;padding-left:0px;box-sizing:border-box;font-weight:bold;">Key</div>
<div class="a t" style="left:351.3px;top:743.4px;width:25.5px;height:11px;background:#2e2e2e;outline:1px solid #252525;outline-offset:-1px;color:#e8e8e8;font-size:8.8px;line-height:11px;text-align:center;padding-left:0px;box-sizing:border-box;font-weight:bold;">Vel</div>
<div class="a t" style="left:379.4px;top:743.4px;width:25.7px;height:11px;background:#2e2e2e;outline:1px solid #252525;outline-offset:-1px;color:#e8e8e8;font-size:8.8px;line-height:11px;text-align:center;padding-left:0px;box-sizing:border-box;font-weight:bold;">Chain</div>
<div class="a t" style="left:408.3px;top:743.4px;width:25.2px;height:11px;background:#3ab0d8;outline:1px solid #252525;outline-offset:-1px;color:#102030;font-size:8.8px;line-height:11px;text-align:center;padding-left:0px;box-sizing:border-box;">Hide</div>
<div class="a" style="left:226px;top:760px;width:214px;height:115.4px;background:#2c2c2c;"></div>
<div class="a" style="left:229.4px;top:764px;width:5.6px;height:68px;border-radius:3px;background:#4a4a4a;"></div>
<div class="a" style="left:239.8px;top:760px;width:65.8px;height:16px;background:#c8dc8a;"></div>
<div class="a t" style="left:243px;top:762.6px;font-size:9px;line-height:10.8px;color:#1a1f2a;">Operator</div>
<div class="a" style="left:305.6px;top:760px;width:134.4px;height:16px;background:#3a3a3a;"></div>
<div class="a" style="left:307.5px;top:761.5px;width:1.5px;height:13px;background:#262626;"></div>
<div class="a t" style="left:314.3px;top:762.9px;width:32.6px;height:10.2px;background:#262626;color:#e6e6e6;font-size:8.4px;line-height:10.2px;text-align:center;overflow:hidden;white-space:nowrap;"><div style="position:absolute;left:1px;top:1px;bottom:1px;width:17.14px;background:#1d6b80;"></div><span style="position:relative">-12.0 dl</span></div>
<div class="a t" style="left:350.2px;top:762.9px;width:32.6px;height:10.2px;background:#262626;color:#e6e6e6;font-size:8.4px;line-height:10.2px;text-align:center;"><div style="position:absolute;left:16.3px;top:1px;bottom:1px;width:10.4px;background:#1d6b80;"></div><span style="position:relative">34R</span></div>
<div class="a" style="left:386.3px;top:762.4px;width:13.4px;height:11.2px;background:#f0902c;outline:1px solid #2a2a2a;"></div>
<div class="a t" style="left:403.6px;top:762.6px;width:13.4px;height:10.8px;background:#363636;outline:1px solid #252525;outline-offset:-1px;color:#d8d8d8;font-size:8.8px;line-height:10.8px;text-align:center;padding-left:0px;box-sizing:border-box;">S</div>
<div class="a" style="left:434.4px;top:760.6px;width:1.9px;height:1px;background:#1e1e1e;"></div>
<div class="a" style="left:437.2px;top:760.6px;width:1.9px;height:1px;background:#1e1e1e;"></div>
<div class="a" style="left:434.4px;top:762.6px;width:1.9px;height:12.2px;background:#1e1e1e;"></div>
<div class="a" style="left:437.2px;top:762.6px;width:1.9px;height:12.2px;background:#1e1e1e;"></div>
<div class="a" style="left:239.8px;top:777px;width:65.8px;height:15px;background:#c8dc8a;"></div>
<div class="a t" style="left:243px;top:779.1px;font-size:9px;line-height:10.8px;color:#1a1f2a;">Operator</div>
<div class="a" style="left:305.6px;top:777px;width:134.4px;height:15px;background:#3a3a3a;"></div>
<div class="a" style="left:307.5px;top:778.5px;width:1.5px;height:12px;background:#262626;"></div>
<div class="a t" style="left:314.3px;top:779.4px;width:32.6px;height:10.2px;background:#262626;color:#e6e6e6;font-size:8.4px;line-height:10.2px;text-align:center;overflow:hidden;white-space:nowrap;"><div style="position:absolute;left:1px;top:1px;bottom:1px;width:26.93px;background:#1d6b80;"></div><span style="position:relative">0.0 dB</span></div>
<div class="a t" style="left:350.2px;top:779.4px;width:32.6px;height:10.2px;background:#262626;color:#e6e6e6;font-size:8.4px;line-height:10.2px;text-align:center;"><div style="position:absolute;right:16.3px;top:1px;bottom:1px;width:6.43px;background:#1d6b80;"></div><span style="position:relative">21L</span></div>
<div class="a" style="left:386.3px;top:778.9px;width:13.4px;height:11.2px;background:#f0902c;outline:1px solid #2a2a2a;"></div>
<div class="a t" style="left:403.6px;top:779.1px;width:13.4px;height:10.8px;background:#363636;outline:1px solid #252525;outline-offset:-1px;color:#d8d8d8;font-size:8.8px;line-height:10.8px;text-align:center;padding-left:0px;box-sizing:border-box;">S</div>
<div class="a" style="left:434.4px;top:777.6px;width:1.9px;height:1px;background:#1e1e1e;"></div>
<div class="a" style="left:437.2px;top:777.6px;width:1.9px;height:1px;background:#1e1e1e;"></div>
<div class="a" style="left:434.4px;top:779.6px;width:1.9px;height:11.2px;background:#1e1e1e;"></div>
<div class="a" style="left:437.2px;top:779.6px;width:1.9px;height:11.2px;background:#1e1e1e;"></div>
<div class="a" style="left:239.8px;top:793px;width:65.8px;height:16px;background:#c8dc8a;"></div>
<div class="a t" style="left:243px;top:795.6px;font-size:9px;line-height:10.8px;color:#1a1f2a;">Operator</div>
<div class="a" style="left:305.6px;top:793px;width:134.4px;height:16px;background:#3a3a3a;"></div>
<div class="a" style="left:307.5px;top:794.5px;width:1.5px;height:13px;background:#262626;"></div>
<div class="a t" style="left:314.3px;top:795.9px;width:32.6px;height:10.2px;background:#262626;color:#e6e6e6;font-size:8.4px;line-height:10.2px;text-align:center;overflow:hidden;white-space:nowrap;"><div style="position:absolute;left:1px;top:1px;bottom:1px;width:26.93px;background:#1d6b80;"></div><span style="position:relative">0.0 dB</span></div>
<div class="a t" style="left:350.2px;top:795.9px;width:32.6px;height:10.2px;background:#262626;color:#e6e6e6;font-size:8.4px;line-height:10.2px;text-align:center;"><div style="position:absolute;left:16.3px;top:1px;bottom:1px;width:15.3px;background:#1d6b80;"></div><span style="position:relative">50R</span></div>
<div class="a" style="left:386.3px;top:795.4px;width:13.4px;height:11.2px;background:#f0902c;outline:1px solid #2a2a2a;"></div>
<div class="a t" style="left:403.6px;top:795.6px;width:13.4px;height:10.8px;background:#363636;outline:1px solid #252525;outline-offset:-1px;color:#d8d8d8;font-size:8.8px;line-height:10.8px;text-align:center;padding-left:0px;box-sizing:border-box;">S</div>
<div class="a" style="left:434.4px;top:793.6px;width:1.9px;height:1px;background:#1e1e1e;"></div>
<div class="a" style="left:437.2px;top:793.6px;width:1.9px;height:1px;background:#1e1e1e;"></div>
<div class="a" style="left:434.4px;top:795.6px;width:1.9px;height:12.2px;background:#1e1e1e;"></div>
<div class="a" style="left:437.2px;top:795.6px;width:1.9px;height:12.2px;background:#1e1e1e;"></div>
<div class="a" style="left:239.8px;top:810px;width:65.8px;height:15px;background:#c8dc8a;"></div>
<div class="a t" style="left:243px;top:812.1px;font-size:9px;line-height:10.8px;color:#1a1f2a;">Operator</div>
<div class="a" style="left:305.6px;top:810px;width:134.4px;height:15px;background:#3a3a3a;"></div>
<div class="a" style="left:307.5px;top:811.5px;width:1.5px;height:12px;background:#262626;"></div>
<div class="a t" style="left:314.3px;top:812.4px;width:32.6px;height:10.2px;background:#262626;color:#e6e6e6;font-size:8.4px;line-height:10.2px;text-align:center;overflow:hidden;white-space:nowrap;"><div style="position:absolute;left:1px;top:1px;bottom:1px;width:26.93px;background:#1d6b80;"></div><span style="position:relative">0.0 dB</span></div>
<div class="a t" style="left:350.2px;top:812.4px;width:32.6px;height:10.2px;background:#262626;color:#e6e6e6;font-size:8.4px;line-height:10.2px;text-align:center;"><div style="position:absolute;right:16.3px;top:1px;bottom:1px;width:15.3px;background:#1d6b80;"></div><span style="position:relative">50L</span></div>
<div class="a" style="left:386.3px;top:811.9px;width:13.4px;height:11.2px;background:#f0902c;outline:1px solid #2a2a2a;"></div>
<div class="a t" style="left:403.6px;top:812.1px;width:13.4px;height:10.8px;background:#363636;outline:1px solid #252525;outline-offset:-1px;color:#d8d8d8;font-size:8.8px;line-height:10.8px;text-align:center;padding-left:0px;box-sizing:border-box;">S</div>
<div class="a" style="left:434.4px;top:810.6px;width:1.9px;height:1px;background:#1e1e1e;"></div>
<div class="a" style="left:437.2px;top:810.6px;width:1.9px;height:1px;background:#1e1e1e;"></div>
<div class="a" style="left:434.4px;top:812.6px;width:1.9px;height:11.2px;background:#1e1e1e;"></div>
<div class="a" style="left:437.2px;top:812.6px;width:1.9px;height:11.2px;background:#1e1e1e;"></div>
<div class="a" style="left:239.8px;top:826px;width:65.8px;height:16px;background:#7b8fd0;"></div>
<div class="a t" style="left:243px;top:828.6px;font-size:9px;line-height:10.8px;color:#1a1f2a;">Operator</div>
<div class="a" style="left:305.6px;top:826px;width:134.4px;height:16px;background:#3a3a3a;"></div>
<div class="a" style="left:307.5px;top:827.5px;width:1.5px;height:13px;background:#262626;"></div>
<div class="a t" style="left:314.3px;top:828.9px;width:32.6px;height:10.2px;background:#262626;color:#e6e6e6;font-size:8.4px;line-height:10.2px;text-align:center;overflow:hidden;white-space:nowrap;"><div style="position:absolute;left:1px;top:1px;bottom:1px;width:18.97px;background:#1d6b80;"></div><span style="position:relative">-10.0 dl</span></div>
<div class="a t" style="left:350.2px;top:828.9px;width:32.6px;height:10.2px;background:#262626;color:#e6e6e6;font-size:8.4px;line-height:10.2px;text-align:center;"><span style="position:relative">C</span></div>
<div class="a" style="left:386.3px;top:828.4px;width:13.4px;height:11.2px;background:#f0902c;outline:1px solid #2a2a2a;"></div>
<div class="a t" style="left:403.6px;top:828.6px;width:13.4px;height:10.8px;background:#363636;outline:1px solid #252525;outline-offset:-1px;color:#d8d8d8;font-size:8.8px;line-height:10.8px;text-align:center;padding-left:0px;box-sizing:border-box;">S</div>
<div class="a" style="left:434.4px;top:826.6px;width:1.9px;height:1px;background:#1e1e1e;"></div>
<div class="a" style="left:437.2px;top:826.6px;width:1.9px;height:1px;background:#1e1e1e;"></div>
<div class="a" style="left:434.4px;top:828.6px;width:1.9px;height:12.2px;background:#1e1e1e;"></div>
<div class="a" style="left:437.2px;top:828.6px;width:1.9px;height:12.2px;background:#1e1e1e;"></div>
<div class="a" style="left:239.8px;top:843px;width:65.8px;height:15px;background:#7b8fd0;"></div>
<div class="a t" style="left:243px;top:845.1px;font-size:9px;line-height:10.8px;color:#1a1f2a;">Operator</div>
<div class="a" style="left:305.6px;top:843px;width:134.4px;height:15px;background:#3a3a3a;"></div>
<div class="a" style="left:307.5px;top:844.5px;width:1.5px;height:12px;background:#262626;"></div>
<div class="a t" style="left:314.3px;top:845.4px;width:32.6px;height:10.2px;background:#262626;color:#e6e6e6;font-size:8.4px;line-height:10.2px;text-align:center;overflow:hidden;white-space:nowrap;"><div style="position:absolute;left:1px;top:1px;bottom:1px;width:26.93px;background:#1d6b80;"></div><span style="position:relative">0.0 dB</span></div>
<div class="a t" style="left:350.2px;top:845.4px;width:32.6px;height:10.2px;background:#262626;color:#e6e6e6;font-size:8.4px;line-height:10.2px;text-align:center;"><div style="position:absolute;left:16.3px;top:1px;bottom:1px;width:9.79px;background:#1d6b80;"></div><span style="position:relative">32R</span></div>
<div class="a" style="left:386.3px;top:844.9px;width:13.4px;height:11.2px;background:#f0902c;outline:1px solid #2a2a2a;"></div>
<div class="a t" style="left:403.6px;top:845.1px;width:13.4px;height:10.8px;background:#363636;outline:1px solid #252525;outline-offset:-1px;color:#d8d8d8;font-size:8.8px;line-height:10.8px;text-align:center;padding-left:0px;box-sizing:border-box;">S</div>
<div class="a" style="left:434.4px;top:843.6px;width:1.9px;height:1px;background:#1e1e1e;"></div>
<div class="a" style="left:437.2px;top:843.6px;width:1.9px;height:1px;background:#1e1e1e;"></div>
<div class="a" style="left:434.4px;top:845.6px;width:1.9px;height:11.2px;background:#1e1e1e;"></div>
<div class="a" style="left:437.2px;top:845.6px;width:1.9px;height:11.2px;background:#1e1e1e;"></div>
<div class="a" style="left:239.8px;top:859px;width:65.8px;height:16px;background:#7b8fd0;"></div>
<div class="a t" style="left:243px;top:861.6px;font-size:9px;line-height:10.8px;color:#1a1f2a;">Operator</div>
<div class="a" style="left:305.6px;top:859px;width:134.4px;height:16px;background:#3a3a3a;"></div>
<div class="a" style="left:307.5px;top:860.5px;width:1.5px;height:13px;background:#262626;"></div>
<div class="a t" style="left:314.3px;top:861.9px;width:32.6px;height:10.2px;background:#262626;color:#e6e6e6;font-size:8.4px;line-height:10.2px;text-align:center;overflow:hidden;white-space:nowrap;"><div style="position:absolute;left:1px;top:1px;bottom:1px;width:26.93px;background:#1d6b80;"></div><span style="position:relative">0.0 dB</span></div>
<div class="a t" style="left:350.2px;top:861.9px;width:32.6px;height:10.2px;background:#262626;color:#e6e6e6;font-size:8.4px;line-height:10.2px;text-align:center;"><div style="position:absolute;right:16.3px;top:1px;bottom:1px;width:10.4px;background:#1d6b80;"></div><span style="position:relative">34L</span></div>
<div class="a" style="left:386.3px;top:861.4px;width:13.4px;height:11.2px;background:#f0902c;outline:1px solid #2a2a2a;"></div>
<div class="a t" style="left:403.6px;top:861.6px;width:13.4px;height:10.8px;background:#363636;outline:1px solid #252525;outline-offset:-1px;color:#d8d8d8;font-size:8.8px;line-height:10.8px;text-align:center;padding-left:0px;box-sizing:border-box;">S</div>
<div class="a" style="left:434.4px;top:859.6px;width:1.9px;height:1px;background:#1e1e1e;"></div>
<div class="a" style="left:437.2px;top:859.6px;width:1.9px;height:1px;background:#1e1e1e;"></div>
<div class="a" style="left:434.4px;top:861.6px;width:1.9px;height:12.2px;background:#1e1e1e;"></div>
<div class="a" style="left:437.2px;top:861.6px;width:1.9px;height:12.2px;background:#1e1e1e;"></div>
<div class="a" style="left:434.4px;top:771.2px;width:1.9px;height:1.2px;background:#2a8a3a;"></div>
<div class="a" style="left:437.2px;top:769.6px;width:1.9px;height:1px;background:#39e050;"></div>
<div class="a" style="left:437.2px;top:772.6px;width:1.9px;height:1px;background:#39e050;"></div>
<div class="a" style="left:434.4px;top:839.2px;width:1.9px;height:1.2px;background:#39e050;"></div>
<div class="a" style="left:437.2px;top:839.2px;width:1.9px;height:1.2px;background:#39e050;"></div>
<div class="a" style="left:434.4px;top:850px;width:1.9px;height:7px;background:#39e050;"></div>
<div class="a" style="left:437.2px;top:847px;width:1.9px;height:10px;background:#39e050;"></div>
<div class="a" style="left:434.4px;top:866px;width:1.9px;height:7.6px;background:#39e050;"></div>
<div class="a" style="left:437.2px;top:869px;width:1.9px;height:4.6px;background:#39e050;"></div>
<div class="a" style="left:450px;top:719px;width:16.4px;height:160.8px;background:#474747;border-radius:3px;overflow:hidden;"><div style="position:absolute;left:0;top:0;right:0;height:15px;background:#555555;"></div></div>
<div class="a t" style="left:416px;top:826px;width:84px;height:12px;font-size:8.6px;line-height:12px;color:#e6e6e6;text-align:center;font-weight:bold;transform:rotate(-90deg);">Texture</div>
<div class="a" style="left:467.6px;top:719px;width:15.1px;height:160.8px;background:#474747;border-top-right-radius:4px;overflow:hidden;"><div style="position:absolute;left:0;top:0;right:0;height:15px;background:#555555;"></div></div>
<div class="a" style="left:485.8px;top:719px;width:308.2px;height:161.8px;background:#474747;border-radius:2px;overflow:hidden;box-sizing:border-box;border:1px solid #525252;"><div style="position:absolute;left:0;top:0;right:0;height:14px;background:#555555;"></div></div>
<div class="a t" style="left:517px;top:721.2px;font-size:9px;line-height:10.8px;color:#f0f0f0;font-weight:bold;">Saturator</div>
<div class="a t" style="left:467.3px;width:80px;text-align:center;top:738.6px;font-size:9px;line-height:10.8px;color:#e4e4e4;">Drive</div>
<div class="a t" style="left:467.3px;width:80px;text-align:center;top:774.92px;font-size:8.8px;line-height:10.56px;color:#e4e4e4;">14.3 dB</div>
<div class="a t" style="left:490px;top:793.5px;width:34.4px;height:10.5px;background:#2c2c2c;outline:1px solid #252525;outline-offset:-1px;color:#e8e8e8;font-size:8.8px;line-height:10.5px;text-align:center;padding-left:0px;box-sizing:border-box;font-weight:bold;">DC</div>
<div class="a t" style="left:490px;top:810px;width:34.4px;height:10.5px;background:#f0902c;outline:1px solid #2a2a2a;outline-offset:-1px;color:#1a1a1a;font-size:8.8px;line-height:10.5px;text-align:center;padding-left:0px;box-sizing:border-box;">Color</div>
<div class="a" style="left:530.3px;top:738px;width:212.1px;height:66px;background:#141414;border-radius:4px;"></div>
<div class="a" style="left:536.3px;top:744px;width:183.5px;height:54px;background:#141414;outline:1px solid #3e3e3e;"></div>
<div class="a" style="left:628.2px;top:744px;width:1px;height:54px;background:#3e3e3e;"></div>
<div class="a" style="left:536.3px;top:771px;width:183.5px;height:1px;background:#3e3e3e;"></div>
<div class="a" style="left:728.6px;top:744px;width:8.4px;height:54px;background:#202020;outline:1px solid #3a3a3a;"></div>
<div class="a" style="left:732.5px;top:744px;width:0.7px;height:54px;background:#3a3a3a;"></div>
<div class="a" style="left:729.2px;top:785px;width:3.2px;height:13px;background:#e8902a;"></div>
<div class="a" style="left:733.3px;top:783px;width:3.2px;height:15px;background:#e8902a;"></div>
<div class="a" style="left:729.2px;top:769.2px;width:3.2px;height:0.8px;background:#e8902a;"></div>
<div class="a" style="left:733.3px;top:764.2px;width:3.2px;height:0.8px;background:#e8902a;"></div>
<div class="a t" style="left:531px;top:809.5px;width:97.6px;height:11.5px;background:#2c2c2c;outline:1px solid #252525;outline-offset:-1px;color:#e8e8e8;font-size:8.8px;line-height:11.5px;text-align:left;padding-left:2.5px;box-sizing:border-box;font-weight:bold;">Hard Curve</div>
<div class="a t" style="left:467.3px;width:80px;text-align:center;top:828.6px;font-size:9px;line-height:10.8px;color:#e4e4e4;">Base</div>
<div class="a t" style="left:467.3px;width:80px;text-align:center;top:864.72px;font-size:8.8px;line-height:10.56px;color:#e4e4e4;">0.00</div>
<div class="a t" style="left:504px;width:80px;text-align:center;top:833.6px;font-size:9px;line-height:10.8px;color:#e4e4e4;">Freq</div>
<div class="a t" style="left:504px;width:80px;text-align:center;top:864.72px;font-size:8.8px;line-height:10.56px;color:#e4e4e4;">1.00 kHz</div>
<div class="a t" style="left:540.4px;width:80px;text-align:center;top:833.6px;font-size:9px;line-height:10.8px;color:#e4e4e4;">Width</div>
<div class="a t" style="left:540.4px;width:80px;text-align:center;top:864.72px;font-size:8.8px;line-height:10.56px;color:#e4e4e4;">30 %</div>
<div class="a t" style="left:577.4px;width:80px;text-align:center;top:828.6px;font-size:9px;line-height:10.8px;color:#e4e4e4;">Depth</div>
<div class="a t" style="left:577.4px;width:80px;text-align:center;top:864.72px;font-size:8.8px;line-height:10.56px;color:#e4e4e4;">0.00</div>
<div class="a t" style="left:639.5px;top:825.6px;font-size:9px;line-height:10.8px;color:#e4e4e4;">Drive</div>
<div class="a t" style="left:638.5px;top:838.5px;width:30.3px;height:10.1px;background:#2a2a2a;outline:1px solid #4e4e4e;outline-offset:-1px;color:#e8e8e8;font-size:8.8px;line-height:10.1px;text-align:center;padding-left:0px;box-sizing:border-box;color:#d8d8d8;">100 %</div>
<div class="a t" style="left:639.5px;top:849.6px;font-size:9px;line-height:10.8px;color:#e4e4e4;">Lin</div>
<div class="a t" style="left:638.5px;top:862.7px;width:30.3px;height:10.1px;background:#2a2a2a;outline:1px solid #4e4e4e;outline-offset:-1px;color:#e8e8e8;font-size:8.8px;line-height:10.1px;text-align:center;padding-left:0px;box-sizing:border-box;color:#d8d8d8;">50.0 %</div>
<div class="a t" style="left:675.3px;top:825.6px;font-size:9px;line-height:10.8px;color:#e4e4e4;">Curve</div>
<div class="a t" style="left:674.3px;top:838.5px;width:30.7px;height:10.1px;background:#2a2a2a;outline:1px solid #4e4e4e;outline-offset:-1px;color:#e8e8e8;font-size:8.8px;line-height:10.1px;text-align:center;padding-left:0px;box-sizing:border-box;color:#d8d8d8;">0.00 %</div>
<div class="a t" style="left:675.3px;top:849.6px;font-size:9px;line-height:10.8px;color:#e4e4e4;">Damp</div>
<div class="a t" style="left:674.3px;top:862.7px;width:30.7px;height:10.1px;background:#2a2a2a;outline:1px solid #4e4e4e;outline-offset:-1px;color:#e8e8e8;font-size:8.8px;line-height:10.1px;text-align:center;padding-left:0px;box-sizing:border-box;color:#d8d8d8;">0.00 %</div>
<div class="a t" style="left:711.5px;top:825.6px;font-size:9px;line-height:10.8px;color:#e4e4e4;">Depth</div>
<div class="a t" style="left:710.5px;top:838.5px;width:30.8px;height:10.1px;background:#2a2a2a;outline:1px solid #4e4e4e;outline-offset:-1px;color:#e8e8e8;font-size:8.8px;line-height:10.1px;text-align:center;padding-left:0px;box-sizing:border-box;color:#d8d8d8;">0.00 %</div>
<div class="a t" style="left:711.5px;top:849.6px;font-size:9px;line-height:10.8px;color:#e4e4e4;">Period</div>
<div class="a t" style="left:710.5px;top:862.7px;width:30.8px;height:10.1px;background:#2a2a2a;outline:1px solid #4e4e4e;outline-offset:-1px;color:#e8e8e8;font-size:8.8px;line-height:10.1px;text-align:center;padding-left:0px;box-sizing:border-box;color:#d8d8d8;">0.00 %</div>
<div class="a" style="left:751px;top:738px;width:1px;height:139px;background:#333333;"></div>
<div class="a t" style="left:730px;width:80px;text-align:center;top:738.6px;font-size:9px;line-height:10.8px;color:#e4e4e4;font-weight:bold;">Output</div>
<div class="a t" style="left:730px;width:80px;text-align:center;top:756.6px;font-size:9px;line-height:10.8px;color:#e4e4e4;font-weight:bold;">Soft Clip</div>
<div class="a t" style="left:758.2px;top:768.4px;width:19.4px;height:9.9px;background:#f0902c;outline:1px solid #252525;outline-offset:-1px;color:#1a1a1a;font-size:8.8px;line-height:9.9px;text-align:center;padding-left:0px;box-sizing:border-box;line-height:11px;">On</div>
<div class="a t" style="left:732px;width:80px;text-align:center;top:787.6px;font-size:9px;line-height:10.8px;color:#e4e4e4;">Output</div>
<div class="a t" style="left:732px;width:80px;text-align:center;top:818.72px;font-size:8.8px;line-height:10.56px;color:#e4e4e4;">-27.7 dB</div>
<div class="a t" style="left:732px;width:80px;text-align:center;top:833.6px;font-size:9px;line-height:10.8px;color:#e4e4e4;">Dry/Wet</div>
<div class="a t" style="left:732px;width:80px;text-align:center;top:864.72px;font-size:8.8px;line-height:10.56px;color:#e4e4e4;">100 %</div>
<div class="a" style="left:795.3px;top:719px;width:320px;height:161.8px;background:#474747;border-radius:2px;overflow:hidden;box-sizing:border-box;border:1px solid #525252;"><div style="position:absolute;left:0;top:0;right:0;height:14px;background:#555555;"></div></div>
<div class="a t" style="left:813px;top:721.2px;font-size:9px;line-height:10.8px;color:#f0f0f0;font-weight:bold;">Delay</div>
<div class="a t" style="left:781.6px;width:80px;text-align:center;top:737.3px;font-size:9px;line-height:10.8px;color:#e4e4e4;font-weight:bold;">Left</div>
<div class="a t" style="left:841.3px;width:80px;text-align:center;top:737.3px;font-size:9px;line-height:10.8px;color:#e4e4e4;font-weight:bold;">Right</div>
<div class="a t" style="left:801.7px;top:749.8px;width:38.8px;height:10px;background:#3ab8e0;outline:1px solid #252525;outline-offset:-1px;color:#102030;font-size:8.8px;line-height:10px;text-align:center;padding-left:0px;box-sizing:border-box;">Time</div>
<div class="a t" style="left:861.5px;top:749.8px;width:39.5px;height:10px;background:#3ab8e0;outline:1px solid #252525;outline-offset:-1px;color:#102030;font-size:8.8px;line-height:10px;text-align:center;padding-left:0px;box-sizing:border-box;">Time</div>
<div class="a t" style="left:781.6px;width:80px;text-align:center;top:793.52px;font-size:8.8px;line-height:10.56px;color:#e4e4e4;">8.15 ms</div>
<div class="a t" style="left:841.3px;width:80px;text-align:center;top:793.52px;font-size:8.8px;line-height:10.56px;color:#e4e4e4;">134 ms</div>
<div class="a" style="left:851px;top:750px;width:1px;height:29px;background:#2e2e2e;"></div>
<div class="a" style="left:851px;top:799px;width:1px;height:30px;background:#2e2e2e;"></div>
<div class="a t" style="left:844px;top:783.7px;width:14.3px;height:10.7px;background:#2e2e2e;outline:1px solid #252525;outline-offset:-1px;color:#e8e8e8;font-size:8px;line-height:10.7px;text-align:center;padding-left:0px;box-sizing:border-box;"></div>
<div class="a t" style="left:801.7px;top:818.5px;width:38.8px;height:10.2px;background:#2c2c2c;outline:1px solid #252525;outline-offset:-1px;color:#e8e8e8;font-size:8.8px;line-height:10.2px;text-align:center;padding-left:0px;box-sizing:border-box;font-weight:bold;">0.0 %&nbsp;&nbsp;&nbsp;</div>
<div class="a t" style="left:861.5px;top:818.5px;width:39.5px;height:10.2px;background:#2c2c2c;outline:1px solid #252525;outline-offset:-1px;color:#e8e8e8;font-size:8.8px;line-height:10.2px;text-align:center;padding-left:0px;box-sizing:border-box;font-weight:bold;">0.0 %&nbsp;&nbsp;&nbsp;</div>
<div class="a t" style="left:811.9px;width:80px;text-align:center;top:834.4px;font-size:9px;line-height:10.8px;color:#e4e4e4;font-weight:bold;">Feedback</div>
<div class="a t" style="left:811.2px;width:80px;text-align:center;top:865.42px;font-size:8.8px;line-height:10.56px;color:#e4e4e4;">60 %</div>
<div class="a" style="left:867px;top:855.3px;width:10px;height:1px;background:#2e2e2e;"></div>
<div class="a t" style="left:881.7px;top:849.8px;width:19.6px;height:12.8px;background:#2c2c2c;outline:1px solid #252525;outline-offset:-1px;color:#e8e8e8;font-size:10px;line-height:12.8px;text-align:center;padding-left:0px;box-sizing:border-box;"><span style="font-size:12px;">&#8734;</span></div>
<div class="a" style="left:906.9px;top:737px;width:149.7px;height:139.5px;background:#141414;border-radius:4px;"></div>
<div class="a" style="left:906.9px;top:737px;width:149.7px;height:77.2px;background:#151515;border-radius:4px;"></div>
<svg class="a" style="left:0;top:0" width="1547" height="885"><rect x="912.23" y="737" width="0.8" height="77.2" fill="#262626"/><rect x="916.12" y="737" width="0.8" height="77.2" fill="#262626"/><rect x="919.48" y="737" width="0.8" height="77.2" fill="#262626"/><rect x="922.45" y="737" width="0.8" height="77.2" fill="#262626"/><rect x="925.1" y="737" width="0.8" height="77.2" fill="#3a3a3a"/><rect x="942.56" y="737" width="0.8" height="77.2" fill="#262626"/><rect x="952.77" y="737" width="0.8" height="77.2" fill="#262626"/><rect x="960.02" y="737" width="0.8" height="77.2" fill="#262626"/><rect x="965.64" y="737" width="0.8" height="77.2" fill="#262626"/><rect x="970.23" y="737" width="0.8" height="77.2" fill="#262626"/><rect x="974.12" y="737" width="0.8" height="77.2" fill="#262626"/><rect x="977.48" y="737" width="0.8" height="77.2" fill="#262626"/><rect x="980.45" y="737" width="0.8" height="77.2" fill="#262626"/><rect x="983.1" y="737" width="0.8" height="77.2" fill="#3a3a3a"/><rect x="1000.56" y="737" width="0.8" height="77.2" fill="#262626"/><rect x="1010.77" y="737" width="0.8" height="77.2" fill="#262626"/><rect x="1018.02" y="737" width="0.8" height="77.2" fill="#262626"/><rect x="1023.64" y="737" width="0.8" height="77.2" fill="#262626"/><rect x="1028.23" y="737" width="0.8" height="77.2" fill="#262626"/><rect x="1032.12" y="737" width="0.8" height="77.2" fill="#262626"/><rect x="1035.48" y="737" width="0.8" height="77.2" fill="#262626"/><rect x="1038.45" y="737" width="0.8" height="77.2" fill="#262626"/><rect x="1041.1" y="737" width="0.8" height="77.2" fill="#3a3a3a"/><rect x="906.9" y="763" width="149.7" height="0.8" fill="#2c2c2c"/><rect x="906.9" y="775.5" width="149.7" height="0.8" fill="#2c2c2c"/><rect x="906.9" y="789" width="149.7" height="0.8" fill="#2c2c2c"/><rect x="906.9" y="801.4" width="149.7" height="0.8" fill="#2c2c2c"/></svg>
<div class="a" style="left:906.9px;top:814.2px;width:149.7px;height:0.8px;background:#2e2e2e;"></div>
<div class="a t" style="left:925px;top:818.4px;font-size:9px;line-height:10.8px;color:#8a8a8a;">Filter</div>
<div class="a t" style="left:951.5px;top:818.4px;font-size:9px;line-height:10.8px;color:#8a8a8a;">1.00 kHz</div>
<div class="a t" style="left:1002.2px;top:818.4px;font-size:9px;line-height:10.8px;color:#8a8a8a;">Width 8.00</div>
<div class="a" style="left:906.9px;top:839.5px;width:48.1px;height:0.8px;background:#333;"></div>
<div class="a" style="left:1006px;top:839.5px;width:50.6px;height:0.8px;background:#333;"></div>
<div class="a t" style="left:941.5px;width:80px;text-align:center;top:834.4px;font-size:9px;line-height:10.8px;color:#8a8a8a;">Modulation</div>
<div class="a t" style="left:896.5px;width:80px;text-align:center;top:846.6px;font-size:9px;line-height:10.8px;color:#8a8a8a;">Rate</div>
<div class="a t" style="left:941px;width:80px;text-align:center;top:846.6px;font-size:9px;line-height:10.8px;color:#8a8a8a;">Filter</div>
<div class="a t" style="left:986px;width:80px;text-align:center;top:846.6px;font-size:9px;line-height:10.8px;color:#8a8a8a;">Time</div>
<div class="a t" style="left:894.5px;width:80px;text-align:center;top:859.6px;font-size:9px;line-height:10.8px;color:#e8902a;">0.24 Hz</div>
<div class="a t" style="left:938.5px;width:80px;text-align:center;top:859.6px;font-size:9px;line-height:10.8px;color:#8a8a8a;">0.0 %</div>
<div class="a t" style="left:982px;width:80px;text-align:center;top:859.6px;font-size:9px;line-height:10.8px;color:#e8902a;">34 %</div>
<div class="a t" style="left:1063px;top:737.3px;font-size:9px;line-height:10.8px;color:#e4e4e4;font-weight:bold;">Mode</div>
<div class="a t" style="left:1062.4px;top:749.8px;width:46.9px;height:10.4px;background:#f0902c;outline:1px solid #252525;outline-offset:-1px;color:#1a1a1a;font-size:8.8px;line-height:10.4px;text-align:center;padding-left:0px;box-sizing:border-box;">Repitch</div>
<div class="a t" style="left:1062.4px;top:763.6px;width:46.9px;height:10.1px;background:#2c2c2c;outline:1px solid #252525;outline-offset:-1px;color:#e8e8e8;font-size:8.8px;line-height:10.1px;text-align:center;padding-left:0px;box-sizing:border-box;font-weight:bold;">Fade</div>
<div class="a t" style="left:1062.4px;top:777.3px;width:46.9px;height:10.2px;background:#2c2c2c;outline:1px solid #252525;outline-offset:-1px;color:#e8e8e8;font-size:8.8px;line-height:10.2px;text-align:center;padding-left:0px;box-sizing:border-box;font-weight:bold;">Jump</div>
<div class="a t" style="left:1062.4px;top:803.5px;width:46.9px;height:11.1px;background:#2c2c2c;outline:1px solid #252525;outline-offset:-1px;color:#e8e8e8;font-size:8.8px;line-height:11.1px;text-align:center;padding-left:0px;box-sizing:border-box;font-weight:bold;">Ping Pong</div>
<div class="a t" style="left:1046.5px;width:80px;text-align:center;top:834.4px;font-size:9px;line-height:10.8px;color:#e4e4e4;font-weight:bold;">Dry/Wet</div>
<div class="a t" style="left:1046px;width:80px;text-align:center;top:865.42px;font-size:8.8px;line-height:10.56px;color:#e4e4e4;">44 %</div>
<div class="a" style="left:1115.8px;top:719px;width:426.2px;height:161.8px;background:#474747;border-radius:2px;overflow:hidden;box-sizing:border-box;border:1px solid #525252;"><div style="position:absolute;left:0;top:0;right:0;height:14px;background:#555555;"></div></div>
<div class="a t" style="left:1133.4px;top:721.2px;font-size:9px;line-height:10.8px;color:#f0f0f0;font-weight:bold;">Reverb</div>
<div class="a t" style="left:1121.9px;top:734.6px;font-size:9px;line-height:10.8px;color:#e4e4e4;font-weight:bold;">Input Processing</div>
<div class="a t" style="left:1123.4px;top:748px;width:31.2px;height:10.2px;background:#2c2c2c;outline:1px solid #252525;outline-offset:-1px;color:#e8e8e8;font-size:8.8px;line-height:10.2px;text-align:center;padding-left:0px;box-sizing:border-box;font-weight:bold;">Lo Cut</div>
<div class="a t" style="left:1159px;top:748px;width:30.7px;height:10.2px;background:#f0902c;outline:1px solid #252525;outline-offset:-1px;color:#1a1a1a;font-size:8.8px;line-height:10.2px;text-align:center;padding-left:0px;box-sizing:border-box;">Hi Cut</div>
<div class="a" style="left:1123px;top:761px;width:68.1px;height:52.6px;background:#151515;border-radius:3px;"></div>
<svg class="a" style="left:0;top:0" width="1547" height="885"><rect x="1126.1" y="761" width="0.8" height="52.6" fill="#262626"/><rect x="1127.88" y="761" width="0.8" height="52.6" fill="#262626"/><rect x="1129.42" y="761" width="0.8" height="52.6" fill="#262626"/><rect x="1130.78" y="761" width="0.8" height="52.6" fill="#262626"/><rect x="1132" y="761" width="0.8" height="52.6" fill="#3a3a3a"/><rect x="1140.01" y="761" width="0.8" height="52.6" fill="#262626"/><rect x="1144.69" y="761" width="0.8" height="52.6" fill="#262626"/><rect x="1148.01" y="761" width="0.8" height="52.6" fill="#262626"/><rect x="1150.59" y="761" width="0.8" height="52.6" fill="#262626"/><rect x="1152.7" y="761" width="0.8" height="52.6" fill="#262626"/><rect x="1154.48" y="761" width="0.8" height="52.6" fill="#262626"/><rect x="1156.02" y="761" width="0.8" height="52.6" fill="#262626"/><rect x="1157.38" y="761" width="0.8" height="52.6" fill="#262626"/><rect x="1158.6" y="761" width="0.8" height="52.6" fill="#3a3a3a"/><rect x="1166.61" y="761" width="0.8" height="52.6" fill="#262626"/><rect x="1171.29" y="761" width="0.8" height="52.6" fill="#262626"/><rect x="1174.61" y="761" width="0.8" height="52.6" fill="#262626"/><rect x="1177.19" y="761" width="0.8" height="52.6" fill="#262626"/><rect x="1179.3" y="761" width="0.8" height="52.6" fill="#262626"/><rect x="1181.08" y="761" width="0.8" height="52.6" fill="#262626"/><rect x="1182.62" y="761" width="0.8" height="52.6" fill="#262626"/><rect x="1183.98" y="761" width="0.8" height="52.6" fill="#262626"/><rect x="1185.2" y="761" width="0.8" height="52.6" fill="#3a3a3a"/><rect x="1123" y="770.5" width="68.1" height="0.8" fill="#2c2c2c"/><rect x="1123" y="779" width="68.1" height="0.8" fill="#2c2c2c"/><rect x="1123" y="787.6" width="68.1" height="0.8" fill="#2c2c2c"/><rect x="1123" y="796.1" width="68.1" height="0.8" fill="#2c2c2c"/><rect x="1123" y="804.6" width="68.1" height="0.8" fill="#2c2c2c"/></svg>
<div class="a t" style="left:1123.3px;top:816.6px;width:38.4px;height:10.5px;background:#262626;outline:1px solid #2c2c2c;color:#e6e6e6;font-size:9px;line-height:10.5px;text-align:center;"><div style="position:absolute;left:1px;top:1px;bottom:1px;width:17.84px;background:#1d6b80;"></div><span style="position:relative">830 Hz</span></div>
<div class="a t" style="left:1165.9px;top:816.6px;width:25.1px;height:10.5px;background:#262626;outline:1px solid #2c2c2c;color:#e6e6e6;font-size:9px;line-height:10.5px;text-align:center;"><div style="position:absolute;left:1px;top:1px;bottom:1px;width:14.78px;background:#1d6b80;"></div><span style="position:relative">5.85</span></div>
<div class="a t" style="left:1201.8px;top:734.6px;font-size:9px;line-height:10.8px;color:#e4e4e4;font-weight:bold;">Early Reflections</div>
<div class="a t" style="left:1203.6px;top:748px;width:38px;height:10.2px;background:#f0902c;outline:1px solid #252525;outline-offset:-1px;color:#1a1a1a;font-size:8.8px;line-height:10.2px;text-align:center;padding-left:0px;box-sizing:border-box;">Spin</div>
<div class="a" style="left:1203.2px;top:761px;width:67.6px;height:52.6px;background:#151515;border-radius:3px;"></div>
<svg class="a" style="left:0;top:0" width="1547" height="885"><rect x="1205.91" y="761" width="0.8" height="52.6" fill="#262626"/><rect x="1208.85" y="761" width="0.8" height="52.6" fill="#262626"/><rect x="1211.13" y="761" width="0.8" height="52.6" fill="#262626"/><rect x="1212.99" y="761" width="0.8" height="52.6" fill="#262626"/><rect x="1214.56" y="761" width="0.8" height="52.6" fill="#262626"/><rect x="1215.92" y="761" width="0.8" height="52.6" fill="#262626"/><rect x="1217.12" y="761" width="0.8" height="52.6" fill="#262626"/><rect x="1218.2" y="761" width="0.8" height="52.6" fill="#3a3a3a"/><rect x="1225.27" y="761" width="0.8" height="52.6" fill="#262626"/><rect x="1229.41" y="761" width="0.8" height="52.6" fill="#262626"/><rect x="1232.35" y="761" width="0.8" height="52.6" fill="#262626"/><rect x="1234.63" y="761" width="0.8" height="52.6" fill="#262626"/><rect x="1236.49" y="761" width="0.8" height="52.6" fill="#262626"/><rect x="1238.06" y="761" width="0.8" height="52.6" fill="#262626"/><rect x="1239.42" y="761" width="0.8" height="52.6" fill="#262626"/><rect x="1240.62" y="761" width="0.8" height="52.6" fill="#262626"/><rect x="1241.7" y="761" width="0.8" height="52.6" fill="#3a3a3a"/><rect x="1248.77" y="761" width="0.8" height="52.6" fill="#262626"/><rect x="1252.91" y="761" width="0.8" height="52.6" fill="#262626"/><rect x="1255.85" y="761" width="0.8" height="52.6" fill="#262626"/><rect x="1258.13" y="761" width="0.8" height="52.6" fill="#262626"/><rect x="1259.99" y="761" width="0.8" height="52.6" fill="#262626"/><rect x="1261.56" y="761" width="0.8" height="52.6" fill="#262626"/><rect x="1262.92" y="761" width="0.8" height="52.6" fill="#262626"/><rect x="1264.12" y="761" width="0.8" height="52.6" fill="#262626"/><rect x="1265.2" y="761" width="0.8" height="52.6" fill="#3a3a3a"/></svg>
<div class="a t" style="left:1203.5px;top:816.6px;width:38px;height:10.5px;background:#262626;outline:1px solid #2c2c2c;color:#e6e6e6;font-size:9px;line-height:10.5px;text-align:center;"><div style="position:absolute;left:1px;top:1px;bottom:1px;width:17.28px;background:#1d6b80;"></div><span style="position:relative">0.30 Hz</span></div>
<div class="a t" style="left:1245.8px;top:816.6px;width:25px;height:10.5px;background:#262626;outline:1px solid #2c2c2c;color:#e6e6e6;font-size:9px;line-height:10.5px;text-align:center;"><div style="position:absolute;left:1px;top:1px;bottom:1px;width:14.72px;background:#1d6b80;"></div><span style="position:relative">17.5</span></div>
<div class="a t" style="left:1281.6px;top:734.6px;font-size:9px;line-height:10.8px;color:#e4e4e4;font-weight:bold;">Global</div>
<div class="a t" style="left:1281.6px;top:746.6px;font-size:9px;line-height:10.8px;color:#e4e4e4;font-weight:bold;">Quality</div>
<div class="a t" style="left:1281px;top:760.7px;width:35.5px;height:11px;background:#2c2c2c;outline:1px solid #252525;outline-offset:-1px;color:#e8e8e8;font-size:8.8px;line-height:11px;text-align:left;padding-left:2.6px;box-sizing:border-box;font-weight:bold;">High</div>
<div class="a t" style="left:1259.2px;width:80px;text-align:center;top:782.6px;font-size:9px;line-height:10.8px;color:#e4e4e4;font-weight:bold;">Size</div>
<div class="a t" style="left:1259.2px;width:80px;text-align:center;top:814.72px;font-size:8.8px;line-height:10.56px;color:#e4e4e4;">100.00</div>
<div class="a t" style="left:1104.6px;width:80px;text-align:center;top:836.4px;font-size:9px;line-height:10.8px;color:#e4e4e4;font-weight:bold;">Predelay</div>
<div class="a t" style="left:1104px;width:80px;text-align:center;top:867.72px;font-size:8.8px;line-height:10.56px;color:#e4e4e4;">2.50 ms</div>
<div class="a t" style="left:1174.3px;width:80px;text-align:center;top:836.4px;font-size:9px;line-height:10.8px;color:#e4e4e4;font-weight:bold;">Shape</div>
<div class="a t" style="left:1174.3px;width:80px;text-align:center;top:867.72px;font-size:8.8px;line-height:10.56px;color:#e4e4e4;">0.50</div>
<div class="a t" style="left:1259.2px;width:80px;text-align:center;top:836.4px;font-size:9px;line-height:10.8px;color:#e4e4e4;font-weight:bold;">Stereo</div>
<div class="a t" style="left:1259.2px;width:80px;text-align:center;top:867.72px;font-size:8.8px;line-height:10.56px;color:#e4e4e4;">100.00</div>
<div class="a t" style="left:1325.8px;top:734.6px;font-size:9px;line-height:10.8px;color:#e4e4e4;font-weight:bold;">Diffusion Network</div>
<div class="a t" style="left:1325.8px;top:748px;width:23.4px;height:10.2px;background:#f0902c;outline:1px solid #252525;outline-offset:-1px;color:#1a1a1a;font-size:8.8px;line-height:10.2px;text-align:center;padding-left:0px;box-sizing:border-box;">High</div>
<div class="a t" style="left:1354.2px;top:748px;width:37.8px;height:10.2px;background:#262626;outline:1px solid #2c2c2c;color:#e6e6e6;font-size:9px;line-height:10.2px;text-align:center;"><div style="position:absolute;left:1px;top:1px;bottom:1px;width:28.64px;background:#1d6b80;"></div><span style="position:relative">4.50 kHz</span></div>
<div class="a t" style="left:1397.2px;top:748px;width:23.6px;height:10.2px;background:#262626;outline:1px solid #2c2c2c;color:#e6e6e6;font-size:9px;line-height:10.2px;text-align:center;"><div style="position:absolute;left:1px;top:1px;bottom:1px;width:10.8px;background:#1d6b80;"></div><span style="position:relative">0.70</span></div>
<div class="a t" style="left:1425.2px;top:748px;width:38.5px;height:10.2px;background:#f0902c;outline:1px solid #252525;outline-offset:-1px;color:#1a1a1a;font-size:8.8px;line-height:10.2px;text-align:center;padding-left:0px;box-sizing:border-box;">Chorus</div>
<div class="a" style="left:1325.2px;top:761.2px;width:95.8px;height:52.5px;background:#151515;border-radius:3px;"></div>
<svg class="a" style="left:0;top:0" width="1547" height="885"><rect x="1331.35" y="761.2" width="0.8" height="52.5" fill="#262626"/><rect x="1335.47" y="761.2" width="0.8" height="52.5" fill="#262626"/><rect x="1338.67" y="761.2" width="0.8" height="52.5" fill="#262626"/><rect x="1341.28" y="761.2" width="0.8" height="52.5" fill="#262626"/><rect x="1343.49" y="761.2" width="0.8" height="52.5" fill="#262626"/><rect x="1345.4" y="761.2" width="0.8" height="52.5" fill="#262626"/><rect x="1347.09" y="761.2" width="0.8" height="52.5" fill="#262626"/><rect x="1348.6" y="761.2" width="0.8" height="52.5" fill="#3a3a3a"/><rect x="1358.53" y="761.2" width="0.8" height="52.5" fill="#262626"/><rect x="1364.35" y="761.2" width="0.8" height="52.5" fill="#262626"/><rect x="1368.47" y="761.2" width="0.8" height="52.5" fill="#262626"/><rect x="1371.67" y="761.2" width="0.8" height="52.5" fill="#262626"/><rect x="1374.28" y="761.2" width="0.8" height="52.5" fill="#262626"/><rect x="1376.49" y="761.2" width="0.8" height="52.5" fill="#262626"/><rect x="1378.4" y="761.2" width="0.8" height="52.5" fill="#262626"/><rect x="1380.09" y="761.2" width="0.8" height="52.5" fill="#262626"/><rect x="1381.6" y="761.2" width="0.8" height="52.5" fill="#3a3a3a"/><rect x="1391.53" y="761.2" width="0.8" height="52.5" fill="#262626"/><rect x="1397.35" y="761.2" width="0.8" height="52.5" fill="#262626"/><rect x="1401.47" y="761.2" width="0.8" height="52.5" fill="#262626"/><rect x="1404.67" y="761.2" width="0.8" height="52.5" fill="#262626"/><rect x="1407.28" y="761.2" width="0.8" height="52.5" fill="#262626"/><rect x="1409.49" y="761.2" width="0.8" height="52.5" fill="#262626"/><rect x="1411.4" y="761.2" width="0.8" height="52.5" fill="#262626"/><rect x="1413.09" y="761.2" width="0.8" height="52.5" fill="#262626"/><rect x="1414.6" y="761.2" width="0.8" height="52.5" fill="#3a3a3a"/><rect x="1325.2" y="774.4" width="95.8" height="0.8" fill="#2c2c2c"/><rect x="1325.2" y="790.8" width="95.8" height="0.8" fill="#2c2c2c"/><rect x="1325.2" y="806.6" width="95.8" height="0.8" fill="#2c2c2c"/></svg>
<div class="a t" style="left:1393.9px;width:10px;text-align:center;top:778.1px;font-size:7px;line-height:8.4px;color:#f0902c;">2</div>
<div class="a" style="left:1425.2px;top:761.2px;width:67.6px;height:52.5px;background:#151515;border-radius:3px;"></div>
<svg class="a" style="left:0;top:0" width="1547" height="885"><rect x="1428.83" y="761.2" width="0.8" height="52.5" fill="#262626"/><rect x="1431.18" y="761.2" width="0.8" height="52.5" fill="#262626"/><rect x="1433.11" y="761.2" width="0.8" height="52.5" fill="#262626"/><rect x="1434.74" y="761.2" width="0.8" height="52.5" fill="#262626"/><rect x="1436.15" y="761.2" width="0.8" height="52.5" fill="#262626"/><rect x="1437.39" y="761.2" width="0.8" height="52.5" fill="#262626"/><rect x="1438.5" y="761.2" width="0.8" height="52.5" fill="#3a3a3a"/><rect x="1445.82" y="761.2" width="0.8" height="52.5" fill="#262626"/><rect x="1450.09" y="761.2" width="0.8" height="52.5" fill="#262626"/><rect x="1453.13" y="761.2" width="0.8" height="52.5" fill="#262626"/><rect x="1455.48" y="761.2" width="0.8" height="52.5" fill="#262626"/><rect x="1457.41" y="761.2" width="0.8" height="52.5" fill="#262626"/><rect x="1459.04" y="761.2" width="0.8" height="52.5" fill="#262626"/><rect x="1460.45" y="761.2" width="0.8" height="52.5" fill="#262626"/><rect x="1461.69" y="761.2" width="0.8" height="52.5" fill="#262626"/><rect x="1462.8" y="761.2" width="0.8" height="52.5" fill="#3a3a3a"/><rect x="1470.12" y="761.2" width="0.8" height="52.5" fill="#262626"/><rect x="1474.39" y="761.2" width="0.8" height="52.5" fill="#262626"/><rect x="1477.43" y="761.2" width="0.8" height="52.5" fill="#262626"/><rect x="1479.78" y="761.2" width="0.8" height="52.5" fill="#262626"/><rect x="1481.71" y="761.2" width="0.8" height="52.5" fill="#262626"/><rect x="1483.34" y="761.2" width="0.8" height="52.5" fill="#262626"/><rect x="1484.75" y="761.2" width="0.8" height="52.5" fill="#262626"/><rect x="1485.99" y="761.2" width="0.8" height="52.5" fill="#262626"/><rect x="1487.1" y="761.2" width="0.8" height="52.5" fill="#3a3a3a"/></svg>
<div class="a t" style="left:1325.4px;top:816.6px;width:23.7px;height:10.6px;background:#2c2c2c;outline:1px solid #252525;outline-offset:-1px;color:#e8e8e8;font-size:8.8px;line-height:10.6px;text-align:center;padding-left:0px;box-sizing:border-box;font-weight:bold;">Low</div>
<div class="a t" style="left:1354.2px;top:816.6px;width:37.4px;height:10.6px;background:#3c3c3c;outline:1px solid #252525;outline-offset:-1px;color:#c0c0c0;font-size:8.8px;line-height:10.6px;text-align:center;padding-left:0px;box-sizing:border-box;">90.0 Hz</div>
<div class="a t" style="left:1397.2px;top:816.6px;width:23.2px;height:10.6px;background:#3c3c3c;outline:1px solid #252525;outline-offset:-1px;color:#c0c0c0;font-size:8.8px;line-height:10.6px;text-align:center;padding-left:0px;box-sizing:border-box;">0.75</div>
<div class="a t" style="left:1425.2px;top:816.6px;width:38.2px;height:10.6px;background:#262626;outline:1px solid #2c2c2c;color:#e6e6e6;font-size:9px;line-height:10.6px;text-align:center;"><div style="position:absolute;left:1px;top:1px;bottom:1px;width:1.81px;background:#1d6b80;"></div><span style="position:relative">0.02 Hz</span></div>
<div class="a t" style="left:1467.4px;top:816.6px;width:25.2px;height:10.6px;background:#262626;outline:1px solid #2c2c2c;color:#e6e6e6;font-size:9px;line-height:10.6px;text-align:center;"><div style="position:absolute;left:1px;top:1px;bottom:1px;width:1.62px;background:#1d6b80;"></div><span style="position:relative">0.02</span></div>
<div class="a t" style="left:1325.8px;top:835.8px;font-size:9px;line-height:10.8px;color:#e4e4e4;font-weight:bold;">Decay Time</div>
<div class="a t" style="left:1308.8px;width:80px;text-align:center;top:867.72px;font-size:8.8px;line-height:10.56px;color:#e4e4e4;">4.24 s</div>
<div class="a t" style="left:1382.4px;top:836.4px;width:39px;height:10.6px;background:#2c2c2c;outline:1px solid #252525;outline-offset:-1px;color:#e8e8e8;font-size:8.8px;line-height:10.6px;text-align:center;padding-left:0px;box-sizing:border-box;font-weight:bold;">Freeze</div>
<div class="a t" style="left:1382.4px;top:851.4px;width:17.3px;height:9.9px;background:#f0902c;outline:1px solid #252525;outline-offset:-1px;color:#1a1a1a;font-size:8.2px;line-height:9.9px;text-align:center;padding-left:0px;box-sizing:border-box;">Flat</div>
<div class="a t" style="left:1403.5px;top:851.4px;width:17.9px;height:9.9px;background:#f0902c;outline:1px solid #252525;outline-offset:-1px;color:#1a1a1a;font-size:8.2px;line-height:9.9px;text-align:center;padding-left:0px;box-sizing:border-box;">Cut</div>
<div class="a t" style="left:1403px;width:80px;text-align:center;top:835.8px;font-size:9px;line-height:10.8px;color:#e4e4e4;font-weight:bold;">Density</div>
<div class="a t" style="left:1403px;width:80px;text-align:center;top:867.72px;font-size:8.8px;line-height:10.56px;color:#e4e4e4;">60 %</div>
<div class="a t" style="left:1437.9px;width:80px;text-align:center;top:835.8px;font-size:9px;line-height:10.8px;color:#e4e4e4;font-weight:bold;">Scale</div>
<div class="a t" style="left:1438px;width:80px;text-align:center;top:867.72px;font-size:8.8px;line-height:10.56px;color:#e4e4e4;">40 %</div>
<div class="a t" style="left:1479.7px;width:80px;text-align:center;top:734.6px;font-size:9px;line-height:10.8px;color:#e4e4e4;font-weight:bold;">Reflect</div>
<div class="a t" style="left:1479.7px;width:80px;text-align:center;top:766.72px;font-size:8.8px;line-height:10.56px;color:#e4e4e4;">0.0 dB</div>
<div class="a t" style="left:1479.7px;width:80px;text-align:center;top:785.5px;font-size:9px;line-height:10.8px;color:#e4e4e4;font-weight:bold;">Diffuse</div>
<div class="a t" style="left:1479.7px;width:80px;text-align:center;top:817.72px;font-size:8.8px;line-height:10.56px;color:#e4e4e4;">0.0 dB</div>
<div class="a t" style="left:1479.7px;width:80px;text-align:center;top:835.8px;font-size:9px;line-height:10.8px;color:#e4e4e4;font-weight:bold;">Dry/Wet</div>
<div class="a t" style="left:1479.7px;width:80px;text-align:center;top:867.72px;font-size:8.8px;line-height:10.56px;color:#e4e4e4;">55 %</div>
<div class="a" style="left:1544.9px;top:719px;width:3px;height:160.8px;background:#3e3e3e;border-top-left-radius:3px;"></div>
<svg width="1547" height="885" viewBox="0 0 1547 885"><circle cx="1393" cy="21" r="5" fill="none" stroke="#2a3440" stroke-width="0.9"/><path d="M1391.5 18.3L1395.7 21L1391.5 23.7Z" fill="#2a3440"/><rect x="1321.09" y="44.9" width="80.5" height="1" fill="#3a3a3a"/><rect x="1321.09" y="60.36" width="80.5" height="1" fill="#3a3a3a"/><rect x="1321.09" y="75.83" width="80.5" height="1" fill="#3a3a3a"/><rect x="1321.09" y="91.3" width="80.5" height="1" fill="#3a3a3a"/><rect x="1321.09" y="106.77" width="80.5" height="1" fill="#3a3a3a"/><rect x="1321.09" y="122.23" width="80.5" height="1" fill="#3a3a3a"/><rect x="1321.09" y="137.7" width="80.5" height="1" fill="#3a3a3a"/><rect x="1321.09" y="153.17" width="80.5" height="1" fill="#3a3a3a"/><rect x="1321.09" y="168.63" width="80.5" height="1" fill="#3a3a3a"/><rect x="1321.09" y="184.1" width="80.5" height="1" fill="#3a3a3a"/><rect x="1321.09" y="199.57" width="80.5" height="1" fill="#3a3a3a"/><rect x="1321.09" y="215.03" width="80.5" height="1" fill="#3a3a3a"/><rect x="1321.09" y="230.5" width="80.5" height="1" fill="#3a3a3a"/><rect x="1321.09" y="245.97" width="80.5" height="1" fill="#3a3a3a"/><rect x="1321.09" y="261.44" width="80.5" height="1" fill="#3a3a3a"/><rect x="1321.09" y="276.9" width="80.5" height="1" fill="#3a3a3a"/><rect x="1321.09" y="292.37" width="80.5" height="1" fill="#3a3a3a"/><rect x="1321.09" y="307.84" width="80.5" height="1" fill="#3a3a3a"/><rect x="1321.09" y="323.3" width="80.5" height="1" fill="#3a3a3a"/><rect x="1321.09" y="338.77" width="80.5" height="1" fill="#3a3a3a"/><rect x="1321.09" y="354.24" width="80.5" height="1" fill="#3a3a3a"/><rect x="1321.09" y="369.7" width="80.5" height="1" fill="#3a3a3a"/><rect x="1321.09" y="385.17" width="80.5" height="1" fill="#3a3a3a"/><rect x="1321.09" y="400.64" width="80.5" height="1" fill="#3a3a3a"/><rect x="1321.09" y="416.11" width="80.5" height="1" fill="#3a3a3a"/><rect x="1321.09" y="431.57" width="80.5" height="1" fill="#3a3a3a"/><rect x="1321.09" y="447.04" width="80.5" height="1" fill="#3a3a3a"/><rect x="1321.09" y="462.51" width="80.5" height="1" fill="#3a3a3a"/><rect x="1321.09" y="477.97" width="80.5" height="1" fill="#3a3a3a"/><rect x="1321.09" y="493.44" width="80.5" height="1" fill="#3a3a3a"/><rect x="1321.09" y="508.91" width="80.5" height="1" fill="#3a3a3a"/><rect x="1321.09" y="524.37" width="80.5" height="1" fill="#3a3a3a"/><rect x="1321.09" y="539.84" width="80.5" height="1" fill="#3a3a3a"/><rect x="1321.09" y="555.31" width="80.5" height="1" fill="#3a3a3a"/><rect x="1325.29" y="34.43" width="7.2" height="7.3" fill="#262626"/><rect x="1325.29" y="49.9" width="7.2" height="7.3" fill="#262626"/><rect x="1325.29" y="65.36" width="7.2" height="7.3" fill="#262626"/><rect x="1325.29" y="80.83" width="7.2" height="7.3" fill="#262626"/><rect x="1325.29" y="96.3" width="7.2" height="7.3" fill="#262626"/><rect x="1325.29" y="111.77" width="7.2" height="7.3" fill="#262626"/><rect x="1325.29" y="127.23" width="7.2" height="7.3" fill="#262626"/><rect x="1325.29" y="142.7" width="7.2" height="7.3" fill="#262626"/><rect x="1325.29" y="158.17" width="7.2" height="7.3" fill="#262626"/><rect x="1325.29" y="173.63" width="7.2" height="7.3" fill="#262626"/><rect x="1325.29" y="189.1" width="7.2" height="7.3" fill="#262626"/><rect x="1325.29" y="204.57" width="7.2" height="7.3" fill="#262626"/><rect x="1325.29" y="220.03" width="7.2" height="7.3" fill="#262626"/><rect x="1325.29" y="235.5" width="7.2" height="7.3" fill="#262626"/><rect x="1325.29" y="250.97" width="7.2" height="7.3" fill="#262626"/><rect x="1325.29" y="266.44" width="7.2" height="7.3" fill="#262626"/><rect x="1325.29" y="281.9" width="7.2" height="7.3" fill="#262626"/><rect x="1325.29" y="297.37" width="7.2" height="7.3" fill="#262626"/><rect x="1325.29" y="312.84" width="7.2" height="7.3" fill="#262626"/><rect x="1325.29" y="328.3" width="7.2" height="7.3" fill="#262626"/><rect x="1325.29" y="343.77" width="7.2" height="7.3" fill="#262626"/><rect x="1325.29" y="359.24" width="7.2" height="7.3" fill="#262626"/><rect x="1325.29" y="374.7" width="7.2" height="7.3" fill="#262626"/><rect x="1325.29" y="390.17" width="7.2" height="7.3" fill="#262626"/><rect x="1325.29" y="421.11" width="7.2" height="7.3" fill="#262626"/><rect x="1325.29" y="436.57" width="7.2" height="7.3" fill="#262626"/><rect x="1325.29" y="452.04" width="7.2" height="7.3" fill="#262626"/><rect x="1325.29" y="467.51" width="7.2" height="7.3" fill="#262626"/><rect x="1325.29" y="482.97" width="7.2" height="7.3" fill="#262626"/><rect x="1325.29" y="498.44" width="7.2" height="7.3" fill="#262626"/><rect x="1325.29" y="513.91" width="7.2" height="7.3" fill="#262626"/><rect x="1325.29" y="529.37" width="7.2" height="7.3" fill="#262626"/><rect x="1325.29" y="544.84" width="7.2" height="7.3" fill="#262626"/><rect x="1321.59" y="402.14" width="79.11" height="13.47" fill="#7a9dbd" stroke="#8fd0e8" stroke-width="1"/><rect x="1322.09" y="402.64" width="13.3" height="12.47" fill="#121212"/><path d="M1324.59 405.54L1331.49 409.19L1324.59 412.84Z" fill="#30e060"/><circle cx="1442" cy="21" r="5" fill="none" stroke="#2a3440" stroke-width="0.9"/><path d="M1440.5 18.3L1444.7 21L1440.5 23.7Z" fill="#2a3440"/><circle cx="61.1" cy="565.8" r="5.4" fill="#7b8cc8"/><path d="M61.1 565.8L61.1 560.4A5.4 5.4 0 0 1 66.5 565.8Z" fill="#3d4566"/><circle cx="61.1" cy="565.8" r="5.4" fill="none" stroke="#24252e" stroke-width="0.9"/><path d="M32.66 638.86A10.45 10.45 0 0 1 36.12 620.16M41.18 620.16A10.45 10.45 0 0 1 44.64 638.86" stroke="#1b1b1b" stroke-width="1.7" fill="none"/><line x1="38.65" y1="630.5" x2="38.65" y2="619" stroke="#1b1b1b" stroke-width="1.5" stroke-linecap="round"/><path d="M35.55 614L41.75 614L38.65 617.9Z" fill="#1b1b1b"/><circle cx="38.65" cy="687.6" r="3" fill="#f2f2f2"/><path d="M77.7 605L71.2 608.8L77.7 612.6Z" fill="none" stroke="#1e1e1e" stroke-width="1.1"/><circle cx="142.79" cy="565.8" r="5.4" fill="#7b8cc8"/><path d="M142.79 565.8L142.79 560.4A5.4 5.4 0 0 1 148.19 565.8Z" fill="#3d4566"/><circle cx="142.79" cy="565.8" r="5.4" fill="none" stroke="#24252e" stroke-width="0.9"/><path d="M114.34 638.86A10.45 10.45 0 0 1 117.81 620.16M122.87 620.16A10.45 10.45 0 0 1 126.33 638.86" stroke="#1b1b1b" stroke-width="1.7" fill="none"/><line x1="120.34" y1="630.5" x2="120.34" y2="619" stroke="#1b1b1b" stroke-width="1.5" stroke-linecap="round"/><path d="M117.24 614L123.44 614L120.34 617.9Z" fill="#1b1b1b"/><circle cx="120.34" cy="687.6" r="3" fill="#f2f2f2"/><path d="M159.39 598.8L152.89 602.6L159.39 606.4Z" fill="none" stroke="#1e1e1e" stroke-width="1.1"/><circle cx="224.47" cy="565.8" r="5.4" fill="#7b8cc8"/><path d="M224.47 565.8L224.47 560.4A5.4 5.4 0 0 1 229.87 565.8Z" fill="#3d4566"/><circle cx="224.47" cy="565.8" r="5.4" fill="none" stroke="#24252e" stroke-width="0.9"/><path d="M196.03 638.86A10.45 10.45 0 0 1 199.5 620.16M204.55 620.16A10.45 10.45 0 0 1 208.02 638.86" stroke="#1b1b1b" stroke-width="1.7" fill="none"/><line x1="202.02" y1="630.5" x2="202.02" y2="619" stroke="#1b1b1b" stroke-width="1.5" stroke-linecap="round"/><path d="M198.92 614L205.12 614L202.02 617.9Z" fill="#1b1b1b"/><circle cx="202.02" cy="687.6" r="3" fill="#f2f2f2"/><path d="M241.07 602.5L234.57 606.3L241.07 610.1Z" fill="none" stroke="#1e1e1e" stroke-width="1.1"/><circle cx="306.16" cy="565.8" r="5.4" fill="#7b8cc8"/><path d="M306.16 565.8L306.16 560.4A5.4 5.4 0 0 1 311.56 565.8Z" fill="#3d4566"/><circle cx="306.16" cy="565.8" r="5.4" fill="none" stroke="#24252e" stroke-width="0.9"/><path d="M277.72 638.86A10.45 10.45 0 0 1 281.18 620.16M286.24 620.16A10.45 10.45 0 0 1 289.7 638.86" stroke="#1b1b1b" stroke-width="1.7" fill="none"/><line x1="283.71" y1="630.5" x2="283.71" y2="619" stroke="#1b1b1b" stroke-width="1.5" stroke-linecap="round"/><path d="M280.61 614L286.81 614L283.71 617.9Z" fill="#1b1b1b"/><circle cx="283.71" cy="687.6" r="3" fill="#f2f2f2"/><path d="M322.76 602.5L316.26 606.3L322.76 610.1Z" fill="none" stroke="#1e1e1e" stroke-width="1.1"/><circle cx="387.85" cy="565.8" r="5.4" fill="#7b8cc8"/><path d="M387.85 565.8L387.85 560.4A5.4 5.4 0 0 1 393.25 565.8Z" fill="#3d4566"/><circle cx="387.85" cy="565.8" r="5.4" fill="none" stroke="#24252e" stroke-width="0.9"/><path d="M359.4 638.86A10.45 10.45 0 0 1 362.87 620.16M367.93 620.16A10.45 10.45 0 0 1 371.39 638.86" stroke="#1b1b1b" stroke-width="1.7" fill="none"/><line x1="365.4" y1="630.5" x2="365.4" y2="619" stroke="#1b1b1b" stroke-width="1.5" stroke-linecap="round"/><path d="M362.3 614L368.5 614L365.4 617.9Z" fill="#1b1b1b"/><circle cx="365.4" cy="687.6" r="3" fill="#f2f2f2"/><path d="M404.45 602.5L397.95 606.3L404.45 610.1Z" fill="none" stroke="#1e1e1e" stroke-width="1.1"/><circle cx="469.54" cy="565.8" r="5.4" fill="#7b8cc8"/><path d="M469.54 565.8L469.54 560.4A5.4 5.4 0 0 1 474.94 565.8Z" fill="#3d4566"/><circle cx="469.54" cy="565.8" r="5.4" fill="none" stroke="#24252e" stroke-width="0.9"/><path d="M441.09 638.86A10.45 10.45 0 0 1 444.56 620.16M449.61 620.16A10.45 10.45 0 0 1 453.08 638.86" stroke="#1b1b1b" stroke-width="1.7" fill="none"/><line x1="447.09" y1="630.5" x2="447.09" y2="619" stroke="#1b1b1b" stroke-width="1.5" stroke-linecap="round"/><path d="M443.99 614L450.19 614L447.09 617.9Z" fill="#1b1b1b"/><circle cx="447.09" cy="687.6" r="3" fill="#f2f2f2"/><path d="M486.14 611.2L479.64 615L486.14 618.8Z" fill="none" stroke="#1e1e1e" stroke-width="1.1"/><circle cx="551.22" cy="565.8" r="5.4" fill="#7b8cc8"/><path d="M551.22 565.8L551.22 560.4A5.4 5.4 0 0 1 556.62 565.8Z" fill="#3d4566"/><circle cx="551.22" cy="565.8" r="5.4" fill="none" stroke="#24252e" stroke-width="0.9"/><path d="M522.78 638.86A10.45 10.45 0 0 1 526.24 620.16M531.3 620.16A10.45 10.45 0 0 1 534.77 638.86" stroke="#1b1b1b" stroke-width="1.7" fill="none"/><line x1="528.77" y1="630.5" x2="528.77" y2="619" stroke="#1b1b1b" stroke-width="1.5" stroke-linecap="round"/><path d="M525.67 614L531.87 614L528.77 617.9Z" fill="#1b1b1b"/><circle cx="528.77" cy="687.6" r="3" fill="#f2f2f2"/><path d="M567.82 608.8L561.32 612.6L567.82 616.4Z" fill="none" stroke="#1e1e1e" stroke-width="1.1"/><circle cx="632.91" cy="565.8" r="5.4" fill="#7b8cc8"/><path d="M632.91 565.8L632.91 560.4A5.4 5.4 0 0 1 638.31 565.8Z" fill="#3d4566"/><circle cx="632.91" cy="565.8" r="5.4" fill="none" stroke="#24252e" stroke-width="0.9"/><path d="M604.47 638.86A10.45 10.45 0 0 1 607.93 620.16M612.99 620.16A10.45 10.45 0 0 1 616.45 638.86" stroke="#1b1b1b" stroke-width="1.7" fill="none"/><line x1="610.46" y1="630.5" x2="610.46" y2="619" stroke="#1b1b1b" stroke-width="1.5" stroke-linecap="round"/><path d="M607.36 614L613.56 614L610.46 617.9Z" fill="#1b1b1b"/><circle cx="610.46" cy="687.6" r="3" fill="#f2f2f2"/><path d="M649.51 602.2L643.01 606L649.51 609.8Z" fill="none" stroke="#1e1e1e" stroke-width="1.1"/><circle cx="714.6" cy="565.8" r="5.4" fill="#7b8cc8"/><path d="M714.6 565.8L714.6 560.4A5.4 5.4 0 0 1 720 565.8Z" fill="#3d4566"/><circle cx="714.6" cy="565.8" r="5.4" fill="none" stroke="#24252e" stroke-width="0.9"/><path d="M686.15 638.86A10.45 10.45 0 0 1 689.62 620.16M694.67 620.16A10.45 10.45 0 0 1 698.14 638.86" stroke="#1b1b1b" stroke-width="1.7" fill="none"/><line x1="692.15" y1="630.5" x2="692.15" y2="619" stroke="#1b1b1b" stroke-width="1.5" stroke-linecap="round"/><path d="M689.05 614L695.25 614L692.15 617.9Z" fill="#1b1b1b"/><circle cx="692.15" cy="687.6" r="3" fill="#f2f2f2"/><path d="M731.2 602.2L724.7 606L731.2 609.8Z" fill="none" stroke="#1e1e1e" stroke-width="1.1"/><circle cx="796.28" cy="565.8" r="5.4" fill="#7b8cc8"/><path d="M796.28 565.8L796.28 560.4A5.4 5.4 0 0 1 801.68 565.8Z" fill="#3d4566"/><circle cx="796.28" cy="565.8" r="5.4" fill="none" stroke="#24252e" stroke-width="0.9"/><path d="M767.84 638.86A10.45 10.45 0 0 1 771.3 620.16M776.36 620.16A10.45 10.45 0 0 1 779.83 638.86" stroke="#1b1b1b" stroke-width="1.7" fill="none"/><line x1="773.83" y1="630.5" x2="773.83" y2="619" stroke="#1b1b1b" stroke-width="1.5" stroke-linecap="round"/><path d="M770.73 614L776.93 614L773.83 617.9Z" fill="#1b1b1b"/><circle cx="773.83" cy="687.6" r="3" fill="#f2f2f2"/><path d="M812.88 614.6L806.38 618.4L812.88 622.2Z" fill="none" stroke="#1e1e1e" stroke-width="1.1"/><circle cx="877.97" cy="565.8" r="5.4" fill="#7b8cc8"/><path d="M877.97 565.8L877.97 560.4A5.4 5.4 0 0 1 883.37 565.8Z" fill="#3d4566"/><circle cx="877.97" cy="565.8" r="5.4" fill="none" stroke="#24252e" stroke-width="0.9"/><path d="M849.53 638.86A10.45 10.45 0 0 1 852.99 620.16M858.05 620.16A10.45 10.45 0 0 1 861.51 638.86" stroke="#1b1b1b" stroke-width="1.7" fill="none"/><line x1="855.52" y1="630.5" x2="855.52" y2="619" stroke="#1b1b1b" stroke-width="1.5" stroke-linecap="round"/><path d="M852.42 614L858.62 614L855.52 617.9Z" fill="#1b1b1b"/><circle cx="855.52" cy="687.6" r="3" fill="#f2f2f2"/><path d="M894.57 602.2L888.07 606L894.57 609.8Z" fill="none" stroke="#1e1e1e" stroke-width="1.1"/><circle cx="959.66" cy="565.8" r="5.4" fill="#7b8cc8"/><path d="M959.66 565.8L959.66 560.4A5.4 5.4 0 0 1 965.06 565.8Z" fill="#3d4566"/><circle cx="959.66" cy="565.8" r="5.4" fill="none" stroke="#24252e" stroke-width="0.9"/><path d="M931.21 638.86A10.45 10.45 0 0 1 934.68 620.16M939.74 620.16A10.45 10.45 0 0 1 943.2 638.86" stroke="#1b1b1b" stroke-width="1.7" fill="none"/><line x1="937.21" y1="630.5" x2="937.21" y2="619" stroke="#1b1b1b" stroke-width="1.5" stroke-linecap="round"/><path d="M934.11 614L940.31 614L937.21 617.9Z" fill="#1b1b1b"/><circle cx="937.21" cy="687.6" r="3" fill="#f2f2f2"/><path d="M976.26 602.2L969.76 606L976.26 609.8Z" fill="none" stroke="#1e1e1e" stroke-width="1.1"/><circle cx="1041.34" cy="565.8" r="5.4" fill="#7b8cc8"/><path d="M1041.34 565.8L1041.34 560.4A5.4 5.4 0 0 1 1046.74 565.8Z" fill="#3d4566"/><circle cx="1041.34" cy="565.8" r="5.4" fill="none" stroke="#24252e" stroke-width="0.9"/><path d="M1012.9 638.86A10.45 10.45 0 0 1 1016.37 620.16M1021.42 620.16A10.45 10.45 0 0 1 1024.89 638.86" stroke="#1b1b1b" stroke-width="1.7" fill="none"/><line x1="1018.89" y1="630.5" x2="1018.89" y2="619" stroke="#1b1b1b" stroke-width="1.5" stroke-linecap="round"/><path d="M1015.79 614L1021.99 614L1018.89 617.9Z" fill="#1b1b1b"/><circle cx="1018.89" cy="687.6" r="3" fill="#f2f2f2"/><path d="M1057.94 603L1051.44 606.8L1057.94 610.6Z" fill="none" stroke="#1e1e1e" stroke-width="1.1"/><circle cx="1123.03" cy="565.8" r="5.4" fill="#7b8cc8"/><path d="M1123.03 565.8L1123.03 560.4A5.4 5.4 0 0 1 1128.43 565.8Z" fill="#3d4566"/><circle cx="1123.03" cy="565.8" r="5.4" fill="none" stroke="#24252e" stroke-width="0.9"/><path d="M1094.59 638.86A10.45 10.45 0 0 1 1098.05 620.16M1103.11 620.16A10.45 10.45 0 0 1 1106.57 638.86" stroke="#1b1b1b" stroke-width="1.7" fill="none"/><line x1="1100.58" y1="630.5" x2="1100.58" y2="619" stroke="#1b1b1b" stroke-width="1.5" stroke-linecap="round"/><path d="M1097.48 614L1103.68 614L1100.58 617.9Z" fill="#1b1b1b"/><circle cx="1100.58" cy="687.6" r="3" fill="#f2f2f2"/><path d="M1139.63 603L1133.13 606.8L1139.63 610.6Z" fill="none" stroke="#1e1e1e" stroke-width="1.1"/><circle cx="1204.72" cy="565.8" r="5.4" fill="#7b8cc8"/><path d="M1204.72 565.8L1204.72 560.4A5.4 5.4 0 0 1 1210.12 565.8Z" fill="#3d4566"/><circle cx="1204.72" cy="565.8" r="5.4" fill="none" stroke="#24252e" stroke-width="0.9"/><path d="M1176.27 638.86A10.45 10.45 0 0 1 1179.74 620.16M1184.8 620.16A10.45 10.45 0 0 1 1188.26 638.86" stroke="#1b1b1b" stroke-width="1.7" fill="none"/><line x1="1182.27" y1="630.5" x2="1182.27" y2="619" stroke="#1b1b1b" stroke-width="1.5" stroke-linecap="round"/><path d="M1179.17 614L1185.37 614L1182.27 617.9Z" fill="#1b1b1b"/><circle cx="1182.27" cy="687.6" r="3" fill="#f2f2f2"/><path d="M1221.32 603L1214.82 606.8L1221.32 610.6Z" fill="none" stroke="#1e1e1e" stroke-width="1.1"/><circle cx="1286.4" cy="565.8" r="5.4" fill="#7b8cc8"/><path d="M1286.4 565.8L1286.4 560.4A5.4 5.4 0 0 1 1291.81 565.8Z" fill="#3d4566"/><circle cx="1286.4" cy="565.8" r="5.4" fill="none" stroke="#24252e" stroke-width="0.9"/><path d="M1257.96 638.86A10.45 10.45 0 0 1 1261.43 620.16M1266.48 620.16A10.45 10.45 0 0 1 1269.95 638.86" stroke="#1b1b1b" stroke-width="1.7" fill="none"/><line x1="1263.95" y1="630.5" x2="1263.95" y2="619" stroke="#1b1b1b" stroke-width="1.5" stroke-linecap="round"/><path d="M1260.86 614L1267.05 614L1263.95 617.9Z" fill="#1b1b1b"/><circle cx="1263.95" cy="687.6" r="3" fill="#f2f2f2"/><path d="M1303 603L1296.5 606.8L1303 610.6Z" fill="none" stroke="#1e1e1e" stroke-width="1.1"/><circle cx="1367.69" cy="565.8" r="5.4" fill="#7ea0c0"/><path d="M1367.69 565.8L1367.69 560.4A5.4 5.4 0 0 1 1369.98 570.69Z" fill="#35465a"/><circle cx="1367.69" cy="565.8" r="5.4" fill="none" stroke="#1e1e22" stroke-width="1"/><path d="M1339.65 638.86A10.45 10.45 0 0 1 1343.11 620.16M1348.17 620.16A10.45 10.45 0 0 1 1351.64 638.86" stroke="#1b1b1b" stroke-width="1.7" fill="none"/><line x1="1345.64" y1="630.5" x2="1345.64" y2="619" stroke="#1b1b1b" stroke-width="1.5" stroke-linecap="round"/><path d="M1342.54 614L1348.74 614L1345.64 617.9Z" fill="#1b1b1b"/><circle cx="1345.64" cy="687.6" r="3" fill="#f2f2f2"/><path d="M1345.64 687.6L1347.14 685M1345.64 687.6L1344.14 689" stroke="#333" stroke-width="1"/><path d="M1384.69 610.6L1378.19 614.4L1384.69 618.2Z" fill="none" stroke="#1e1e1e" stroke-width="1.1"/><rect x="1414.2" y="651.4" width="1.9" height="3.2" fill="none" stroke="#1a1a1a" stroke-width="0.9"/><path d="M1416.5 651.4l2.5 -2.1v7.4l-2.5 -2.1Z" fill="#1a1a1a"/><path d="M1446.7 603L1440.2 606.8L1446.7 610.6Z" fill="none" stroke="#1e1e1e" stroke-width="1.1"/><rect x="1463.2" y="651.4" width="1.9" height="3.2" fill="none" stroke="#1a1a1a" stroke-width="0.9"/><path d="M1465.5 651.4l2.5 -2.1v7.4l-2.5 -2.1Z" fill="#1a1a1a"/><path d="M1495.7 622L1489.2 625.8L1495.7 629.6Z" fill="none" stroke="#1e1e1e" stroke-width="1.1"/><rect x="1512.4" y="651.4" width="1.9" height="3.2" fill="none" stroke="#1a1a1a" stroke-width="0.9"/><path d="M1514.7 651.4l2.5 -2.1v7.4l-2.5 -2.1Z" fill="#1a1a1a"/><path d="M1544.9 603L1538.4 606.8L1544.9 610.6Z" fill="none" stroke="#1e1e1e" stroke-width="1.1"/><circle cx="12" cy="726.4" r="5.1" fill="#f0902c" stroke="#2a2a2a" stroke-width="0.8"/><circle cx="182.3" cy="726.4" r="5.4" fill="#232323"/><path d="M179.7 726.6Q180.1 723.6 183.3 723.5M184.9 726.2Q184.5 729.2 181.3 729.3" stroke="#e0e0e0" stroke-width="1" fill="none"/><path d="M178 726.2h3.4l-1.7 1.8Z M186.6 726.6h-3.4l1.7 -1.8Z" fill="#e0e0e0"/><circle cx="196.7" cy="726.4" r="5.4" fill="#232323"/><path d="M193.6 723.7h5.2l1 1v5.2h-6.2Z" fill="#ececec"/><circle cx="196.7" cy="724.5" r="0.9" fill="#232323"/><rect x="194.1" y="727.3" width="5.2" height="0.5" fill="#9a9a9a"/><circle cx="12.7" cy="742.9" r="5.4" fill="#f0902c"/><path d="M10.4 745.5a3 3 0 1 1 4.2 0" stroke="#2a2a2a" stroke-width="1.1" fill="none"/><circle cx="12.7" cy="743.5" r="1.2" fill="#2a2a2a"/><circle cx="12.7" cy="757.3" r="5.4" fill="#2a2a2a"/><path d="M10 757.3h5.4M12.7 754.6v5.4" stroke="#e8e8e8" stroke-width="1.2"/><circle cx="12.7" cy="770.3" r="5.4" fill="#2a2a2a"/><path d="M10 770.3h5.4" stroke="#e8e8e8" stroke-width="1.2"/><circle cx="12.7" cy="785" r="5.4" fill="#9a9a9a"/><rect x="9.9" y="783.2" width="5.6" height="3.8" fill="#3a3a3a"/><circle cx="12.7" cy="785.1" r="1.1" fill="#9a9a9a"/><circle cx="12.7" cy="799.5" r="5.4" fill="#f0902c"/><rect x="9.6" y="797.6" width="6.2" height="3.8" fill="none" stroke="#2a2a2a" stroke-width="1"/><path d="M9.6 799.2h6.2" stroke="#2a2a2a" stroke-width="0.8"/><circle cx="12.7" cy="814" r="5.4" fill="#9a9a9a"/><path d="M9.8 812h5.8M9.8 814h5.8M9.8 816h5.8" stroke="#5a5a5a" stroke-width="0.8"/><path d="M38 787.66A10.2 10.2 0 1 1 49.7 787.66" stroke="#1b1b1b" stroke-width="2" fill="none"/><path d="M38 787.66A10.2 10.2 0 0 1 40.8 769.57" stroke="#2fb3d6" stroke-width="2" fill="none"/><line x1="43.85" y1="779.3" x2="40.5" y2="768.61" stroke="#1b1b1b" stroke-width="2" stroke-linecap="butt"/><path d="M82.5 787.66A10.2 10.2 0 1 1 94.2 787.66" stroke="#1b1b1b" stroke-width="2" fill="none"/><line x1="88.35" y1="779.3" x2="81.93" y2="788.47" stroke="#1b1b1b" stroke-width="2" stroke-linecap="butt"/><path d="M127.2 787.66A10.2 10.2 0 1 1 138.9 787.66" stroke="#1b1b1b" stroke-width="2" fill="none"/><path d="M127.2 787.66A10.2 10.2 0 0 1 134.59 769.22" stroke="#2fb3d6" stroke-width="2" fill="none"/><line x1="133.05" y1="779.3" x2="134.74" y2="768.23" stroke="#1b1b1b" stroke-width="2" stroke-linecap="butt"/><path d="M172 787.66A10.2 10.2 0 1 1 183.7 787.66" stroke="#1b1b1b" stroke-width="2" fill="none"/><line x1="177.85" y1="779.3" x2="171.43" y2="788.47" stroke="#1b1b1b" stroke-width="2" stroke-linecap="butt"/><path d="M38 858.56A10.2 10.2 0 1 1 49.7 858.56" stroke="#1b1b1b" stroke-width="2" fill="none"/><path d="M38 858.56A10.2 10.2 0 1 1 49.7 858.56" stroke="#2fb3d6" stroke-width="2" fill="none"/><line x1="43.85" y1="850.2" x2="50.27" y2="859.37" stroke="#1b1b1b" stroke-width="2" stroke-linecap="butt"/><path d="M82.5 858.56A10.2 10.2 0 1 1 94.2 858.56" stroke="#1b1b1b" stroke-width="2" fill="none"/><path d="M82.5 858.56A10.2 10.2 0 1 1 97.72 846.17" stroke="#2fb3d6" stroke-width="2" fill="none"/><line x1="88.35" y1="850.2" x2="98.64" y2="845.77" stroke="#1b1b1b" stroke-width="2" stroke-linecap="butt"/><path d="M127.2 858.56A10.2 10.2 0 1 1 138.9 858.56" stroke="#1b1b1b" stroke-width="2" fill="none"/><line x1="133.05" y1="850.2" x2="126.63" y2="859.37" stroke="#1b1b1b" stroke-width="2" stroke-linecap="butt"/><path d="M172 858.56A10.2 10.2 0 1 1 183.7 858.56" stroke="#1b1b1b" stroke-width="2" fill="none"/><line x1="177.85" y1="850.2" x2="171.43" y2="859.37" stroke="#1b1b1b" stroke-width="2" stroke-linecap="butt"/><circle cx="215.4" cy="726.4" r="5.1" fill="#f0902c" stroke="#2a2a2a" stroke-width="0.8"/><circle cx="425.7" cy="726.4" r="5.4" fill="#232323"/><path d="M423.1 726.6Q423.5 723.6 426.7 723.5M428.3 726.2Q427.9 729.2 424.7 729.3" stroke="#e0e0e0" stroke-width="1" fill="none"/><path d="M421.4 726.2h3.4l-1.7 1.8Z M430 726.6h-3.4l1.7 -1.8Z" fill="#e0e0e0"/><circle cx="440" cy="726.4" r="5.4" fill="#232323"/><path d="M436.9 723.7h5.2l1 1v5.2h-6.2Z" fill="#ececec"/><circle cx="440" cy="724.5" r="0.9" fill="#232323"/><rect x="437.4" y="727.3" width="5.2" height="0.5" fill="#9a9a9a"/><circle cx="216.3" cy="742.8" r="5.2" fill="#8a8a8a"/><path d="M214 745.4a3 3 0 1 1 4.4 0" stroke="#4a4a4a" stroke-width="1.1" fill="none"/><circle cx="216.3" cy="757.2" r="5.2" fill="#8a8a8a"/><circle cx="216.3" cy="757.6" r="2.2" fill="none" stroke="#4a4a4a" stroke-width="1"/><circle cx="216.3" cy="772" r="5.4" fill="#f0902c"/><rect x="213.3" y="770.2" width="6" height="3.6" fill="none" stroke="#2a2a2a" stroke-width="1"/><circle cx="216.3" cy="786.5" r="5.4" fill="#f0902c"/><path d="M213.3 784.6h6M213.3 786.5h6M213.3 788.4h6" stroke="#2a2a2a" stroke-width="0.9"/><path d="M234 747v3.4M235.5 747.5v2.4M237 747l2.2 1.7l-2.2 1.7Z" stroke="#777" stroke-width="0.7" fill="#777"/><rect x="390.4" y="766.5" width="1.8" height="3" fill="none" stroke="#1a1a1a" stroke-width="0.9"/><path d="M392.6 766.5l2.4 -2v7l-2.4 -2Z" fill="#1a1a1a"/><circle cx="426.6" cy="768" r="5.4" fill="#232323"/><path d="M424 768.2Q424.4 765.2 427.6 765.1M429.2 767.8Q428.8 770.8 425.6 770.9" stroke="#e0e0e0" stroke-width="1" fill="none"/><path d="M422.3 767.8h3.4l-1.7 1.8Z M430.9 768.2h-3.4l1.7 -1.8Z" fill="#e0e0e0"/><rect x="390.4" y="783" width="1.8" height="3" fill="none" stroke="#1a1a1a" stroke-width="0.9"/><path d="M392.6 783l2.4 -2v7l-2.4 -2Z" fill="#1a1a1a"/><circle cx="426.6" cy="784.5" r="5.4" fill="#232323"/><path d="M424 784.7Q424.4 781.7 427.6 781.6M429.2 784.3Q428.8 787.3 425.6 787.4" stroke="#e0e0e0" stroke-width="1" fill="none"/><path d="M422.3 784.3h3.4l-1.7 1.8Z M430.9 784.7h-3.4l1.7 -1.8Z" fill="#e0e0e0"/><rect x="390.4" y="799.5" width="1.8" height="3" fill="none" stroke="#1a1a1a" stroke-width="0.9"/><path d="M392.6 799.5l2.4 -2v7l-2.4 -2Z" fill="#1a1a1a"/><circle cx="426.6" cy="801" r="5.4" fill="#232323"/><path d="M424 801.2Q424.4 798.2 427.6 798.1M429.2 800.8Q428.8 803.8 425.6 803.9" stroke="#e0e0e0" stroke-width="1" fill="none"/><path d="M422.3 800.8h3.4l-1.7 1.8Z M430.9 801.2h-3.4l1.7 -1.8Z" fill="#e0e0e0"/><rect x="390.4" y="816" width="1.8" height="3" fill="none" stroke="#1a1a1a" stroke-width="0.9"/><path d="M392.6 816l2.4 -2v7l-2.4 -2Z" fill="#1a1a1a"/><circle cx="426.6" cy="817.5" r="5.4" fill="#232323"/><path d="M424 817.7Q424.4 814.7 427.6 814.6M429.2 817.3Q428.8 820.3 425.6 820.4" stroke="#e0e0e0" stroke-width="1" fill="none"/><path d="M422.3 817.3h3.4l-1.7 1.8Z M430.9 817.7h-3.4l1.7 -1.8Z" fill="#e0e0e0"/><rect x="390.4" y="832.5" width="1.8" height="3" fill="none" stroke="#1a1a1a" stroke-width="0.9"/><path d="M392.6 832.5l2.4 -2v7l-2.4 -2Z" fill="#1a1a1a"/><circle cx="426.6" cy="834" r="5.4" fill="#232323"/><path d="M424 834.2Q424.4 831.2 427.6 831.1M429.2 833.8Q428.8 836.8 425.6 836.9" stroke="#e0e0e0" stroke-width="1" fill="none"/><path d="M422.3 833.8h3.4l-1.7 1.8Z M430.9 834.2h-3.4l1.7 -1.8Z" fill="#e0e0e0"/><rect x="390.4" y="849" width="1.8" height="3" fill="none" stroke="#1a1a1a" stroke-width="0.9"/><path d="M392.6 849l2.4 -2v7l-2.4 -2Z" fill="#1a1a1a"/><circle cx="426.6" cy="850.5" r="5.4" fill="#232323"/><path d="M424 850.7Q424.4 847.7 427.6 847.6M429.2 850.3Q428.8 853.3 425.6 853.4" stroke="#e0e0e0" stroke-width="1" fill="none"/><path d="M422.3 850.3h3.4l-1.7 1.8Z M430.9 850.7h-3.4l1.7 -1.8Z" fill="#e0e0e0"/><rect x="390.4" y="865.5" width="1.8" height="3" fill="none" stroke="#1a1a1a" stroke-width="0.9"/><path d="M392.6 865.5l2.4 -2v7l-2.4 -2Z" fill="#1a1a1a"/><circle cx="426.6" cy="867" r="5.4" fill="#232323"/><path d="M424 867.2Q424.4 864.2 427.6 864.1M429.2 866.8Q428.8 869.8 425.6 869.9" stroke="#e0e0e0" stroke-width="1" fill="none"/><path d="M422.3 866.8h3.4l-1.7 1.8Z M430.9 867.2h-3.4l1.7 -1.8Z" fill="#e0e0e0"/><circle cx="458.2" cy="726.4" r="5.1" fill="#f0902c" stroke="#2a2a2a" stroke-width="0.8"/><circle cx="458.2" cy="857.3" r="5.4" fill="#232323"/><path d="M455.6 857.5Q456 854.5 459.2 854.4M460.8 857.1Q460.4 860.1 457.2 860.2" stroke="#e0e0e0" stroke-width="1" fill="none"/><path d="M453.9 857.1h3.4l-1.7 1.8Z M462.5 857.5h-3.4l1.7 -1.8Z" fill="#e0e0e0"/><circle cx="458.2" cy="871.5" r="5.4" fill="#232323"/><path d="M455.1 868.8h5.2l1 1v5.2h-6.2Z" fill="#ececec"/><circle cx="458.2" cy="869.6" r="0.9" fill="#232323"/><rect x="455.6" y="872.4" width="5.2" height="0.5" fill="#9a9a9a"/><circle cx="494.2" cy="726.4" r="5.1" fill="#f0902c" stroke="#2a2a2a" stroke-width="0.8"/><circle cx="508.1" cy="726.4" r="5.4" fill="#2a2a2a"/><path d="M506.2 723.4L511 726.4L506.2 729.4Z" fill="#f0f0f0"/><circle cx="772" cy="726.4" r="5.4" fill="#232323"/><path d="M769.4 726.6Q769.8 723.6 773 723.5M774.6 726.2Q774.2 729.2 771 729.3" stroke="#e0e0e0" stroke-width="1" fill="none"/><path d="M767.7 726.2h3.4l-1.7 1.8Z M776.3 726.6h-3.4l1.7 -1.8Z" fill="#e0e0e0"/><circle cx="786" cy="726.4" r="5.4" fill="#232323"/><path d="M782.9 723.7h5.2l1 1v5.2h-6.2Z" fill="#ececec"/><circle cx="786" cy="724.5" r="0.9" fill="#232323"/><rect x="783.4" y="727.3" width="5.2" height="0.5" fill="#9a9a9a"/><path d="M501.68 773.23A9.8 9.8 0 1 1 512.92 773.23" stroke="#1b1b1b" stroke-width="2" fill="none"/><line x1="507.3" y1="765.2" x2="513.46" y2="756.33" stroke="#1b1b1b" stroke-width="2" stroke-linecap="butt"/><path d="M504.1 750L510.5 750L507.3 753.6Z" fill="#2fb3d6"/><path d="M507.3 755.4A9.8 9.8 0 0 1 512.49 756.89" stroke="#2fb3d6" stroke-width="2" fill="none"/><path d="M537 796.3 C590 796.3 610 795 618 790 C626 784 624 750 638 747 C650 745.3 700 745.3 719.3 745.3" stroke="#2fb3d6" stroke-width="1.5" fill="none"/><path d="M620.2 813.3h5.4l-2.7 3.4Z" fill="#e8e8e8"/><path d="M501.68 863.23A9.8 9.8 0 0 1 505.1 845.65M509.5 845.65A9.8 9.8 0 0 1 512.92 863.23" stroke="#1b1b1b" stroke-width="2" fill="none"/><line x1="507.3" y1="855.7" x2="507.3" y2="844.4" stroke="#1b1b1b" stroke-width="1.7"/><path d="M504.1 840L510.5 840L507.3 843.6Z" fill="#1b1b1b"/><path d="M538.38 863.23A9.8 9.8 0 1 1 549.62 863.23" stroke="#1b1b1b" stroke-width="2" fill="none"/><path d="M538.38 863.23A9.8 9.8 0 0 1 546.45 845.71" stroke="#2fb3d6" stroke-width="2" fill="none"/><line x1="544" y1="855.2" x2="546.7" y2="844.74" stroke="#1b1b1b" stroke-width="2" stroke-linecap="butt"/><path d="M574.78 863.23A9.8 9.8 0 1 1 586.02 863.23" stroke="#1b1b1b" stroke-width="2" fill="none"/><path d="M574.78 863.23A9.8 9.8 0 0 1 572.09 850.01" stroke="#2fb3d6" stroke-width="2" fill="none"/><line x1="580.4" y1="855.2" x2="571.24" y2="849.48" stroke="#1b1b1b" stroke-width="2" stroke-linecap="butt"/><path d="M611.78 863.23A9.8 9.8 0 0 1 615.2 845.65M619.6 845.65A9.8 9.8 0 0 1 623.02 863.23" stroke="#1b1b1b" stroke-width="2" fill="none"/><line x1="617.4" y1="855.7" x2="617.4" y2="844.4" stroke="#1b1b1b" stroke-width="1.7"/><path d="M614.2 840L620.6 840L617.4 843.6Z" fill="#1b1b1b"/><path d="M766.38 817.53A9.8 9.8 0 1 1 777.62 817.53" stroke="#1b1b1b" stroke-width="2" fill="none"/><path d="M766.38 817.53A9.8 9.8 0 0 1 762.4 811.45" stroke="#2fb3d6" stroke-width="2" fill="none"/><line x1="772" y1="809.5" x2="761.42" y2="811.65" stroke="#1b1b1b" stroke-width="2" stroke-linecap="butt"/><path d="M766.38 863.23A9.8 9.8 0 1 1 777.62 863.23" stroke="#1b1b1b" stroke-width="2" fill="none"/><path d="M766.38 863.23A9.8 9.8 0 1 1 777.62 863.23" stroke="#2fb3d6" stroke-width="2" fill="none"/><line x1="772" y1="855.2" x2="778.19" y2="864.05" stroke="#1b1b1b" stroke-width="2" stroke-linecap="butt"/><circle cx="803.9" cy="726.4" r="5.1" fill="#f0902c" stroke="#2a2a2a" stroke-width="0.8"/><circle cx="1092.9" cy="726.4" r="5.4" fill="#232323"/><path d="M1090.3 726.6Q1090.7 723.6 1093.9 723.5M1095.5 726.2Q1095.1 729.2 1091.9 729.3" stroke="#e0e0e0" stroke-width="1" fill="none"/><path d="M1088.6 726.2h3.4l-1.7 1.8Z M1097.2 726.6h-3.4l1.7 -1.8Z" fill="#e0e0e0"/><circle cx="1106.8" cy="726.4" r="5.4" fill="#232323"/><path d="M1103.7 723.7h5.2l1 1v5.2h-6.2Z" fill="#ececec"/><circle cx="1106.8" cy="724.5" r="0.9" fill="#232323"/><rect x="1104.2" y="727.3" width="5.2" height="0.5" fill="#9a9a9a"/><path d="M815.38 792.33A9.8 9.8 0 1 1 826.62 792.33" stroke="#1b1b1b" stroke-width="2" fill="none"/><path d="M815.38 792.33A9.8 9.8 0 0 1 811.81 780.88" stroke="#2fb3d6" stroke-width="2" fill="none"/><line x1="821" y1="784.3" x2="810.88" y2="780.54" stroke="#1b1b1b" stroke-width="2" stroke-linecap="butt"/><path d="M875.38 792.33A9.8 9.8 0 1 1 886.62 792.33" stroke="#1b1b1b" stroke-width="2" fill="none"/><path d="M875.38 792.33A9.8 9.8 0 0 1 880.01 774.55" stroke="#2fb3d6" stroke-width="2" fill="none"/><line x1="881" y1="784.3" x2="879.91" y2="773.56" stroke="#1b1b1b" stroke-width="2" stroke-linecap="butt"/><rect x="848.2" y="786.9" width="6" height="4" rx="1.2" fill="none" stroke="#d8d8d8" stroke-width="0.9"/><path d="M846.4 788.9h9.6" stroke="#d8d8d8" stroke-width="0.9"/><path d="M838.5 820.4v6.4l-5 -3.2Z" fill="#8a8a8a"/><path d="M899 820.4v6.4l-5 -3.2Z" fill="#8a8a8a"/><path d="M845.18 863.83A9.8 9.8 0 1 1 856.42 863.83" stroke="#1b1b1b" stroke-width="2" fill="none"/><path d="M845.18 863.83A9.8 9.8 0 0 1 855.55 847.23" stroke="#2fb3d6" stroke-width="2" fill="none"/><line x1="850.8" y1="855.8" x2="856.04" y2="846.35" stroke="#1b1b1b" stroke-width="2" stroke-linecap="butt"/><path d="M907 786 C918 770 922 764 935 763 L1036 763 C1050 764 1052 770 1055 798" stroke="#a8a8a8" stroke-width="1.2" fill="none"/><circle cx="982.2" cy="750.6" r="4.3" fill="none" stroke="#9a9a9a" stroke-width="1"/><rect x="911.8" y="820.3" width="6.6" height="6.6" fill="none" stroke="#f0902c" stroke-width="1"/><path d="M1080.28 863.83A9.8 9.8 0 1 1 1091.52 863.83" stroke="#1b1b1b" stroke-width="2" fill="none"/><path d="M1080.28 863.83A9.8 9.8 0 0 1 1083.45 846.31" stroke="#2fb3d6" stroke-width="2" fill="none"/><line x1="1085.9" y1="855.8" x2="1083.2" y2="845.34" stroke="#1b1b1b" stroke-width="2" stroke-linecap="butt"/><circle cx="1124.4" cy="726.4" r="5.1" fill="#f0902c" stroke="#2a2a2a" stroke-width="0.8"/><circle cx="1520" cy="726.4" r="5.4" fill="#232323"/><path d="M1517.4 726.6Q1517.8 723.6 1521 723.5M1522.6 726.2Q1522.2 729.2 1519 729.3" stroke="#e0e0e0" stroke-width="1" fill="none"/><path d="M1515.7 726.2h3.4l-1.7 1.8Z M1524.3 726.6h-3.4l1.7 -1.8Z" fill="#e0e0e0"/><circle cx="1533.6" cy="726.4" r="5.4" fill="#232323"/><path d="M1530.5 723.7h5.2l1 1v5.2h-6.2Z" fill="#ececec"/><circle cx="1533.6" cy="724.5" r="0.9" fill="#232323"/><rect x="1531" y="727.3" width="5.2" height="0.5" fill="#9a9a9a"/><path d="M1123 779 L1150 779 C1158 779.5 1162 782 1168 788 C1176 797 1183 806 1191 812.7" stroke="#2fb3d6" stroke-width="1.2" fill="none"/><circle cx="1156.3" cy="782.3" r="4.5" fill="none" stroke="#f0902c" stroke-width="1.3"/><circle cx="1236.4" cy="781.5" r="4.5" fill="none" stroke="#f0902c" stroke-width="1.3"/><path d="M1307.2 764.6h5.4l-2.7 3.4Z" fill="#e8e8e8"/><path d="M1293.58 813.33A9.8 9.8 0 1 1 1304.82 813.33" stroke="#1b1b1b" stroke-width="2" fill="none"/><path d="M1293.58 813.33A9.8 9.8 0 1 1 1308.99 805.78" stroke="#2fb3d6" stroke-width="2" fill="none"/><line x1="1299.2" y1="805.3" x2="1309.99" y2="805.83" stroke="#1b1b1b" stroke-width="2" stroke-linecap="butt"/><path d="M1137.78 866.13A9.8 9.8 0 1 1 1149.02 866.13" stroke="#1b1b1b" stroke-width="2" fill="none"/><path d="M1137.78 866.13A9.8 9.8 0 0 1 1134.21 854.68" stroke="#2fb3d6" stroke-width="2" fill="none"/><line x1="1143.4" y1="858.1" x2="1133.28" y2="854.34" stroke="#1b1b1b" stroke-width="2" stroke-linecap="butt"/><path d="M1208.68 866.13A9.8 9.8 0 1 1 1219.92 866.13" stroke="#1b1b1b" stroke-width="2" fill="none"/><path d="M1208.68 866.13A9.8 9.8 0 0 1 1214.3 848.3" stroke="#2fb3d6" stroke-width="2" fill="none"/><line x1="1214.3" y1="858.1" x2="1214.3" y2="847.3" stroke="#1b1b1b" stroke-width="2" stroke-linecap="butt"/><path d="M1293.58 866.13A9.8 9.8 0 1 1 1304.82 866.13" stroke="#1b1b1b" stroke-width="2" fill="none"/><path d="M1293.58 866.13A9.8 9.8 0 1 1 1308.99 858.58" stroke="#2fb3d6" stroke-width="2" fill="none"/><line x1="1299.2" y1="858.1" x2="1309.99" y2="858.63" stroke="#1b1b1b" stroke-width="2" stroke-linecap="butt"/><path d="M1325.2 774.4 L1393 774.4 C1400 774.6 1403 778 1406 780.5 C1408 782 1410 782.7 1413 782.7 L1421 782.7" stroke="#2fb3d6" stroke-width="1.3" fill="none"/><circle cx="1349.7" cy="779.8" r="4.6" fill="none" stroke="#a0a0a0" stroke-width="1.1"/><path d="M1349.7 777v5.6" stroke="#a0a0a0" stroke-width="0.9"/><circle cx="1398.9" cy="782.1" r="4.6" fill="none" stroke="#f0902c" stroke-width="1.3"/><circle cx="1436.5" cy="802.9" r="4.6" fill="none" stroke="#f0902c" stroke-width="1.3"/><path d="M1343.18 865.03A9.8 9.8 0 1 1 1354.42 865.03" stroke="#1b1b1b" stroke-width="2" fill="none"/><line x1="1348.8" y1="857" x2="1351.5" y2="846.54" stroke="#1b1b1b" stroke-width="2" stroke-linecap="butt"/><path d="M1341.87 863.93A9.8 9.8 0 0 1 1351.17 847.49" stroke="#8a8a8a" stroke-width="2" fill="none"/><circle cx="1340.2" cy="848.2" r="1.8" fill="#30e060"/><path d="M1436.38 865.03A9.8 9.8 0 1 1 1447.62 865.03" stroke="#1b1b1b" stroke-width="2" fill="none"/><path d="M1436.38 865.03A9.8 9.8 0 0 1 1447.59 848.95" stroke="#2fb3d6" stroke-width="2" fill="none"/><line x1="1442" y1="857" x2="1448.16" y2="848.13" stroke="#1b1b1b" stroke-width="2" stroke-linecap="butt"/><path d="M1472.38 865.03A9.8 9.8 0 1 1 1483.62 865.03" stroke="#1b1b1b" stroke-width="2" fill="none"/><path d="M1472.38 865.03A9.8 9.8 0 0 1 1472.01 849.25" stroke="#2fb3d6" stroke-width="2" fill="none"/><line x1="1478" y1="857" x2="1471.4" y2="848.45" stroke="#1b1b1b" stroke-width="2" stroke-linecap="butt"/><path d="M1514.08 765.33A9.8 9.8 0 1 1 1525.32 765.33" stroke="#1b1b1b" stroke-width="2" fill="none"/><path d="M1514.08 765.33A9.8 9.8 0 0 1 1519.7 747.5" stroke="#2fb3d6" stroke-width="2" fill="none"/><line x1="1519.7" y1="757.3" x2="1519.7" y2="746.5" stroke="#1b1b1b" stroke-width="2" stroke-linecap="butt"/><path d="M1514.08 815.23A9.8 9.8 0 1 1 1525.32 815.23" stroke="#1b1b1b" stroke-width="2" fill="none"/><path d="M1514.08 815.23A9.8 9.8 0 0 1 1519.7 797.4" stroke="#2fb3d6" stroke-width="2" fill="none"/><line x1="1519.7" y1="807.2" x2="1519.7" y2="796.4" stroke="#1b1b1b" stroke-width="2" stroke-linecap="butt"/><path d="M1514.08 865.03A9.8 9.8 0 1 1 1525.32 865.03" stroke="#1b1b1b" stroke-width="2" fill="none"/><path d="M1514.08 865.03A9.8 9.8 0 0 1 1522.63 847.65" stroke="#2fb3d6" stroke-width="2" fill="none"/><line x1="1519.7" y1="857" x2="1522.93" y2="846.69" stroke="#1b1b1b" stroke-width="2" stroke-linecap="butt"/><circle cx="1.5" cy="9.5" r="5.6" fill="#3e3e3e" stroke="#262626" stroke-width="1.8"/><circle cx="0" cy="700" r="6.4" fill="#2e2e2e" stroke="#2a2a2a" stroke-width="1"/><path d="M-2 697.5q2 1.5 4 0M-2 700.5q2 1.5 4 0" stroke="#555" stroke-width="0.9" fill="none"/></svg>
</body></html>
